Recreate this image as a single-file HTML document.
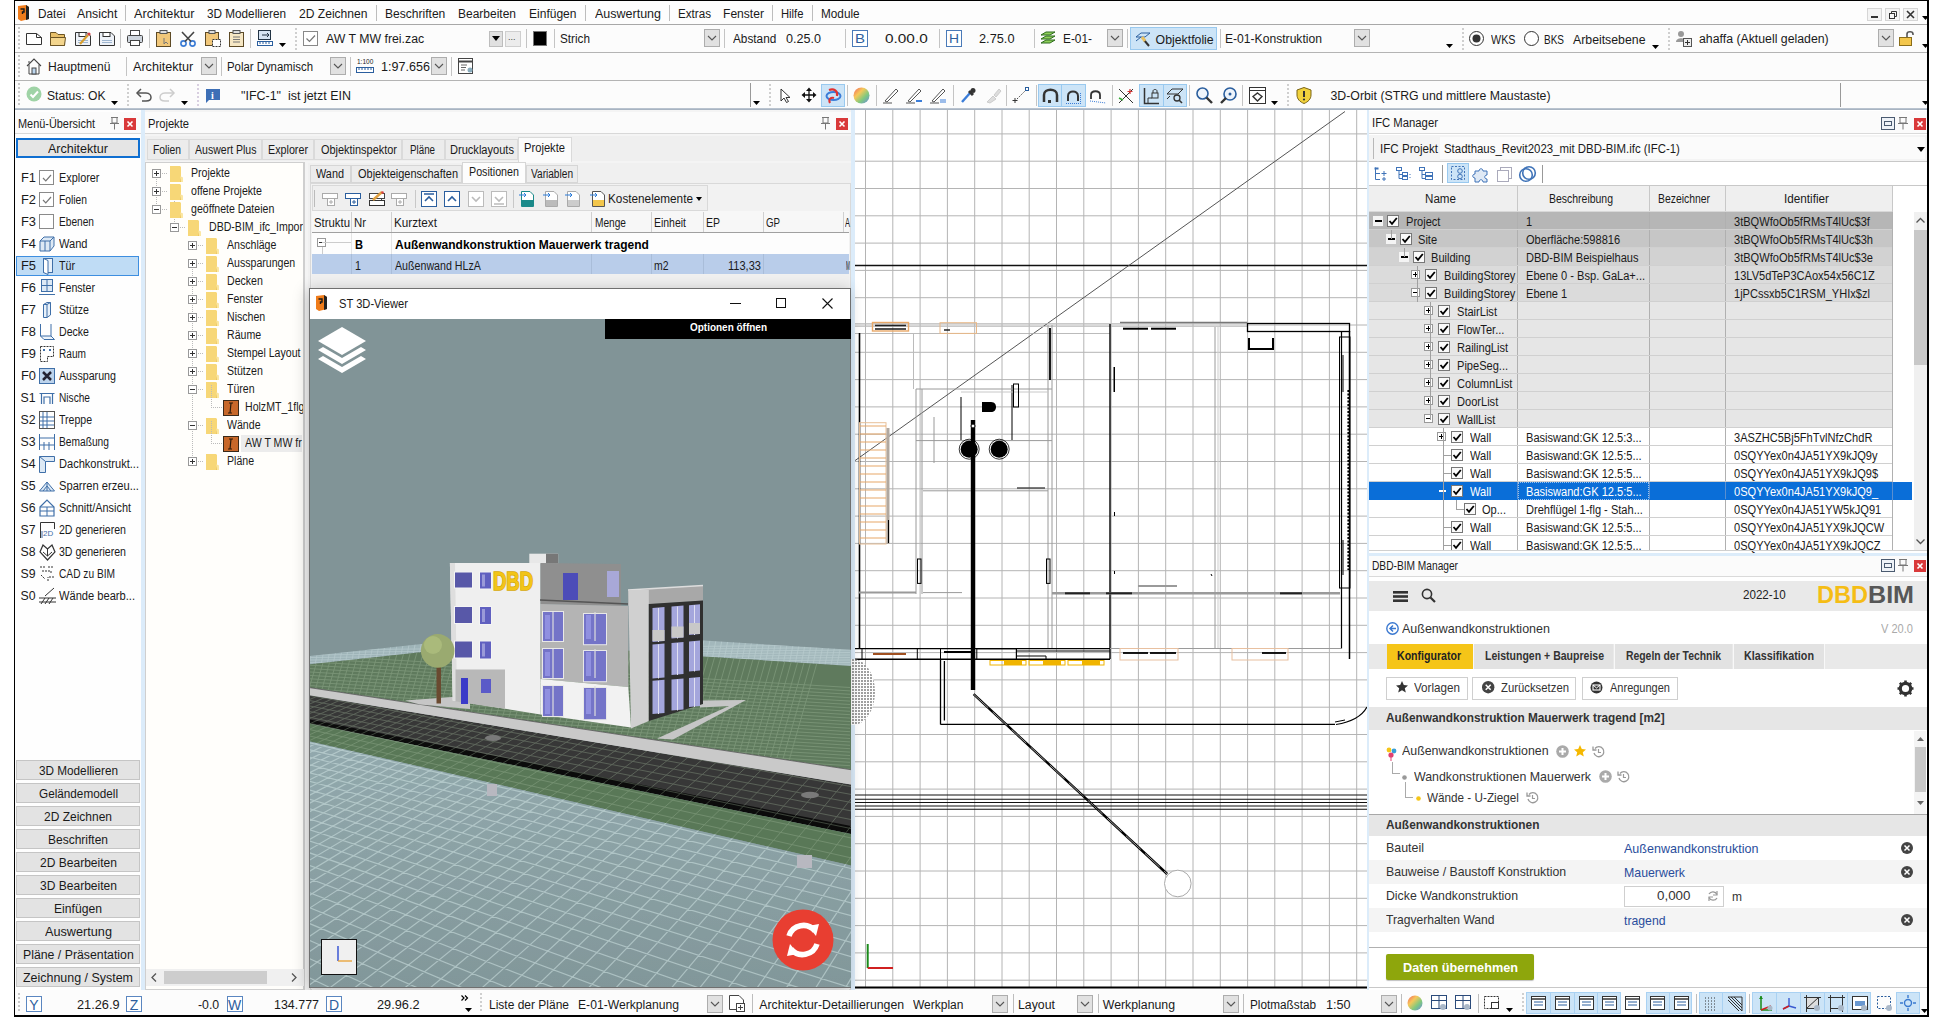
<!DOCTYPE html>
<html><head><meta charset="utf-8">
<style>
*{margin:0;padding:0;box-sizing:border-box}
html,body{width:1943px;height:1017px;overflow:hidden;background:#fff;font-family:"Liberation Sans",sans-serif;font-size:12px;color:#111}
.a{position:absolute}
.t{position:absolute;white-space:pre;line-height:1}
svg{position:absolute;overflow:visible}
</style></head><body>
<div class="a" style="left:14px;top:0px;width:1915px;height:1017px;background:#fcfcfc;"></div>
<div class="a" style="left:14px;top:0px;width:1915px;height:1px;background:#000;"></div>
<div class="a" style="left:14px;top:0px;width:1px;height:1017px;background:#000;"></div>
<div class="a" style="left:1927px;top:0px;width:2px;height:1017px;background:#000;"></div>
<div class="a" style="left:14px;top:1015px;width:1915px;height:2px;background:#000;"></div>
<div class="a" style="left:15px;top:1px;width:1912px;height:23px;background:#fdfdfd;"></div>
<div class="a" style="left:15px;top:24px;width:1912px;height:1px;background:#a8a8a8;"></div>
<svg style="left:18px;top:5px;" width="12" height="16" viewBox="0 0 12 16"><path d="M0 1 L8 0 L11 2 V14 L3 16 L0 14Z" fill="#f07c1a"/><path d="M8 0 L11 2 V14 L8 15Z" fill="#222"/><path d="M2.5 4 H6 V7 H4.5 V9" stroke="#1a1a1a" stroke-width="1.4" fill="none"/></svg>
<div class="t" style="left:37.5px;top:7.6px;font-size:12.3px;color:#1a1a1a;transform:scaleX(0.958);transform-origin:0 0;">Datei</div>
<div class="t" style="left:77.0px;top:7.6px;font-size:12.3px;color:#1a1a1a;">Ansicht</div>
<div class="t" style="left:134.3px;top:7.6px;font-size:12.3px;color:#1a1a1a;transform:scaleX(1.029);transform-origin:0 0;">Architektur</div>
<div class="t" style="left:207.0px;top:7.6px;font-size:12.3px;color:#1a1a1a;transform:scaleX(0.955);transform-origin:0 0;">3D Modellieren</div>
<div class="t" style="left:299.0px;top:7.6px;font-size:12.3px;color:#1a1a1a;transform:scaleX(0.982);transform-origin:0 0;">2D Zeichnen</div>
<div class="t" style="left:384.7px;top:7.6px;font-size:12.3px;color:#1a1a1a;transform:scaleX(0.980);transform-origin:0 0;">Beschriften</div>
<div class="t" style="left:458.0px;top:7.6px;font-size:12.3px;color:#1a1a1a;transform:scaleX(0.975);transform-origin:0 0;">Bearbeiten</div>
<div class="t" style="left:529.0px;top:7.6px;font-size:12.3px;color:#1a1a1a;transform:scaleX(0.978);transform-origin:0 0;">Einfügen</div>
<div class="t" style="left:594.5px;top:7.6px;font-size:12.3px;color:#1a1a1a;transform:scaleX(1.016);transform-origin:0 0;">Auswertung</div>
<div class="t" style="left:678.0px;top:7.6px;font-size:12.3px;color:#1a1a1a;transform:scaleX(0.947);transform-origin:0 0;">Extras</div>
<div class="t" style="left:723.0px;top:7.6px;font-size:12.3px;color:#1a1a1a;transform:scaleX(0.983);transform-origin:0 0;">Fenster</div>
<div class="t" style="left:781.0px;top:7.6px;font-size:12.3px;color:#1a1a1a;transform:scaleX(0.914);transform-origin:0 0;">Hilfe</div>
<div class="t" style="left:821.0px;top:7.6px;font-size:12.3px;color:#1a1a1a;transform:scaleX(0.957);transform-origin:0 0;">Module</div>
<div class="a" style="left:125px;top:5px;width:1px;height:16px;background:#bdbdbd;"></div>
<div class="a" style="left:376px;top:5px;width:1px;height:16px;background:#bdbdbd;"></div>
<div class="a" style="left:585px;top:5px;width:1px;height:16px;background:#bdbdbd;"></div>
<div class="a" style="left:669px;top:5px;width:1px;height:16px;background:#bdbdbd;"></div>
<div class="a" style="left:772px;top:5px;width:1px;height:16px;background:#bdbdbd;"></div>
<div class="a" style="left:812px;top:5px;width:1px;height:16px;background:#bdbdbd;"></div>
<div class="a" style="left:1867px;top:8px;width:15px;height:13px;background:#f4f4f4;border:1px solid #d6d6d6;"></div>
<div class="a" style="left:1885px;top:8px;width:15px;height:13px;background:#f4f4f4;border:1px solid #d6d6d6;"></div>
<div class="a" style="left:1903px;top:8px;width:15px;height:13px;background:#f4f4f4;border:1px solid #d6d6d6;"></div>
<div class="a" style="left:1871px;top:16px;width:7px;height:2px;background:#333;"></div>
<svg style="left:1888px;top:10px;" width="10" height="10" viewBox="0 0 10 10"><rect x="1.5" y="3.5" width="5" height="5" fill="none" stroke="#333"/><path d="M3.5 3.5V1.5H8.5V6.5H6.5" fill="none" stroke="#333"/></svg>
<svg style="left:1906px;top:10px;" width="9" height="9" viewBox="0 0 9 9"><path d="M1 1L8 8M8 1L1 8" stroke="#333" stroke-width="1.6"/></svg>
<svg style="left:1922px;top:16px;" width="7" height="4" viewBox="0 0 7 4"><path d="M0 0 L7 0 L3.5 4Z" fill="#000"/></svg>
<div class="a" style="left:15px;top:52px;width:1912px;height:1px;background:#b4b4b4;"></div>
<div class="a" style="left:15px;top:80px;width:1912px;height:1px;background:#b4b4b4;"></div>
<div class="a" style="left:15px;top:108px;width:1912px;height:1px;background:#b9c3cf;"></div>
<div class="a" style="left:15px;top:109px;width:1912px;height:1px;background:#a8b4c2;"></div>
<div class="a" style="left:18px;top:27px;width:2px;height:23px;background:repeating-linear-gradient(to bottom,#c8c8c8 0 2px,transparent 2px 4px)"></div>
<div class="a" style="left:18px;top:55px;width:2px;height:23px;background:repeating-linear-gradient(to bottom,#c8c8c8 0 2px,transparent 2px 4px)"></div>
<div class="a" style="left:18px;top:83px;width:2px;height:23px;background:repeating-linear-gradient(to bottom,#c8c8c8 0 2px,transparent 2px 4px)"></div>
<svg style="left:26px;top:31px;" width="16" height="16" viewBox="0 0 16 16"><path d="M0.5 2.5 H10.5 L15.5 6.5 V13.5 H0.5Z" fill="#fff" stroke="#333"/><path d="M10.5 2.5 V6.5 H15.5" fill="none" stroke="#333"/></svg>
<svg style="left:50px;top:31px;" width="16" height="16" viewBox="0 0 16 16"><path d="M0.5 1.5 H6 L8 3.5 H14.5 V14.5 H0.5Z" fill="#e8c06a" stroke="#6b5424"/><path d="M0.5 6.5 H15.5 L14.5 14.5 H0.5Z" fill="#f3d58d" stroke="#6b5424"/></svg>
<svg style="left:75px;top:31px;" width="16" height="16" viewBox="0 0 16 16"><path d="M0.5 1.5 H12 L15.5 5 V14.5 H0.5Z" fill="#eef2f8" stroke="#333"/><rect x="4" y="1.5" width="7" height="4" fill="#fff" stroke="#333"/><path d="M3 9.5H13M3 11.5H13" stroke="#9fb6d0"/><path d="M5 13 L13 4" stroke="#d9a030" stroke-width="2.2"/><circle cx="14" cy="3" r="1.6" fill="#d94040"/></svg>
<svg style="left:99px;top:31px;" width="16" height="16" viewBox="0 0 16 16"><path d="M0.5 1.5 H12 L15.5 5 V14.5 H0.5Z" fill="#eef2f8" stroke="#333"/><rect x="4" y="1.5" width="7" height="4" fill="#fff" stroke="#333"/><path d="M3 9.5H13M3 11.5H13" stroke="#9fb6d0"/></svg>
<div class="a" style="left:120px;top:29px;width:1px;height:19px;background:#c4c4c4;"></div>
<svg style="left:127px;top:30px;" width="16" height="16" viewBox="0 0 16 16"><rect x="3.5" y="0.5" width="9" height="5" fill="#fff" stroke="#444"/><rect x="0.5" y="5.5" width="15" height="7" rx="1" fill="#cfd6de" stroke="#444"/><rect x="3.5" y="10.5" width="9" height="5" fill="#fff" stroke="#444"/></svg>
<div class="a" style="left:149px;top:29px;width:1px;height:19px;background:#c4c4c4;"></div>
<svg style="left:156px;top:30px;" width="15" height="17" viewBox="0 0 15 17"><rect x="0.5" y="2.5" width="14" height="14" fill="#f1c77a" stroke="#5d4a26"/><rect x="4" y="0.5" width="7" height="3" fill="#ddd" stroke="#555"/><path d="M8 8 L8 14 L10 12 L12 14" stroke="#777" fill="none"/></svg>
<svg style="left:180px;top:31px;" width="16" height="16" viewBox="0 0 16 16"><circle cx="3.5" cy="12.5" r="2.6" fill="none" stroke="#3a7bd5" stroke-width="1.6"/><circle cx="12.5" cy="12.5" r="2.6" fill="none" stroke="#3a7bd5" stroke-width="1.6"/><path d="M5 10.5 L14 1M11 10.5 L2 1" stroke="#444" stroke-width="1.6"/></svg>
<svg style="left:205px;top:30px;" width="16" height="17" viewBox="0 0 16 17"><rect x="0.5" y="2.5" width="13" height="13" fill="#f1c77a" stroke="#5d4a26"/><rect x="4" y="0.5" width="6" height="3" fill="#ddd" stroke="#555"/><rect x="7.5" y="9.5" width="8" height="7" fill="#fff" stroke="#333" stroke-dasharray="2 1"/></svg>
<svg style="left:229px;top:30px;" width="15" height="17" viewBox="0 0 15 17"><rect x="0.5" y="2.5" width="14" height="14" fill="#f6e7c4" stroke="#5d4a26"/><rect x="4" y="0.5" width="7" height="3" fill="#ddd" stroke="#555"/><path d="M4 7H11M4 9.5H11M4 12H11" stroke="#777"/></svg>
<div class="a" style="left:250px;top:29px;width:1px;height:19px;background:#c4c4c4;"></div>
<svg style="left:257px;top:30px;" width="16" height="17" viewBox="0 0 16 17"><rect x="1.5" y="0.5" width="12" height="9" fill="#d5e3f3" stroke="#234" /><path d="M5 5H12M10 3L12 5L10 7" stroke="#234" fill="none"/><rect x="0.5" y="11.5" width="15" height="4" fill="#fff" stroke="#2a5e9e"/><path d="M3 12V14M6 12V14M9 12V14M12 12V14" stroke="#2a5e9e"/></svg>
<svg style="left:279px;top:43px;" width="7" height="4" viewBox="0 0 7 4"><path d="M0 0 L7 0 L3.5 4Z" fill="#000"/></svg>
<div class="a" style="left:295px;top:28px;width:2px;height:22px;background:repeating-linear-gradient(to bottom,#cfcfcf 0 2px,transparent 2px 4px)"></div>
<div class="a" style="left:303px;top:31px;width:15px;height:15px;background:#fff;border:1px solid #888;"></div>
<svg style="left:305px;top:34px;" width="11" height="9" viewBox="0 0 11 9"><path d="M1.5 4.5L4.5 7.5L10 1.5" stroke="#777" stroke-width="1.2" fill="none"/></svg>
<div class="t" style="left:326.0px;top:32.6px;font-size:12.3px;color:#1a1a1a;">AW T MW frei.zac</div>
<div class="a" style="left:489px;top:31px;width:14px;height:16px;background:#e0e0e0;border:1px solid #bdbdbd;"></div>
<svg style="left:492px;top:36px;" width="8" height="5" viewBox="0 0 8 5"><path d="M0 0H8L4 5Z" fill="#000"/></svg>
<div class="a" style="left:505px;top:31px;width:16px;height:16px;background:#ececec;border:1px solid #cfcfcf;"></div>
<div class="t" style="left:508.0px;top:33.4px;font-size:9px;color:#444;">...</div>
<div class="a" style="left:526px;top:29px;width:1px;height:19px;background:#c4c4c4;"></div>
<div class="a" style="left:533px;top:31px;width:14px;height:15px;background:#000;border:1px solid #777;"></div>
<div class="a" style="left:554px;top:29px;width:1px;height:19px;background:#c4c4c4;"></div>
<div class="t" style="left:560.0px;top:32.6px;font-size:12.3px;color:#1a1a1a;transform:scaleX(0.954);transform-origin:0 0;">Strich</div>
<div class="a" style="left:704px;top:29px;width:16px;height:18px;background:#e1e1e1;border:1px solid #adadad;"></div>
<svg style="left:704px;top:29px;" width="16" height="18" viewBox="0 0 16 18"><path d="M4.0 7.0 L8.0 11.0 L12.0 7.0" stroke="#555" stroke-width="1.1" fill="none"/></svg>
<div class="a" style="left:724px;top:29px;width:1px;height:19px;background:#c4c4c4;"></div>
<div class="t" style="left:732.7px;top:32.6px;font-size:12.3px;color:#1a1a1a;transform:scaleX(0.959);transform-origin:0 0;">Abstand</div>
<div class="t" style="left:786.0px;top:32.6px;font-size:12.3px;color:#1a1a1a;transform:scaleX(1.023);transform-origin:0 0;">0.25.0</div>
<div class="a" style="left:845px;top:29px;width:1px;height:19px;background:#c4c4c4;"></div>
<div class="a" style="left:852px;top:30px;width:16px;height:17px;background:#fff;border:1px solid #4a7ab8;"></div>
<div class="t" style="left:855.0px;top:32.0px;font-size:13px;color:#2f5f9e;transform:scaleX(1.153);transform-origin:0 0;">B</div>
<div class="t" style="left:885.0px;top:32.6px;font-size:12.3px;color:#1a1a1a;transform:scaleX(1.249);transform-origin:0 0;">0.00.0</div>
<div class="a" style="left:939px;top:29px;width:1px;height:19px;background:#c4c4c4;"></div>
<div class="a" style="left:946px;top:30px;width:16px;height:17px;background:#fff;border:1px solid #4a7ab8;"></div>
<div class="t" style="left:949.0px;top:32.0px;font-size:13px;color:#2f5f9e;transform:scaleX(1.065);transform-origin:0 0;">H</div>
<div class="t" style="left:979.0px;top:32.6px;font-size:12.3px;color:#1a1a1a;transform:scaleX(1.038);transform-origin:0 0;">2.75.0</div>
<div class="a" style="left:1034px;top:29px;width:1px;height:19px;background:#c4c4c4;"></div>
<svg style="left:1040px;top:31px;" width="16" height="15" viewBox="0 0 16 15"><path d="M1 4L6 1H15L10 4Z" fill="#8fcf5a" stroke="#2d6b1e"/><path d="M1 8L6 5H15L10 8Z" fill="#8fcf5a" stroke="#2d6b1e"/><path d="M1 12L6 9H15L10 12Z" fill="#8fcf5a" stroke="#2d6b1e"/></svg>
<div class="t" style="left:1063.0px;top:32.6px;font-size:12.3px;color:#1a1a1a;transform:scaleX(0.964);transform-origin:0 0;">E-01-</div>
<div class="a" style="left:1107px;top:29px;width:16px;height:18px;background:#e1e1e1;border:1px solid #adadad;"></div>
<svg style="left:1107px;top:29px;" width="16" height="18" viewBox="0 0 16 18"><path d="M4.0 7.0 L8.0 11.0 L12.0 7.0" stroke="#555" stroke-width="1.1" fill="none"/></svg>
<div class="a" style="left:1127px;top:29px;width:1px;height:19px;background:#c4c4c4;"></div>
<div class="a" style="left:1130px;top:27px;width:87px;height:23px;background:#cce4f7;border:1px solid #99c9ef;"></div>
<svg style="left:1135px;top:31px;" width="16" height="16" viewBox="0 0 16 16"><path d="M1 6L6 2H15L10 6Z" fill="none" stroke="#2a5e9e"/><path d="M1 10L6 6" stroke="#2a5e9e"/><path d="M9 9L14 15" stroke="#333" stroke-width="2"/><path d="M7 6L10 10" stroke="#e8c060" stroke-width="3"/></svg>
<div class="t" style="left:1155.6px;top:33.6px;font-size:12.3px;color:#1a1a1a;">Objektfolie</div>
<div class="a" style="left:1220px;top:29px;width:1px;height:19px;background:#c4c4c4;"></div>
<div class="t" style="left:1225.0px;top:32.6px;font-size:12.3px;color:#1a1a1a;transform:scaleX(0.985);transform-origin:0 0;">E-01-Konstruktion</div>
<div class="a" style="left:1354px;top:29px;width:16px;height:18px;background:#e1e1e1;border:1px solid #adadad;"></div>
<svg style="left:1354px;top:29px;" width="16" height="18" viewBox="0 0 16 18"><path d="M4.0 7.0 L8.0 11.0 L12.0 7.0" stroke="#555" stroke-width="1.1" fill="none"/></svg>
<svg style="left:1446px;top:44px;" width="7" height="4" viewBox="0 0 7 4"><path d="M0 0 L7 0 L3.5 4Z" fill="#000"/></svg>
<div class="a" style="left:1462px;top:28px;width:2px;height:22px;background:repeating-linear-gradient(to bottom,#cfcfcf 0 2px,transparent 2px 4px)"></div>
<svg style="left:1469px;top:31px;" width="16" height="16" viewBox="0 0 16 16"><circle cx="7.5" cy="7.5" r="7" fill="#fff" stroke="#333"/><circle cx="7.5" cy="7.5" r="4" fill="#333"/></svg>
<div class="t" style="left:1490.5px;top:33.6px;font-size:12.3px;color:#1a1a1a;transform:scaleX(0.874);transform-origin:0 0;">WKS</div>
<svg style="left:1524px;top:31px;" width="15" height="15" viewBox="0 0 15 15"><circle cx="7.5" cy="7.5" r="7" fill="#fff" stroke="#333"/></svg>
<div class="t" style="left:1544.0px;top:33.6px;font-size:12.3px;color:#1a1a1a;transform:scaleX(0.813);transform-origin:0 0;">BKS</div>
<div class="t" style="left:1573.0px;top:33.6px;font-size:12.3px;color:#1a1a1a;">Arbeitsebene</div>
<svg style="left:1652px;top:45px;" width="7" height="4" viewBox="0 0 7 4"><path d="M0 0 L7 0 L3.5 4Z" fill="#000"/></svg>
<div class="a" style="left:1668px;top:28px;width:2px;height:22px;background:repeating-linear-gradient(to bottom,#cfcfcf 0 2px,transparent 2px 4px)"></div>
<svg style="left:1676px;top:30px;" width="16" height="17" viewBox="0 0 16 17"><circle cx="5" cy="4" r="3" fill="#999"/><path d="M0 12C0 7 10 7 10 12" fill="#999"/><rect x="7.5" y="8.5" width="8" height="8" fill="#eee" stroke="#555"/><path d="M11.5 10V15M9 12.5H14" stroke="#333"/></svg>
<div class="t" style="left:1699.0px;top:32.6px;font-size:12.3px;color:#1a1a1a;">ahaffa (Aktuell geladen)</div>
<div class="a" style="left:1878px;top:29px;width:16px;height:18px;background:#e1e1e1;border:1px solid #adadad;"></div>
<svg style="left:1878px;top:29px;" width="16" height="18" viewBox="0 0 16 18"><path d="M4.0 7.0 L8.0 11.0 L12.0 7.0" stroke="#555" stroke-width="1.1" fill="none"/></svg>
<svg style="left:1899px;top:30px;" width="18" height="17" viewBox="0 0 18 17"><path d="M8 7V4C8 1 14 1 14 4V5" stroke="#555" stroke-width="1.6" fill="none"/><rect x="0.5" y="7.5" width="12" height="8" fill="#f3c64b" stroke="#8a6d1a"/></svg>
<svg style="left:1922px;top:44px;" width="7" height="4" viewBox="0 0 7 4"><path d="M0 0 L7 0 L3.5 4Z" fill="#000"/></svg>
<svg style="left:26px;top:58px;" width="16" height="17" viewBox="0 0 16 17"><path d="M1 8L8 1L15 8" stroke="#444" fill="none" stroke-width="1.1"/><path d="M3 6.5V16H13V6.5" stroke="#444" fill="none"/><rect x="6" y="10" width="4" height="6" fill="#bcd6ee" stroke="#444"/><path d="M3 3V5" stroke="#444"/></svg>
<div class="t" style="left:48.4px;top:60.6px;font-size:12.3px;color:#1a1a1a;transform:scaleX(0.984);transform-origin:0 0;">Hauptmenü</div>
<div class="a" style="left:126px;top:57px;width:1px;height:19px;background:#c4c4c4;"></div>
<div class="t" style="left:132.5px;top:60.6px;font-size:12.3px;color:#1a1a1a;transform:scaleX(1.026);transform-origin:0 0;">Architektur</div>
<div class="a" style="left:201px;top:57px;width:16px;height:18px;background:#e1e1e1;border:1px solid #adadad;"></div>
<svg style="left:201px;top:57px;" width="16" height="18" viewBox="0 0 16 18"><path d="M4.0 7.0 L8.0 11.0 L12.0 7.0" stroke="#555" stroke-width="1.1" fill="none"/></svg>
<div class="a" style="left:221px;top:57px;width:1px;height:19px;background:#c4c4c4;"></div>
<div class="t" style="left:227.0px;top:60.6px;font-size:12.3px;color:#1a1a1a;transform:scaleX(0.925);transform-origin:0 0;">Polar Dynamisch</div>
<div class="a" style="left:330px;top:57px;width:16px;height:18px;background:#e1e1e1;border:1px solid #adadad;"></div>
<svg style="left:330px;top:57px;" width="16" height="18" viewBox="0 0 16 18"><path d="M4.0 7.0 L8.0 11.0 L12.0 7.0" stroke="#555" stroke-width="1.1" fill="none"/></svg>
<div class="a" style="left:350px;top:57px;width:1px;height:19px;background:#c4c4c4;"></div>
<svg style="left:356px;top:58px;" width="19" height="16" viewBox="0 0 19 16"><text x="1" y="6" font-size="6.5" font-family="Liberation Sans" fill="#222">1:100</text><rect x="0.5" y="9.5" width="17" height="5" fill="#fff" stroke="#2a5e9e"/><path d="M3 10V12M6 10V12M9 10V12M12 10V12M15 10V12" stroke="#2a5e9e"/></svg>
<div class="t" style="left:381.0px;top:60.6px;font-size:12.3px;color:#1a1a1a;transform:scaleX(1.023);transform-origin:0 0;">1:97.656</div>
<div class="a" style="left:431px;top:57px;width:16px;height:18px;background:#e1e1e1;border:1px solid #adadad;"></div>
<svg style="left:431px;top:57px;" width="16" height="18" viewBox="0 0 16 18"><path d="M4.0 7.0 L8.0 11.0 L12.0 7.0" stroke="#555" stroke-width="1.1" fill="none"/></svg>
<div class="a" style="left:451px;top:57px;width:1px;height:19px;background:#c4c4c4;"></div>
<svg style="left:458px;top:58px;" width="17" height="17" viewBox="0 0 17 17"><rect x="0.5" y="0.5" width="14" height="15" fill="#fff" stroke="#444"/><path d="M0.5 3.5H14.5" stroke="#444" stroke-width="2"/><path d="M3 7H9M3 9.5H8M3 12H7" stroke="#666"/><circle cx="12" cy="12" r="2.5" fill="#8ab"/></svg>
<svg style="left:26px;top:86px;" width="17" height="17" viewBox="0 0 17 17"><circle cx="8" cy="8" r="7.5" fill="#9fd3a6"/><path d="M4.5 8.5L7 11L12 5.5" stroke="#fff" stroke-width="2" fill="none"/></svg>
<div class="t" style="left:46.7px;top:89.6px;font-size:12.3px;color:#1a1a1a;transform:scaleX(0.985);transform-origin:0 0;">Status: OK</div>
<svg style="left:111px;top:101px;" width="7" height="4" viewBox="0 0 7 4"><path d="M0 0 L7 0 L3.5 4Z" fill="#000"/></svg>
<div class="a" style="left:127px;top:84px;width:2px;height:23px;background:repeating-linear-gradient(to bottom,#cfcfcf 0 2px,transparent 2px 4px)"></div>
<svg style="left:136px;top:88px;" width="16" height="14" viewBox="0 0 16 14"><path d="M5 1L1 5L5 9" stroke="#555" stroke-width="1.5" fill="none"/><path d="M1 5H10C14 5 15 8 15 9.5C15 11 14 13 10 13H6" stroke="#555" stroke-width="1.5" fill="none"/></svg>
<svg style="left:159px;top:88px;" width="16" height="14" viewBox="0 0 16 14"><path d="M11 1L15 5L11 9" stroke="#ccc" stroke-width="1.5" fill="none"/><path d="M15 5H6C2 5 1 8 1 9.5C1 11 2 13 6 13H10" stroke="#ccc" stroke-width="1.5" fill="none"/></svg>
<svg style="left:181px;top:101px;" width="7" height="4" viewBox="0 0 7 4"><path d="M0 0 L7 0 L3.5 4Z" fill="#000"/></svg>
<div class="a" style="left:197px;top:84px;width:2px;height:23px;background:repeating-linear-gradient(to bottom,#d8cfe0 0 2px,transparent 2px 4px)"></div>
<svg style="left:206px;top:88px;" width="15" height="16" viewBox="0 0 15 16"><path d="M0 1H14V12H3L0 15Z" fill="#3d6fb6"/><text x="5" y="10.5" font-size="10" font-family="Liberation Serif" font-weight="bold" fill="#fff">i</text></svg>
<div class="t" style="left:241.0px;top:89.6px;font-size:12.3px;color:#1a1a1a;transform:scaleX(1.014);transform-origin:0 0;">"IFC-1"  ist jetzt EIN</div>
<div class="a" style="left:750px;top:83px;width:1px;height:24px;background:#999;"></div>
<svg style="left:753px;top:101px;" width="7" height="4" viewBox="0 0 7 4"><path d="M0 0 L7 0 L3.5 4Z" fill="#000"/></svg>
<div class="a" style="left:769px;top:84px;width:2px;height:23px;background:repeating-linear-gradient(to bottom,#cfcfcf 0 2px,transparent 2px 4px)"></div>
<svg style="left:780px;top:88px;" width="11" height="15" viewBox="0 0 11 15"><path d="M1 1V13L4 10L6.5 14.5L8.5 13.5L6 9.5H10Z" fill="#fff" stroke="#333"/></svg>
<svg style="left:801px;top:87px;" width="16" height="16" viewBox="0 0 16 16"><path d="M8 0.5L11 4H5Z M8 15.5L11 12H5Z M0.5 8L4 5V11Z M15.5 8L12 5V11Z" fill="#111"/><path d="M8 3V13M3 8H13" stroke="#111" stroke-width="1.3"/></svg>
<div class="a" style="left:821px;top:84px;width:24px;height:23px;background:#cce4f7;border:1px solid #99c9ef;"></div>
<svg style="left:825px;top:87px;" width="17" height="17" viewBox="0 0 17 17"><ellipse cx="8.5" cy="9" rx="7" ry="4" fill="none" stroke="#3b7dd8" stroke-width="2"/><path d="M4 3C9 1 13 4 12 9" stroke="#e03030" stroke-width="2.2" fill="none"/><path d="M5 16C3 12 6 10 9 11" stroke="#e03030" stroke-width="2" fill="none"/></svg>
<div class="a" style="left:847px;top:85px;width:1px;height:21px;background:#c4c4c4;"></div>
<svg style="left:853px;top:87px;" width="17" height="17" viewBox="0 0 17 17"><defs><linearGradient id="cw" x1="0" y1="0" x2="1" y2="1"><stop offset="0" stop-color="#f1615d"/><stop offset=".35" stop-color="#f6c85a"/><stop offset=".65" stop-color="#7fc97f"/><stop offset="1" stop-color="#6a8ae0"/></linearGradient></defs><circle cx="8.5" cy="8.5" r="8" fill="url(#cw)"/></svg>
<div class="a" style="left:876px;top:85px;width:1px;height:21px;background:#c4c4c4;"></div>
<svg style="left:883px;top:87px;" width="17" height="17" viewBox="0 0 17 17"><path d="M2 14L13 2L15 4L4 15Z" fill="#fff" stroke="#555"/><path d="M0 16H9" stroke="#555"/></svg>
<svg style="left:906px;top:87px;" width="17" height="17" viewBox="0 0 17 17"><path d="M2 14L13 2L15 4L4 15Z" fill="#fff" stroke="#555"/><path d="M0 16H9" stroke="#555"/><path d="M10 14H16" stroke="#3b7dd8" stroke-width="2"/></svg>
<svg style="left:930px;top:87px;" width="17" height="17" viewBox="0 0 17 17"><path d="M2 14L13 2L15 4L4 15Z" fill="#fff" stroke="#555"/><path d="M0 16H9" stroke="#555"/><path d="M10 13H16M10 15H16" stroke="#3b7dd8" stroke-width="1"/></svg>
<div class="a" style="left:953px;top:85px;width:1px;height:21px;background:#c4c4c4;"></div>
<svg style="left:960px;top:87px;" width="16" height="17" viewBox="0 0 16 17"><path d="M2 15L10 6" stroke="#3b7dd8" stroke-width="2.4"/><path d="M9 4L13 8" stroke="#333" stroke-width="3"/><circle cx="13" cy="3.5" r="2.5" fill="#333"/></svg>
<svg style="left:986px;top:88px;" width="15" height="15" viewBox="0 0 15 15"><path d="M1 14L7 8L10 11L4 15Z M8 7L13 1L15 3L10 9Z" fill="#ddd" stroke="#ccc"/></svg>
<div class="a" style="left:1006px;top:85px;width:1px;height:21px;background:#c4c4c4;"></div>
<svg style="left:1012px;top:87px;" width="18" height="17" viewBox="0 0 18 17"><path d="M3 14L13 4" stroke="#333" stroke-dasharray="1.5 1.5"/><rect x="13.5" y="0.5" width="3" height="3" fill="#fff" stroke="#2a5e9e"/><path d="M3 11V16M0.5 13.5H5.5" stroke="#333"/></svg>
<div class="a" style="left:1036px;top:85px;width:1px;height:21px;background:#c4c4c4;"></div>
<div class="a" style="left:1038px;top:84px;width:48px;height:23px;background:#cce4f7;border:1px solid #99c9ef;"></div>
<div class="a" style="left:1061px;top:85px;width:1px;height:21px;background:#99c9ef;"></div>
<svg style="left:1042px;top:87px;" width="17" height="17" viewBox="0 0 17 17"><path d="M2 15V8C2 1 15 1 15 8V15" stroke="#333" stroke-width="2.5" fill="none"/><rect x="6" y="13" width="3" height="3" fill="#333"/></svg>
<svg style="left:1065px;top:88px;" width="17" height="16" viewBox="0 0 17 16"><path d="M3 13V8C3 2 13 2 13 8V13" stroke="#333" stroke-width="2" fill="none"/><path d="M1 15.5H16M15.5 5V15" stroke="#3b7dd8" stroke-dasharray="1 1"/></svg>
<svg style="left:1089px;top:88px;" width="18" height="16" viewBox="0 0 18 16"><path d="M2 11V7C2 2 11 2 11 7V11" stroke="#333" stroke-width="1.8" fill="none"/><path d="M1 13L17 15" stroke="#3b7dd8" stroke-dasharray="1 1"/></svg>
<div class="a" style="left:1112px;top:85px;width:1px;height:21px;background:#c4c4c4;"></div>
<svg style="left:1118px;top:88px;" width="17" height="16" viewBox="0 0 17 16"><path d="M1 1L15 15M15 1L1 15" stroke="#333"/><path d="M12 1V6M9.5 3.5H14.5" stroke="#d03030" stroke-width="1.2"/><path d="M1 10L5 12" stroke="#3a3" stroke-width="1.4"/></svg>
<div class="a" style="left:1139px;top:84px;width:48px;height:23px;background:#cce4f7;border:1px solid #99c9ef;"></div>
<div class="a" style="left:1163px;top:85px;width:1px;height:21px;background:#99c9ef;"></div>
<svg style="left:1143px;top:87px;" width="17" height="18" viewBox="0 0 17 18"><path d="M1.5 1V16.5H16" stroke="#333" stroke-width="1.5" fill="none"/><path d="M5 16V11H9" stroke="#333" fill="none"/><rect x="9" y="6" width="6" height="5" fill="none" stroke="#333"/><path d="M10 6V4C10 2 14 2 14 4V6" stroke="#333" fill="none"/></svg>
<svg style="left:1166px;top:88px;" width="18" height="16" viewBox="0 0 18 16"><path d="M1 6L6 1H17L12 6Z" fill="none" stroke="#333"/><path d="M1 11L4 8" stroke="#333"/><circle cx="11" cy="10" r="3" fill="none" stroke="#333" stroke-width="1.3"/><path d="M13 12L16 15" stroke="#333" stroke-width="1.6"/></svg>
<div class="a" style="left:1189px;top:85px;width:1px;height:21px;background:#c4c4c4;"></div>
<svg style="left:1196px;top:87px;" width="17" height="17" viewBox="0 0 17 17"><circle cx="6.5" cy="6.5" r="5.5" fill="#eef4fb" stroke="#2a5e9e" stroke-width="1.6"/><path d="M10.5 10.5L16 16" stroke="#333" stroke-width="2.4"/></svg>
<svg style="left:1220px;top:87px;" width="17" height="17" viewBox="0 0 17 17"><circle cx="10" cy="7" r="6" fill="#eef4fb" stroke="#2a5e9e" stroke-width="1.6"/><circle cx="10" cy="7" r="1.5" fill="#2a5e9e"/><path d="M6 11L1 16" stroke="#333" stroke-width="2.4"/></svg>
<div class="a" style="left:1242px;top:85px;width:1px;height:21px;background:#c4c4c4;"></div>
<svg style="left:1249px;top:87px;" width="17" height="17" viewBox="0 0 17 17"><rect x="0.5" y="0.5" width="16" height="16" fill="#fff" stroke="#333"/><path d="M0.5 3.5H16.5" stroke="#333"/><path d="M8.5 6L13 9.5L8.5 14L4 9.5Z" fill="none" stroke="#333" stroke-width="1.4"/></svg>
<svg style="left:1271px;top:101px;" width="7" height="4" viewBox="0 0 7 4"><path d="M0 0 L7 0 L3.5 4Z" fill="#000"/></svg>
<div class="a" style="left:1287px;top:84px;width:2px;height:23px;background:repeating-linear-gradient(to bottom,#cfcfcf 0 2px,transparent 2px 4px)"></div>
<svg style="left:1296px;top:87px;" width="16" height="17" viewBox="0 0 16 17"><path d="M8 0.5L15 3V8C15 12 12 15 8 16.5C4 15 1 12 1 8V3Z" fill="#f1d23c" stroke="#7a6414"/><path d="M8 4V10" stroke="#333" stroke-width="2"/><circle cx="8" cy="12.5" r="1.1" fill="#333"/></svg>
<div class="t" style="left:1330.5px;top:89.6px;font-size:12.3px;color:#1a1a1a;">3D-Orbit (STRG und mittlere Maustaste)</div>
<div class="a" style="left:1840px;top:83px;width:1px;height:24px;background:#999;"></div>
<svg style="left:1922px;top:101px;" width="7" height="4" viewBox="0 0 7 4"><path d="M0 0 L7 0 L3.5 4Z" fill="#000"/></svg>
<div class="a" style="left:15px;top:110px;width:126px;height:880px;background:#fefefe;"></div>
<div class="a" style="left:15px;top:112px;width:126px;height:21px;background:#fbfbfb;"></div>
<div class="a" style="left:15px;top:133px;width:126px;height:1px;background:#d8d8d8;"></div>
<div class="t" style="left:18.0px;top:117.8px;font-size:12px;color:#1a1a1a;transform:scaleX(0.909);transform-origin:0 0;">Menü-Übersicht</div>
<svg style="left:109px;top:117px;" width="11" height="13" viewBox="0 0 11 13"><path d="M2 0.5H9M3 0.5V6H8V0.5M1 6.5H10M5.5 6.5V12.5" stroke="#777" fill="none"/></svg>
<div class="a" style="left:124px;top:118px;width:12px;height:12px;background:#d9393a;"></div>
<svg style="left:126px;top:120px;" width="8" height="8" viewBox="0 0 8 8"><path d="M1.5 1.5L6.5 6.5M6.5 1.5L1.5 6.5" stroke="#fff" stroke-width="1.6"/></svg>
<div class="a" style="left:16px;top:138px;width:124px;height:20px;background:#e5e5e5;border:2px solid #0f6fd1;"></div>
<div class="t" style="left:48.0px;top:142.6px;font-size:12.3px;color:#1a1a1a;transform:scaleX(1.021);transform-origin:0 0;">Architektur</div>
<div class="t" style="left:20.5px;top:171.6px;font-size:12.3px;color:#1a1a1a;transform:scaleX(1.045);transform-origin:0 0;">F1</div>
<div class="a" style="left:39px;top:170px;width:15px;height:15px;background:#fff;border:1px solid #8a8a8a;"></div>
<svg style="left:42px;top:174px;" width="10" height="8" viewBox="0 0 10 8"><path d="M1 4L3.8 6.8L9 1" stroke="#777" stroke-width="1.2" fill="none"/></svg>
<div class="t" style="left:58.5px;top:171.6px;font-size:12.3px;color:#1a1a1a;transform:scaleX(0.884);transform-origin:0 0;">Explorer</div>
<div class="t" style="left:20.5px;top:193.6px;font-size:12.3px;color:#1a1a1a;transform:scaleX(1.045);transform-origin:0 0;">F2</div>
<div class="a" style="left:39px;top:192px;width:15px;height:15px;background:#fff;border:1px solid #8a8a8a;"></div>
<svg style="left:42px;top:196px;" width="10" height="8" viewBox="0 0 10 8"><path d="M1 4L3.8 6.8L9 1" stroke="#777" stroke-width="1.2" fill="none"/></svg>
<div class="t" style="left:58.5px;top:193.6px;font-size:12.3px;color:#1a1a1a;transform:scaleX(0.836);transform-origin:0 0;">Folien</div>
<div class="t" style="left:20.5px;top:215.6px;font-size:12.3px;color:#1a1a1a;transform:scaleX(1.045);transform-origin:0 0;">F3</div>
<div class="a" style="left:39px;top:214px;width:15px;height:15px;background:#fff;border:1px solid #8a8a8a;"></div>
<div class="t" style="left:58.5px;top:215.6px;font-size:12.3px;color:#1a1a1a;transform:scaleX(0.825);transform-origin:0 0;">Ebenen</div>
<div class="t" style="left:20.5px;top:237.6px;font-size:12.3px;color:#1a1a1a;transform:scaleX(1.045);transform-origin:0 0;">F4</div>
<svg style="left:39px;top:236px;" width="16" height="16" viewBox="0 0 16 16"><path d="M1 5L5 1H15V10L11 15H1Z" fill="#dde9f5" stroke="#3f6fa8"/><path d="M1 5H11V15M11 5L15 1M6 5V15" stroke="#3f6fa8" fill="none"/></svg>
<div class="t" style="left:58.5px;top:237.6px;font-size:12.3px;color:#1a1a1a;transform:scaleX(0.900);transform-origin:0 0;">Wand</div>
<div class="a" style="left:16px;top:256px;width:123px;height:20px;background:#bfdcf5;border:1px solid #3d8ee0;"></div>
<div class="t" style="left:20.5px;top:259.6px;font-size:12.3px;color:#1a1a1a;transform:scaleX(1.045);transform-origin:0 0;">F5</div>
<svg style="left:39px;top:257px;" width="16" height="18" viewBox="0 0 16 18"><rect x="4.5" y="1.5" width="9" height="14" fill="#e8f1fa" stroke="#3f6fa8"/><path d="M4.5 1.5L9 3.5V17.5L4.5 15.5Z" fill="#fff" stroke="#3f6fa8"/></svg>
<div class="t" style="left:58.5px;top:259.6px;font-size:12.3px;color:#1a1a1a;transform:scaleX(0.867);transform-origin:0 0;">Tür</div>
<div class="t" style="left:20.5px;top:281.6px;font-size:12.3px;color:#1a1a1a;transform:scaleX(1.045);transform-origin:0 0;">F6</div>
<svg style="left:39px;top:279px;" width="16" height="18" viewBox="0 0 16 18"><rect x="2.5" y="0.5" width="11" height="12" fill="#dde9f5" stroke="#3f6fa8"/><path d="M8 0.5V12.5M2.5 6.5H13.5M0 15.5H16" stroke="#3f6fa8"/></svg>
<div class="t" style="left:58.5px;top:281.6px;font-size:12.3px;color:#1a1a1a;transform:scaleX(0.863);transform-origin:0 0;">Fenster</div>
<div class="t" style="left:20.5px;top:303.6px;font-size:12.3px;color:#1a1a1a;transform:scaleX(1.045);transform-origin:0 0;">F7</div>
<svg style="left:39px;top:301px;" width="16" height="18" viewBox="0 0 16 18"><path d="M4.5 3.5L8 1.5H11.5V14L8 16.5H4.5Z" fill="#e8f1fa" stroke="#3f6fa8"/><path d="M4.5 3.5H8V16.5M8 3.5L11.5 1.5" stroke="#3f6fa8" fill="none"/></svg>
<div class="t" style="left:58.5px;top:303.6px;font-size:12.3px;color:#1a1a1a;transform:scaleX(0.860);transform-origin:0 0;">Stütze</div>
<div class="t" style="left:20.5px;top:325.6px;font-size:12.3px;color:#1a1a1a;transform:scaleX(1.045);transform-origin:0 0;">F8</div>
<svg style="left:39px;top:323px;" width="16" height="18" viewBox="0 0 16 18"><path d="M1.5 1V13L5 16.5H15.5L12 13H1.5M12 13V1" stroke="#3f6fa8" fill="#eef4fa"/></svg>
<div class="t" style="left:58.5px;top:325.6px;font-size:12.3px;color:#1a1a1a;transform:scaleX(0.860);transform-origin:0 0;">Decke</div>
<div class="t" style="left:20.5px;top:347.6px;font-size:12.3px;color:#1a1a1a;transform:scaleX(1.045);transform-origin:0 0;">F9</div>
<svg style="left:39px;top:345px;" width="16" height="18" viewBox="0 0 16 18"><path d="M1.5 1.5H14.5V11.5H8.5V16.5H1.5Z" fill="#fff" stroke="#333" stroke-dasharray="2 1"/><rect x="4" y="4" width="2" height="2" fill="#3f6fa8"/><rect x="10" y="4" width="2" height="2" fill="#3f6fa8"/></svg>
<div class="t" style="left:58.5px;top:347.6px;font-size:12.3px;color:#1a1a1a;transform:scaleX(0.823);transform-origin:0 0;">Raum</div>
<div class="t" style="left:20.5px;top:369.6px;font-size:12.3px;color:#1a1a1a;transform:scaleX(1.045);transform-origin:0 0;">F0</div>
<svg style="left:39px;top:368px;" width="16" height="16" viewBox="0 0 16 16"><rect x="0.5" y="0.5" width="15" height="15" fill="#bcd3ec" stroke="#3f6fa8"/><path d="M4 4L12 12M12 4L4 12" stroke="#223" stroke-width="2.5"/></svg>
<div class="t" style="left:58.5px;top:369.6px;font-size:12.3px;color:#1a1a1a;transform:scaleX(0.868);transform-origin:0 0;">Aussparung</div>
<div class="t" style="left:20.5px;top:391.6px;font-size:12.3px;color:#1a1a1a;">S1</div>
<svg style="left:39px;top:390px;" width="16" height="16" viewBox="0 0 16 16"><path d="M0.5 3.5H15.5M2.5 3.5V14M13.5 3.5V14M5 14V7H11V14" stroke="#3f6fa8" fill="none" stroke-width="1.2"/></svg>
<div class="t" style="left:58.5px;top:391.6px;font-size:12.3px;color:#1a1a1a;transform:scaleX(0.825);transform-origin:0 0;">Nische</div>
<div class="t" style="left:20.5px;top:413.6px;font-size:12.3px;color:#1a1a1a;">S2</div>
<svg style="left:39px;top:411px;" width="16" height="18" viewBox="0 0 16 18"><rect x="0.5" y="0.5" width="15" height="17" fill="#fff" stroke="#555"/><path d="M4 1V17M8 1V17M0.5 6H15M0.5 10H15M0.5 14H15" stroke="#3f6fa8"/></svg>
<div class="t" style="left:58.5px;top:413.6px;font-size:12.3px;color:#1a1a1a;transform:scaleX(0.857);transform-origin:0 0;">Treppe</div>
<div class="t" style="left:20.5px;top:435.6px;font-size:12.3px;color:#1a1a1a;">S3</div>
<svg style="left:39px;top:433px;" width="16" height="18" viewBox="0 0 16 18"><path d="M0.5 1V17M15.5 1V17M0.5 5H15.5M0.5 12H15.5M5 9V17M10 9V17" stroke="#3f6fa8" fill="none"/></svg>
<div class="t" style="left:58.5px;top:435.6px;font-size:12.3px;color:#1a1a1a;transform:scaleX(0.831);transform-origin:0 0;">Bemaßung</div>
<div class="t" style="left:20.5px;top:457.6px;font-size:12.3px;color:#1a1a1a;">S4</div>
<svg style="left:39px;top:455px;" width="16" height="18" viewBox="0 0 16 18"><path d="M0.5 1.5H15.5V6.5H6.5V17.5H0.5Z" fill="#dde9f5" stroke="#3f6fa8"/><path d="M0.5 1.5L6.5 6.5" stroke="#3f6fa8"/></svg>
<div class="t" style="left:58.5px;top:457.6px;font-size:12.3px;color:#1a1a1a;transform:scaleX(0.900);transform-origin:0 0;">Dachkonstrukt...</div>
<div class="t" style="left:20.5px;top:479.6px;font-size:12.3px;color:#1a1a1a;">S5</div>
<svg style="left:39px;top:479px;" width="16" height="14" viewBox="0 0 16 14"><path d="M0.5 12L8 3L15.5 12Z" fill="#dde9f5" stroke="#3f6fa8"/><path d="M8 3V12M4 12L8 7L12 12" stroke="#3f6fa8" fill="none"/></svg>
<div class="t" style="left:58.5px;top:479.6px;font-size:12.3px;color:#1a1a1a;transform:scaleX(0.907);transform-origin:0 0;">Sparren erzeu...</div>
<div class="t" style="left:20.5px;top:501.6px;font-size:12.3px;color:#1a1a1a;">S6</div>
<svg style="left:39px;top:499px;" width="16" height="18" viewBox="0 0 16 18"><path d="M1 8L8 1L15 8V17H1Z" fill="none" stroke="#3f6fa8" stroke-width="1.2"/><path d="M1 8H15M1 12H15M8 8V17" stroke="#3f6fa8"/></svg>
<div class="t" style="left:58.5px;top:501.6px;font-size:12.3px;color:#1a1a1a;transform:scaleX(0.885);transform-origin:0 0;">Schnitt/Ansicht</div>
<div class="t" style="left:20.5px;top:523.6px;font-size:12.3px;color:#1a1a1a;">S7</div>
<svg style="left:39px;top:521px;" width="17" height="18" viewBox="0 0 17 18"><path d="M1.5 17V1.5H15.5V8" stroke="#333" fill="none"/><text x="4" y="15" font-size="8" font-family="Liberation Sans" fill="#3f6fa8">2D</text><path d="M3 17V10" stroke="#3f6fa8"/></svg>
<div class="t" style="left:58.5px;top:523.6px;font-size:12.3px;color:#1a1a1a;transform:scaleX(0.859);transform-origin:0 0;">2D generieren</div>
<div class="t" style="left:20.5px;top:545.6px;font-size:12.3px;color:#1a1a1a;">S8</div>
<svg style="left:39px;top:543px;" width="17" height="18" viewBox="0 0 17 18"><path d="M8.5 17L1 9L4 2L8.5 6L13 2L16 9Z" fill="#fff" stroke="#333" stroke-width="1.2"/><path d="M4 9L8.5 13L13 9M8.5 6V13" stroke="#333" fill="none"/></svg>
<div class="t" style="left:58.5px;top:545.6px;font-size:12.3px;color:#1a1a1a;transform:scaleX(0.859);transform-origin:0 0;">3D generieren</div>
<div class="t" style="left:20.5px;top:567.6px;font-size:12.3px;color:#1a1a1a;">S9</div>
<svg style="left:39px;top:565px;" width="17" height="18" viewBox="0 0 17 18"><path d="M1 2H7M9 2H15M3 6H12V9M2 10L6 14M10 12H15M9 16V12" stroke="#333" stroke-dasharray="2 1" fill="none"/></svg>
<div class="t" style="left:58.5px;top:567.6px;font-size:12.3px;color:#1a1a1a;transform:scaleX(0.828);transform-origin:0 0;">CAD zu BIM</div>
<div class="t" style="left:20.5px;top:589.6px;font-size:12.3px;color:#1a1a1a;">S0</div>
<svg style="left:39px;top:587px;" width="17" height="18" viewBox="0 0 17 18"><path d="M0 11H17M0 15H17M2 17L6 11M6 17L10 11M10 17L14 11" stroke="#333" fill="none"/><path d="M6 9L15 1" stroke="#333"/></svg>
<div class="t" style="left:58.5px;top:589.6px;font-size:12.3px;color:#1a1a1a;transform:scaleX(0.904);transform-origin:0 0;">Wände bearb...</div>
<div class="a" style="left:16px;top:760px;width:124px;height:20px;background:#e3e3e3;border:1px solid #c5c5c5;"></div>
<div class="t" style="left:38.5px;top:764.6px;font-size:12.3px;color:#1a1a1a;transform:scaleX(0.955);transform-origin:0 0;">3D Modellieren</div>
<div class="a" style="left:16px;top:783px;width:124px;height:20px;background:#e3e3e3;border:1px solid #c5c5c5;"></div>
<div class="t" style="left:38.5px;top:787.6px;font-size:12.3px;color:#1a1a1a;transform:scaleX(0.955);transform-origin:0 0;">Geländemodell</div>
<div class="a" style="left:16px;top:806px;width:124px;height:20px;background:#e3e3e3;border:1px solid #c5c5c5;"></div>
<div class="t" style="left:44.0px;top:810.6px;font-size:12.3px;color:#1a1a1a;transform:scaleX(0.975);transform-origin:0 0;">2D Zeichnen</div>
<div class="a" style="left:16px;top:829px;width:124px;height:20px;background:#e3e3e3;border:1px solid #c5c5c5;"></div>
<div class="t" style="left:48.0px;top:833.6px;font-size:12.3px;color:#1a1a1a;transform:scaleX(0.975);transform-origin:0 0;">Beschriften</div>
<div class="a" style="left:16px;top:852px;width:124px;height:20px;background:#e3e3e3;border:1px solid #c5c5c5;"></div>
<div class="t" style="left:39.5px;top:856.6px;font-size:12.3px;color:#1a1a1a;transform:scaleX(0.979);transform-origin:0 0;">2D Bearbeiten</div>
<div class="a" style="left:16px;top:875px;width:124px;height:20px;background:#e3e3e3;border:1px solid #c5c5c5;"></div>
<div class="t" style="left:39.5px;top:879.6px;font-size:12.3px;color:#1a1a1a;transform:scaleX(0.979);transform-origin:0 0;">3D Bearbeiten</div>
<div class="a" style="left:16px;top:898px;width:124px;height:20px;background:#e3e3e3;border:1px solid #c5c5c5;"></div>
<div class="t" style="left:54.0px;top:902.6px;font-size:12.3px;color:#1a1a1a;transform:scaleX(0.988);transform-origin:0 0;">Einfügen</div>
<div class="a" style="left:16px;top:921px;width:124px;height:20px;background:#e3e3e3;border:1px solid #c5c5c5;"></div>
<div class="t" style="left:44.5px;top:925.6px;font-size:12.3px;color:#1a1a1a;transform:scaleX(1.031);transform-origin:0 0;">Auswertung</div>
<div class="a" style="left:16px;top:944px;width:124px;height:20px;background:#e3e3e3;border:1px solid #c5c5c5;"></div>
<div class="t" style="left:23.0px;top:948.6px;font-size:12.3px;color:#1a1a1a;">Pläne / Präsentation</div>
<div class="a" style="left:16px;top:967px;width:124px;height:20px;background:#e3e3e3;border:1px solid #c5c5c5;"></div>
<div class="t" style="left:23.0px;top:971.6px;font-size:12.3px;color:#1a1a1a;transform:scaleX(1.012);transform-origin:0 0;">Zeichnung / System</div>
<div class="a" style="left:141px;top:110px;width:4px;height:880px;background:#dcecfa;"></div>
<div class="a" style="left:145px;top:110px;width:706px;height:880px;background:#f4f4f4;"></div>
<div class="a" style="left:145px;top:112px;width:706px;height:21px;background:#fbfbfb;"></div>
<div class="a" style="left:145px;top:133px;width:706px;height:1px;background:#d8d8d8;"></div>
<div class="t" style="left:148.3px;top:117.6px;font-size:12.3px;color:#1a1a1a;transform:scaleX(0.909);transform-origin:0 0;">Projekte</div>
<svg style="left:820px;top:117px;" width="11" height="13" viewBox="0 0 11 13"><path d="M2 0.5H9M3 0.5V6H8V0.5M1 6.5H10M5.5 6.5V12.5" stroke="#777" fill="none"/></svg>
<div class="a" style="left:836px;top:118px;width:12px;height:12px;background:#d9393a;"></div>
<svg style="left:838px;top:120px;" width="8" height="8" viewBox="0 0 8 8"><path d="M1.5 1.5L6.5 6.5M6.5 1.5L1.5 6.5" stroke="#fff" stroke-width="1.6"/></svg>
<div class="a" style="left:145px;top:136px;width:706px;height:25px;background:#efefef;"></div>
<div class="a" style="left:147px;top:139px;width:41.5px;height:21px;background:#ececec;border:1px solid #dadada;"></div>
<div class="t" style="left:153.3px;top:143.6px;font-size:12.3px;color:#1a1a1a;transform:scaleX(0.836);transform-origin:0 0;">Folien</div>
<div class="a" style="left:188.5px;top:139px;width:73.80000000000001px;height:21px;background:#ececec;border:1px solid #dadada;"></div>
<div class="t" style="left:194.7px;top:143.6px;font-size:12.3px;color:#1a1a1a;transform:scaleX(0.857);transform-origin:0 0;">Auswert Plus</div>
<div class="a" style="left:262.3px;top:139px;width:51.89999999999998px;height:21px;background:#ececec;border:1px solid #dadada;"></div>
<div class="t" style="left:268.4px;top:143.6px;font-size:12.3px;color:#1a1a1a;transform:scaleX(0.873);transform-origin:0 0;">Explorer</div>
<div class="a" style="left:314.2px;top:139px;width:88.0px;height:21px;background:#ececec;border:1px solid #dadada;"></div>
<div class="t" style="left:320.7px;top:143.6px;font-size:12.3px;color:#1a1a1a;transform:scaleX(0.889);transform-origin:0 0;">Objektinspektor</div>
<div class="a" style="left:402.2px;top:139px;width:42.60000000000002px;height:21px;background:#ececec;border:1px solid #dadada;"></div>
<div class="t" style="left:410.0px;top:143.6px;font-size:12.3px;color:#1a1a1a;transform:scaleX(0.795);transform-origin:0 0;">Pläne</div>
<div class="a" style="left:444.8px;top:139px;width:73.19999999999999px;height:21px;background:#ececec;border:1px solid #dadada;"></div>
<div class="t" style="left:450.4px;top:143.6px;font-size:12.3px;color:#1a1a1a;transform:scaleX(0.900);transform-origin:0 0;">Drucklayouts</div>
<div class="a" style="left:518px;top:137px;width:54px;height:25px;background:#fbfbfb;border:1px solid #dadada;"></div>
<div class="a" style="left:519px;top:160px;width:52px;height:3px;background:#fbfbfb;"></div>
<div class="t" style="left:524.2px;top:141.6px;font-size:12.3px;color:#1a1a1a;transform:scaleX(0.909);transform-origin:0 0;">Projekte</div>
<div class="a" style="left:145px;top:162px;width:160px;height:828px;background:#fffefb;border:1px solid #cfcfcf;"></div>
<div class="a" style="left:156px;top:177px;width:1px;height:31px;background:repeating-linear-gradient(to bottom,#bbb 0 1px,transparent 1px 2px)"></div>
<div class="a" style="left:192px;top:261px;width:1px;height:199px;background:repeating-linear-gradient(to bottom,#bbb 0 1px,transparent 1px 2px)"></div>
<div class="a" style="left:174px;top:197px;width:1px;height:29px;background:repeating-linear-gradient(to bottom,#bbb 0 1px,transparent 1px 2px)"></div>
<div class="a" style="left:152px;top:169px;width:9px;height:9px;background:#fff;border:1px solid #999;"></div>
<div class="a" style="left:154px;top:173px;width:5px;height:1px;background:#333;"></div>
<div class="a" style="left:156px;top:171px;width:1px;height:5px;background:#333;"></div>
<div class="a" style="left:162px;top:173px;width:6px;height:1px;background:repeating-linear-gradient(to right,#bbb 0 1px,transparent 1px 2px)"></div>
<svg style="left:170px;top:166.2px;" width="13" height="16" viewBox="0 0 13 16"><path d="M0 0H10L11 1V16H0Z" fill="#f7d777"/><path d="M10 0V10L13 12V16H10Z" fill="#ecc55a"/><path d="M10 10L13 12V16H11Z" fill="#fbe7a3"/></svg>
<div class="t" style="left:190.5px;top:167.3px;font-size:12.3px;color:#1a1a1a;transform:scaleX(0.860);transform-origin:0 0;">Projekte</div>
<div class="a" style="left:152px;top:187px;width:9px;height:9px;background:#fff;border:1px solid #999;"></div>
<div class="a" style="left:154px;top:191px;width:5px;height:1px;background:#333;"></div>
<div class="a" style="left:156px;top:189px;width:1px;height:5px;background:#333;"></div>
<div class="a" style="left:162px;top:191px;width:6px;height:1px;background:repeating-linear-gradient(to right,#bbb 0 1px,transparent 1px 2px)"></div>
<svg style="left:170px;top:184.2px;" width="13" height="16" viewBox="0 0 13 16"><path d="M0 0H10L11 1V16H0Z" fill="#f7d777"/><path d="M10 0V10L13 12V16H10Z" fill="#ecc55a"/><path d="M10 10L13 12V16H11Z" fill="#fbe7a3"/></svg>
<div class="t" style="left:190.5px;top:185.3px;font-size:12.3px;color:#1a1a1a;transform:scaleX(0.860);transform-origin:0 0;">offene Projekte</div>
<div class="a" style="left:152px;top:205px;width:9px;height:9px;background:#fff;border:1px solid #999;"></div>
<div class="a" style="left:154px;top:209px;width:5px;height:1px;background:#333;"></div>
<div class="a" style="left:162px;top:209px;width:6px;height:1px;background:repeating-linear-gradient(to right,#bbb 0 1px,transparent 1px 2px)"></div>
<svg style="left:170px;top:202.2px;" width="13" height="16" viewBox="0 0 13 16"><path d="M0 0H10L11 1V16H0Z" fill="#f7d777"/><path d="M10 0V10L13 12V16H10Z" fill="#ecc55a"/><path d="M10 10L13 12V16H11Z" fill="#fbe7a3"/></svg>
<div class="t" style="left:190.5px;top:203.3px;font-size:12.3px;color:#1a1a1a;transform:scaleX(0.860);transform-origin:0 0;">geöffnete Dateien</div>
<div class="a" style="left:170px;top:223px;width:9px;height:9px;background:#fff;border:1px solid #999;"></div>
<div class="a" style="left:172px;top:227px;width:5px;height:1px;background:#333;"></div>
<div class="a" style="left:180px;top:227px;width:6px;height:1px;background:repeating-linear-gradient(to right,#bbb 0 1px,transparent 1px 2px)"></div>
<svg style="left:188px;top:220.2px;" width="13" height="16" viewBox="0 0 13 16"><path d="M0 0H10L11 1V16H0Z" fill="#f7d777"/><path d="M10 0V10L13 12V16H10Z" fill="#ecc55a"/><path d="M10 10L13 12V16H11Z" fill="#fbe7a3"/></svg>
<div class="t" style="left:208.5px;top:221.3px;font-size:12.3px;color:#1a1a1a;transform:scaleX(0.860);transform-origin:0 0;">DBD-BIM_ifc_Impor</div>
<div class="a" style="left:188px;top:241px;width:9px;height:9px;background:#fff;border:1px solid #999;"></div>
<div class="a" style="left:190px;top:245px;width:5px;height:1px;background:#333;"></div>
<div class="a" style="left:192px;top:243px;width:1px;height:5px;background:#333;"></div>
<div class="a" style="left:198px;top:245px;width:6px;height:1px;background:repeating-linear-gradient(to right,#bbb 0 1px,transparent 1px 2px)"></div>
<svg style="left:206px;top:238.2px;" width="13" height="16" viewBox="0 0 13 16"><path d="M0 0H10L11 1V16H0Z" fill="#f7d777"/><path d="M10 0V10L13 12V16H10Z" fill="#ecc55a"/><path d="M10 10L13 12V16H11Z" fill="#fbe7a3"/></svg>
<div class="t" style="left:226.5px;top:239.3px;font-size:12.3px;color:#1a1a1a;transform:scaleX(0.860);transform-origin:0 0;">Anschläge</div>
<div class="a" style="left:188px;top:259px;width:9px;height:9px;background:#fff;border:1px solid #999;"></div>
<div class="a" style="left:190px;top:263px;width:5px;height:1px;background:#333;"></div>
<div class="a" style="left:192px;top:261px;width:1px;height:5px;background:#333;"></div>
<div class="a" style="left:198px;top:263px;width:6px;height:1px;background:repeating-linear-gradient(to right,#bbb 0 1px,transparent 1px 2px)"></div>
<svg style="left:206px;top:256.2px;" width="13" height="16" viewBox="0 0 13 16"><path d="M0 0H10L11 1V16H0Z" fill="#f7d777"/><path d="M10 0V10L13 12V16H10Z" fill="#ecc55a"/><path d="M10 10L13 12V16H11Z" fill="#fbe7a3"/></svg>
<div class="t" style="left:226.5px;top:257.3px;font-size:12.3px;color:#1a1a1a;transform:scaleX(0.860);transform-origin:0 0;">Aussparungen</div>
<div class="a" style="left:188px;top:277px;width:9px;height:9px;background:#fff;border:1px solid #999;"></div>
<div class="a" style="left:190px;top:281px;width:5px;height:1px;background:#333;"></div>
<div class="a" style="left:192px;top:279px;width:1px;height:5px;background:#333;"></div>
<div class="a" style="left:198px;top:281px;width:6px;height:1px;background:repeating-linear-gradient(to right,#bbb 0 1px,transparent 1px 2px)"></div>
<svg style="left:206px;top:274.2px;" width="13" height="16" viewBox="0 0 13 16"><path d="M0 0H10L11 1V16H0Z" fill="#f7d777"/><path d="M10 0V10L13 12V16H10Z" fill="#ecc55a"/><path d="M10 10L13 12V16H11Z" fill="#fbe7a3"/></svg>
<div class="t" style="left:226.5px;top:275.3px;font-size:12.3px;color:#1a1a1a;transform:scaleX(0.860);transform-origin:0 0;">Decken</div>
<div class="a" style="left:188px;top:295px;width:9px;height:9px;background:#fff;border:1px solid #999;"></div>
<div class="a" style="left:190px;top:299px;width:5px;height:1px;background:#333;"></div>
<div class="a" style="left:192px;top:297px;width:1px;height:5px;background:#333;"></div>
<div class="a" style="left:198px;top:299px;width:6px;height:1px;background:repeating-linear-gradient(to right,#bbb 0 1px,transparent 1px 2px)"></div>
<svg style="left:206px;top:292.2px;" width="13" height="16" viewBox="0 0 13 16"><path d="M0 0H10L11 1V16H0Z" fill="#f7d777"/><path d="M10 0V10L13 12V16H10Z" fill="#ecc55a"/><path d="M10 10L13 12V16H11Z" fill="#fbe7a3"/></svg>
<div class="t" style="left:226.5px;top:293.3px;font-size:12.3px;color:#1a1a1a;transform:scaleX(0.860);transform-origin:0 0;">Fenster</div>
<div class="a" style="left:188px;top:313px;width:9px;height:9px;background:#fff;border:1px solid #999;"></div>
<div class="a" style="left:190px;top:317px;width:5px;height:1px;background:#333;"></div>
<div class="a" style="left:192px;top:315px;width:1px;height:5px;background:#333;"></div>
<div class="a" style="left:198px;top:317px;width:6px;height:1px;background:repeating-linear-gradient(to right,#bbb 0 1px,transparent 1px 2px)"></div>
<svg style="left:206px;top:310.2px;" width="13" height="16" viewBox="0 0 13 16"><path d="M0 0H10L11 1V16H0Z" fill="#f7d777"/><path d="M10 0V10L13 12V16H10Z" fill="#ecc55a"/><path d="M10 10L13 12V16H11Z" fill="#fbe7a3"/></svg>
<div class="t" style="left:226.5px;top:311.3px;font-size:12.3px;color:#1a1a1a;transform:scaleX(0.860);transform-origin:0 0;">Nischen</div>
<div class="a" style="left:188px;top:331px;width:9px;height:9px;background:#fff;border:1px solid #999;"></div>
<div class="a" style="left:190px;top:335px;width:5px;height:1px;background:#333;"></div>
<div class="a" style="left:192px;top:333px;width:1px;height:5px;background:#333;"></div>
<div class="a" style="left:198px;top:335px;width:6px;height:1px;background:repeating-linear-gradient(to right,#bbb 0 1px,transparent 1px 2px)"></div>
<svg style="left:206px;top:328.2px;" width="13" height="16" viewBox="0 0 13 16"><path d="M0 0H10L11 1V16H0Z" fill="#f7d777"/><path d="M10 0V10L13 12V16H10Z" fill="#ecc55a"/><path d="M10 10L13 12V16H11Z" fill="#fbe7a3"/></svg>
<div class="t" style="left:226.5px;top:329.3px;font-size:12.3px;color:#1a1a1a;transform:scaleX(0.860);transform-origin:0 0;">Räume</div>
<div class="a" style="left:188px;top:349px;width:9px;height:9px;background:#fff;border:1px solid #999;"></div>
<div class="a" style="left:190px;top:353px;width:5px;height:1px;background:#333;"></div>
<div class="a" style="left:192px;top:351px;width:1px;height:5px;background:#333;"></div>
<div class="a" style="left:198px;top:353px;width:6px;height:1px;background:repeating-linear-gradient(to right,#bbb 0 1px,transparent 1px 2px)"></div>
<svg style="left:206px;top:346.2px;" width="13" height="16" viewBox="0 0 13 16"><path d="M0 0H10L11 1V16H0Z" fill="#f7d777"/><path d="M10 0V10L13 12V16H10Z" fill="#ecc55a"/><path d="M10 10L13 12V16H11Z" fill="#fbe7a3"/></svg>
<div class="t" style="left:226.5px;top:347.3px;font-size:12.3px;color:#1a1a1a;transform:scaleX(0.860);transform-origin:0 0;">Stempel Layout</div>
<div class="a" style="left:188px;top:367px;width:9px;height:9px;background:#fff;border:1px solid #999;"></div>
<div class="a" style="left:190px;top:371px;width:5px;height:1px;background:#333;"></div>
<div class="a" style="left:192px;top:369px;width:1px;height:5px;background:#333;"></div>
<div class="a" style="left:198px;top:371px;width:6px;height:1px;background:repeating-linear-gradient(to right,#bbb 0 1px,transparent 1px 2px)"></div>
<svg style="left:206px;top:364.2px;" width="13" height="16" viewBox="0 0 13 16"><path d="M0 0H10L11 1V16H0Z" fill="#f7d777"/><path d="M10 0V10L13 12V16H10Z" fill="#ecc55a"/><path d="M10 10L13 12V16H11Z" fill="#fbe7a3"/></svg>
<div class="t" style="left:226.5px;top:365.3px;font-size:12.3px;color:#1a1a1a;transform:scaleX(0.860);transform-origin:0 0;">Stützen</div>
<div class="a" style="left:188px;top:385px;width:9px;height:9px;background:#fff;border:1px solid #999;"></div>
<div class="a" style="left:190px;top:389px;width:5px;height:1px;background:#333;"></div>
<div class="a" style="left:198px;top:389px;width:6px;height:1px;background:repeating-linear-gradient(to right,#bbb 0 1px,transparent 1px 2px)"></div>
<svg style="left:206px;top:382.2px;" width="13" height="16" viewBox="0 0 13 16"><path d="M0 0H10L11 1V16H0Z" fill="#f7d777"/><path d="M10 0V10L13 12V16H10Z" fill="#ecc55a"/><path d="M10 10L13 12V16H11Z" fill="#fbe7a3"/></svg>
<div class="t" style="left:226.5px;top:383.3px;font-size:12.3px;color:#1a1a1a;transform:scaleX(0.860);transform-origin:0 0;">Türen</div>
<div class="a" style="left:211px;top:384.7px;width:1px;height:23.0px;background:repeating-linear-gradient(to bottom,#bbb 0 1px,transparent 1px 2px)"></div>
<div class="a" style="left:211px;top:407px;width:11px;height:1px;background:repeating-linear-gradient(to right,#bbb 0 1px,transparent 1px 2px)"></div>
<svg style="left:222.5px;top:399.7px;" width="16" height="16" viewBox="0 0 16 16"><rect x="0.5" y="0.5" width="15" height="15" fill="#c8682a" stroke="#3a2a1a"/><path d="M6 3H10M8 3L7 13M5 13H9" stroke="#2a1a0a" stroke-width="1.2" fill="none"/></svg>
<div class="t" style="left:244.6px;top:401.3px;font-size:12.3px;color:#1a1a1a;transform:scaleX(0.860);transform-origin:0 0;">HolzMT_1flg</div>
<div class="a" style="left:188px;top:421px;width:9px;height:9px;background:#fff;border:1px solid #999;"></div>
<div class="a" style="left:190px;top:425px;width:5px;height:1px;background:#333;"></div>
<div class="a" style="left:198px;top:425px;width:6px;height:1px;background:repeating-linear-gradient(to right,#bbb 0 1px,transparent 1px 2px)"></div>
<svg style="left:206px;top:418.2px;" width="13" height="16" viewBox="0 0 13 16"><path d="M0 0H10L11 1V16H0Z" fill="#f7d777"/><path d="M10 0V10L13 12V16H10Z" fill="#ecc55a"/><path d="M10 10L13 12V16H11Z" fill="#fbe7a3"/></svg>
<div class="t" style="left:226.5px;top:419.3px;font-size:12.3px;color:#1a1a1a;transform:scaleX(0.860);transform-origin:0 0;">Wände</div>
<div class="a" style="left:211px;top:420.7px;width:1px;height:23.0px;background:repeating-linear-gradient(to bottom,#bbb 0 1px,transparent 1px 2px)"></div>
<div class="a" style="left:211px;top:443px;width:11px;height:1px;background:repeating-linear-gradient(to right,#bbb 0 1px,transparent 1px 2px)"></div>
<div class="a" style="left:241px;top:434.7px;width:61px;height:17px;background:#ececec;"></div>
<svg style="left:222.5px;top:435.7px;" width="16" height="16" viewBox="0 0 16 16"><rect x="0.5" y="0.5" width="15" height="15" fill="#c8682a" stroke="#3a2a1a"/><path d="M6 3H10M8 3L7 13M5 13H9" stroke="#2a1a0a" stroke-width="1.2" fill="none"/></svg>
<div class="t" style="left:244.6px;top:437.3px;font-size:12.3px;color:#1a1a1a;transform:scaleX(0.860);transform-origin:0 0;">AW T MW fr</div>
<div class="a" style="left:188px;top:457px;width:9px;height:9px;background:#fff;border:1px solid #999;"></div>
<div class="a" style="left:190px;top:461px;width:5px;height:1px;background:#333;"></div>
<div class="a" style="left:192px;top:459px;width:1px;height:5px;background:#333;"></div>
<div class="a" style="left:198px;top:461px;width:6px;height:1px;background:repeating-linear-gradient(to right,#bbb 0 1px,transparent 1px 2px)"></div>
<svg style="left:206px;top:454.2px;" width="13" height="16" viewBox="0 0 13 16"><path d="M0 0H10L11 1V16H0Z" fill="#f7d777"/><path d="M10 0V10L13 12V16H10Z" fill="#ecc55a"/><path d="M10 10L13 12V16H11Z" fill="#fbe7a3"/></svg>
<div class="t" style="left:226.5px;top:455.3px;font-size:12.3px;color:#1a1a1a;transform:scaleX(0.860);transform-origin:0 0;">Pläne</div>
<div class="a" style="left:303px;top:163px;width:2px;height:826px;background:#cfcfcf;"></div>
<div class="a" style="left:305px;top:163px;width:3px;height:826px;background:#f4f4f4;"></div>
<div class="a" style="left:146px;top:969px;width:158px;height:17px;background:#f0f0f0;"></div>
<div class="a" style="left:164px;top:971px;width:103px;height:13px;background:#cdcdcd;"></div>
<svg style="left:151px;top:973px;" width="6" height="9" viewBox="0 0 6 9"><path d="M5 0.5L1 4.5L5 8.5" stroke="#555" stroke-width="1.3" fill="none"/></svg>
<svg style="left:291px;top:973px;" width="6" height="9" viewBox="0 0 6 9"><path d="M1 0.5L5 4.5L1 8.5" stroke="#555" stroke-width="1.3" fill="none"/></svg>
<div class="a" style="left:308px;top:163px;width:543px;height:827px;background:#f0f0f0;"></div>
<div class="a" style="left:310px;top:165px;width:41px;height:18px;background:#ececec;border:1px solid #d6d6d6;"></div>
<div class="t" style="left:315.6px;top:167.6px;font-size:12.3px;color:#1a1a1a;transform:scaleX(0.884);transform-origin:0 0;">Wand</div>
<div class="a" style="left:351px;top:165px;width:111px;height:18px;background:#ececec;border:1px solid #d6d6d6;"></div>
<div class="t" style="left:357.7px;top:167.6px;font-size:12.3px;color:#1a1a1a;transform:scaleX(0.892);transform-origin:0 0;">Objekteigenschaften</div>
<div class="a" style="left:526px;top:165px;width:52px;height:18px;background:#ececec;border:1px solid #d6d6d6;"></div>
<div class="t" style="left:530.7px;top:167.6px;font-size:12.3px;color:#1a1a1a;transform:scaleX(0.823);transform-origin:0 0;">Variablen</div>
<div class="a" style="left:462px;top:162px;width:64px;height:22px;background:#fdfdfd;border:1px solid #d6d6d6;"></div>
<div class="a" style="left:463px;top:181px;width:62px;height:4px;background:#fdfdfd;"></div>
<div class="t" style="left:469.4px;top:166.1px;font-size:12.3px;color:#1a1a1a;transform:scaleX(0.870);transform-origin:0 0;">Positionen</div>
<div class="a" style="left:310px;top:183px;width:541px;height:807px;background:#f2f2f2;border:1px solid #d9d9d9;"></div>
<div class="a" style="left:312px;top:185px;width:396px;height:26px;background:#efefef;border:1px solid #d9d9d9;"></div>
<div class="a" style="left:314px;top:190px;width:1px;height:17px;background:#bbb;"></div>
<svg style="left:322px;top:191px;" width="17" height="16" viewBox="0 0 17 16"><rect x="0.5" y="2.5" width="15" height="5" fill="#fff" stroke="#aaa"/><rect x="5.5" y="7.5" width="7" height="7" fill="#fff" stroke="#aaa"/><path d="M9 9V13M7 11H11" stroke="#aaa"/></svg>
<svg style="left:345px;top:191px;" width="17" height="16" viewBox="0 0 17 16"><rect x="0.5" y="2.5" width="15" height="5" fill="#fff" stroke="#2a5e9e"/><rect x="5.5" y="7.5" width="7" height="7" fill="#fff" stroke="#2a5e9e"/><path d="M9 9V13M7 11H11" stroke="#2a5e9e"/></svg>
<svg style="left:369px;top:191px;" width="17" height="16" viewBox="0 0 17 16"><rect x="0.5" y="2.5" width="15" height="5" fill="#fff" stroke="#444"/><rect x="5.5" y="7.5" width="7" height="7" fill="#fff" stroke="#444"/><path d="M9 9V13M7 11H11" stroke="#444"/></svg>
<svg style="left:391px;top:191px;" width="17" height="16" viewBox="0 0 17 16"><rect x="0.5" y="2.5" width="15" height="5" fill="#fff" stroke="#aaa"/><rect x="5.5" y="7.5" width="7" height="7" fill="#fff" stroke="#aaa"/><path d="M9 9V13M7 11H11" stroke="#aaa"/></svg>
<svg style="left:369px;top:191px;" width="17" height="16" viewBox="0 0 17 16"><rect x="0.5" y="9.5" width="15" height="5" fill="#fff" stroke="#333"/><path d="M4 9L13 1" stroke="#e0a040" stroke-width="2.4"/><circle cx="13.5" cy="1.5" r="1.3" fill="#d44"/></svg>
<div class="a" style="left:415px;top:190px;width:1px;height:18px;background:#c8c8c8;"></div>
<svg style="left:421px;top:191px;" width="16" height="16" viewBox="0 0 16 16"><rect x="0.5" y="0.5" width="15" height="15" fill="#fff" stroke="#2a5e9e"/><path d="M3 3H13M4 10L8 6L12 10" stroke="#2a5e9e" stroke-width="1.6" fill="none"/></svg>
<svg style="left:444px;top:191px;" width="16" height="16" viewBox="0 0 16 16"><rect x="0.5" y="0.5" width="15" height="15" fill="#fff" stroke="#2a5e9e"/><path d="M4 10L8 6L12 10" stroke="#2a5e9e" stroke-width="1.6" fill="none"/></svg>
<svg style="left:468px;top:191px;" width="16" height="16" viewBox="0 0 16 16"><rect x="0.5" y="0.5" width="15" height="15" fill="#fff" stroke="#bbb"/><path d="M4 6L8 10L12 6" stroke="#bbb" stroke-width="1.6" fill="none"/></svg>
<svg style="left:491px;top:191px;" width="16" height="16" viewBox="0 0 16 16"><rect x="0.5" y="0.5" width="15" height="15" fill="#fff" stroke="#bbb"/><path d="M4 6L8 10L12 6M3 13H13" stroke="#bbb" stroke-width="1.6" fill="none"/></svg>
<div class="a" style="left:513px;top:190px;width:1px;height:18px;background:#c8c8c8;"></div>
<svg style="left:519px;top:191px;" width="16" height="16" viewBox="0 0 16 16"><path d="M2.5 0.5H11L14.5 4V15.5H2.5Z" fill="#fff" stroke="#1b8a8a"/><rect x="3" y="9" width="11" height="6" fill="#1b8a8a"/><path d="M0 4H7M5 2L7 4L5 6" stroke="#2a7bd8" fill="none"/></svg>
<svg style="left:543px;top:191px;" width="16" height="16" viewBox="0 0 16 16"><path d="M2.5 0.5H11L14.5 4V15.5H2.5Z" fill="#fff" stroke="#aaa"/><rect x="3" y="9" width="11" height="6" fill="#bbb"/><path d="M0 4H7M5 2L7 4L5 6" stroke="#2a7bd8" fill="none"/></svg>
<svg style="left:565px;top:191px;" width="16" height="16" viewBox="0 0 16 16"><path d="M2.5 0.5H11L14.5 4V15.5H2.5Z" fill="#fff" stroke="#aaa"/><rect x="3" y="9" width="11" height="6" fill="#ccc"/><path d="M0 4H7M5 2L7 4L5 6" stroke="#2a7bd8" fill="none"/></svg>
<svg style="left:590px;top:191px;" width="16" height="16" viewBox="0 0 16 16"><path d="M2.5 0.5H11L14.5 4V15.5H2.5Z" fill="#fff" stroke="#555"/><rect x="3" y="9" width="11" height="6" fill="#f3c64b"/><path d="M0 4H7M5 2L7 4L5 6" stroke="#2a7bd8" fill="none"/></svg>
<div class="t" style="left:608.3px;top:192.6px;font-size:12.3px;color:#1a1a1a;transform:scaleX(0.956);transform-origin:0 0;">Kostenelemente</div>
<svg style="left:696px;top:197px;" width="6" height="4" viewBox="0 0 6 4"><path d="M0 0H6L3 4Z" fill="#000"/></svg>
<div class="a" style="left:312px;top:211px;width:537px;height:779px;background:#f0f0f0;"></div>
<div class="a" style="left:312px;top:211px;width:537px;height:22px;background:#f7f7f7;"></div>
<div class="a" style="left:312px;top:232px;width:537px;height:1px;background:#a0a0a0;"></div>
<div class="a" style="left:351px;top:212px;width:1px;height:20px;background:#d0d0d0;"></div>
<div class="a" style="left:391px;top:212px;width:1px;height:20px;background:#d0d0d0;"></div>
<div class="a" style="left:591px;top:212px;width:1px;height:20px;background:#d0d0d0;"></div>
<div class="a" style="left:651px;top:212px;width:1px;height:20px;background:#d0d0d0;"></div>
<div class="a" style="left:703px;top:212px;width:1px;height:20px;background:#d0d0d0;"></div>
<div class="a" style="left:763px;top:212px;width:1px;height:20px;background:#d0d0d0;"></div>
<div class="a" style="left:843px;top:212px;width:1px;height:20px;background:#d0d0d0;"></div>
<div class="t" style="left:314.2px;top:216.6px;font-size:12.3px;color:#1a1a1a;transform:scaleX(0.924);transform-origin:0 0;">Struktu</div>
<div class="t" style="left:354.4px;top:216.6px;font-size:12.3px;color:#1a1a1a;transform:scaleX(0.925);transform-origin:0 0;">Nr</div>
<div class="t" style="left:394.2px;top:216.6px;font-size:12.3px;color:#1a1a1a;transform:scaleX(0.953);transform-origin:0 0;">Kurztext</div>
<div class="t" style="left:594.6px;top:216.6px;font-size:12.3px;color:#1a1a1a;transform:scaleX(0.824);transform-origin:0 0;">Menge</div>
<div class="t" style="left:654.3px;top:216.6px;font-size:12.3px;color:#1a1a1a;transform:scaleX(0.851);transform-origin:0 0;">Einheit</div>
<div class="t" style="left:706.1px;top:216.6px;font-size:12.3px;color:#1a1a1a;transform:scaleX(0.853);transform-origin:0 0;">EP</div>
<div class="t" style="left:766.2px;top:216.6px;font-size:12.3px;color:#1a1a1a;transform:scaleX(0.788);transform-origin:0 0;">GP</div>
<div class="t" style="left:845.0px;top:216.6px;font-size:12.3px;color:#1a1a1a;transform:scaleX(0.609);transform-origin:0 0;">A</div>
<div class="a" style="left:312px;top:233px;width:537px;height:21px;background:#fdfdfd;"></div>
<div class="a" style="left:351px;top:233px;width:1px;height:21px;background:#e4e4e4;"></div>
<div class="a" style="left:391px;top:233px;width:1px;height:21px;background:#e4e4e4;"></div>
<div class="a" style="left:317px;top:238px;width:9px;height:9px;background:#fff;border:1px solid #999;"></div>
<div class="a" style="left:319px;top:242px;width:5px;height:1px;background:#333;"></div>
<div class="a" style="left:322px;top:247px;width:1px;height:23px;background:#ccc;"></div>
<div class="a" style="left:322px;top:242px;width:29px;height:1px;background:#ccc;"></div>
<div class="t" style="left:355.0px;top:238.6px;font-size:12.3px;color:#000;font-weight:bold;transform:scaleX(0.901);transform-origin:0 0;">B</div>
<div class="t" style="left:394.8px;top:238.6px;font-size:12.3px;color:#000;font-weight:bold;transform:scaleX(0.975);transform-origin:0 0;">Außenwandkonstruktion Mauerwerk tragend</div>
<div class="a" style="left:312px;top:254px;width:537px;height:20px;background:#b9cdea;"></div>
<div class="a" style="left:351px;top:254px;width:1px;height:20px;background:#a9bdd9;"></div>
<div class="a" style="left:391px;top:254px;width:1px;height:20px;background:#a9bdd9;"></div>
<div class="a" style="left:591px;top:254px;width:1px;height:20px;background:#a9bdd9;"></div>
<div class="a" style="left:651px;top:254px;width:1px;height:20px;background:#a9bdd9;"></div>
<div class="a" style="left:703px;top:254px;width:1px;height:20px;background:#a9bdd9;"></div>
<div class="a" style="left:763px;top:254px;width:1px;height:20px;background:#a9bdd9;"></div>
<div class="t" style="left:355.0px;top:259.6px;font-size:12.3px;color:#1a1a1a;transform:scaleX(0.877);transform-origin:0 0;">1</div>
<div class="t" style="left:394.8px;top:259.6px;font-size:12.3px;color:#1a1a1a;transform:scaleX(0.867);transform-origin:0 0;">Außenwand HLzA</div>
<div class="t" style="left:654.3px;top:259.6px;font-size:12.3px;color:#1a1a1a;transform:scaleX(0.849);transform-origin:0 0;">m2</div>
<div class="t" style="left:728.0px;top:259.6px;font-size:12.3px;color:#1a1a1a;transform:scaleX(0.899);transform-origin:0 0;">113,33</div>
<div class="t" style="left:846.0px;top:259.6px;font-size:12.3px;color:#1a1a1a;transform:scaleX(0.390);transform-origin:0 0;">M</div>
<div class="a" style="left:312px;top:274px;width:537px;height:14px;background:#f0f0f0;"></div>
<div class="a" style="left:851px;top:110px;width:4px;height:880px;background:#dcecfa;"></div>
<div class="a" style="left:855px;top:110px;width:512px;height:878px;background:#fff;"></div>
<svg style="left:855px;top:110px;" width="512" height="878" viewBox="0 0 512 878"><path d="M10.5 0V878M37.8 0V878M65.1 0V878M92.4 0V878M119.7 0V878M147.0 0V878M174.2 0V878M201.5 0V878M228.8 0V878M256.1 0V878M283.4 0V878M310.7 0V878M338.0 0V878M365.3 0V878M392.6 0V878M419.8 0V878M447.1 0V878M474.4 0V878M501.7 0V878M0 23.9H512M0 51.2H512M0 78.5H512M0 105.8H512M0 133.1H512M0 160.4H512M0 187.7H512M0 215.0H512M0 242.3H512M0 269.6H512M0 296.9H512M0 324.2H512M0 351.5H512M0 378.8H512M0 406.1H512M0 433.4H512M0 460.7H512M0 488.0H512M0 515.3H512M0 542.6H512M0 569.9H512M0 597.2H512M0 624.5H512M0 651.8H512M0 679.1H512M0 706.4H512M0 733.7H512M0 761.0H512M0 788.3H512M0 815.6H512M0 842.9H512M0 870.2H512" stroke="#b4b4b4" stroke-width="1" fill="none"/><path d="M0.0 155.5L512.0 155.5" stroke="#111" stroke-width="1.6" fill="none" /><path d="M0.0 350.6L490.0 1.5" stroke="#555" stroke-width="1" fill="none" /><path d="M0.0 213.5L392.0 213.5" stroke="#bbb" stroke-width="0.8" fill="none" /><path d="M0.0 216.5L392.0 216.5" stroke="#bbb" stroke-width="0.8" fill="none" /><path d="M0.0 223.5L255.0 223.5" stroke="#aaa" stroke-width="0.8" fill="none" /><rect x="17.5" y="212.5" width="36.0" height="8.5" stroke="#e8a868" stroke-width="1.4" fill="none"/><path d="M20.0 215.5L51.0 215.5" stroke="#222" stroke-width="1.6" fill="none" /><path d="M20.0 219.0L51.0 219.0" stroke="#222" stroke-width="1.6" fill="none" /><rect x="85.0" y="212.7" width="36.5" height="10.7" stroke="#e8b888" stroke-width="1" fill="none"/><path d="M89.0 220.0L95.0 220.0" stroke="#111" stroke-width="1.4" fill="none" /><rect x="392.5" y="213.5" width="102.0" height="8.0" stroke="#000" stroke-width="1.3" fill="none"/><path d="M268.0 218.7L293.0 218.7" stroke="#000" stroke-width="2" fill="none" /><path d="M296.0 218.7L321.0 218.7" stroke="#000" stroke-width="2" fill="none" /><path d="M265.0 212.5L392.0 212.5" stroke="#777" stroke-width="1.5" fill="none" /><path d="M394.0 228.0V239.0H418.0V228.0" stroke="#000" stroke-width="2" fill="none"/><path d="M4.5 223.0L4.5 539.0" stroke="#000" stroke-width="1.6" fill="none" /><path d="M486.5 221.0L486.5 538.5" stroke="#000" stroke-width="1.2" fill="none" /><path d="M494.5 221.0L494.5 549.0" stroke="#000" stroke-width="1.5" fill="none" /><rect x="484.5" y="227.0" width="10.5" height="251.0" stroke="#000" stroke-width="1" fill="none"/><path d="M488.0 245.0L488.0 282.0" stroke="#000" stroke-width="1" fill="none" /><path d="M488.0 430.0L488.0 465.0" stroke="#000" stroke-width="1" fill="none" /><path d="M493.5 280V460" stroke="#000" stroke-width="2.2" stroke-dasharray="2 1.5" fill="none"/><path d="M255.0 214.0L255.0 549.0" stroke="#000" stroke-width="1.4" fill="none" /><path d="M259.0 257.0L259.0 282.0" stroke="#000" stroke-width="1" fill="none" /><path d="M360.0 217.0L360.0 539.0" stroke="#9a9a9a" stroke-width="1" fill="none" /><path d="M363.0 217.0L363.0 539.0" stroke="#ccc" stroke-width="1" fill="none" /><path d="M61.0 279.0L61.0 484.0" stroke="#9a9a9a" stroke-width="1" fill="none" /><path d="M67.0 279.0L67.0 484.0" stroke="#9a9a9a" stroke-width="1" fill="none" /><path d="M193.0 215.0L193.0 539.0" stroke="#9a9a9a" stroke-width="1" fill="none" /><path d="M197.0 215.0L197.0 539.0" stroke="#9a9a9a" stroke-width="1" fill="none" /><path d="M157.0 275.0L157.0 330.0" stroke="#000" stroke-width="1" fill="none" /><path d="M61.0 279.0L197.0 279.0" stroke="#9a9a9a" stroke-width="1" fill="none" /><path d="M106.0 282.0L193.0 282.0" stroke="#c8c8c8" stroke-width="1" fill="none" /><path d="M61.0 330.6L197.0 330.6" stroke="#9a9a9a" stroke-width="1" fill="none" /><path d="M195.0 218.0L195.0 270.0" stroke="#000" stroke-width="1.8" fill="none" /><path d="M259.5 257.0L259.5 282.0" stroke="#000" stroke-width="1" fill="none" /><path d="M259.5 402.0L259.5 406.0" stroke="#000" stroke-width="1" fill="none" /><path d="M259.5 461.0L259.5 464.0" stroke="#000" stroke-width="1" fill="none" /><rect x="62.5" y="449.0" width="3.5" height="24.4" stroke="#000" stroke-width="1" fill="none"/><rect x="191.5" y="449.0" width="3.5" height="24.4" stroke="#000" stroke-width="1" fill="none"/><path d="M58.5 223.0L58.5 279.0" stroke="#bbb" stroke-width="1" fill="none" /><path d="M68.0 380.8L193.0 380.8" stroke="#9a9a9a" stroke-width="1" fill="none" /><path d="M162.0 378.0L190.0 378.0" stroke="#333" stroke-width="1.3" fill="none" /><path d="M4.0 482.6L61.0 482.6" stroke="#9a9a9a" stroke-width="2" fill="none" /><path d="M68.0 482.6L107.0 482.6" stroke="#9a9a9a" stroke-width="1" fill="none" /><path d="M197.0 483.3L485.0 483.3" stroke="#9a9a9a" stroke-width="2.5" fill="none" /><path d="M210.0 483.3L235.0 483.3" stroke="#222" stroke-width="2" fill="none" /><path d="M251.0 483.3L277.0 483.3" stroke="#222" stroke-width="2" fill="none" /><path d="M425.0 483.3L447.0 483.3" stroke="#222" stroke-width="2" fill="none" /><path d="M283.0 476.0L322.0 476.0" stroke="#9a9a9a" stroke-width="2" fill="none" /><path d="M356.0 464.0L357.0 466.0" stroke="#000" stroke-width="1" fill="none" /><rect x="4.5" y="312.7" width="26.5" height="121.3" stroke="#e8c098" stroke-width="1" fill="none"/><path d="M5.0 316.0H31.0M5.0 324.0H31.0M5.0 332.0H31.0M5.0 340.0H31.0M5.0 348.0H31.0M5.0 356.0H31.0M5.0 364.0H31.0M5.0 372.0H31.0M5.0 380.0H31.0M5.0 388.0H31.0M5.0 396.0H31.0M5.0 404.0H31.0M5.0 412.0H31.0M5.0 420.0H31.0M5.0 428.0H31.0" stroke="#e8a868" stroke-width="1.2"/><path d="M33.0 318.0L33.0 434.0" stroke="#b0a8a0" stroke-width="3" fill="none" /><path d="M33.5 410.0L33.5 433.0" stroke="#000" stroke-width="1" fill="none" /><circle cx="114.2" cy="339.2" r="8.5" fill="#000"/><circle cx="144.2" cy="339.2" r="8.5" fill="#000"/><circle cx="114.2" cy="339.2" r="10" fill="none" stroke="#000" stroke-width="0.8"/><circle cx="144.2" cy="339.2" r="10" fill="none" stroke="#000" stroke-width="0.8"/><path d="M127.0 292.0h9c4 0 5 3 5 5c0 3-2 5-5 5h-9z" fill="#000"/><path d="M106.0 287.0L106.0 330.0" stroke="#000" stroke-width="1" fill="none" /><path d="M118.0 310.0L118.0 580.0" stroke="#000" stroke-width="4.4" fill="none" /><circle cx="118.0" cy="316.0" r="2" fill="#fff" stroke="#000"/><path d="M79.0 307.0L79.0 353.0" stroke="#9a9a9a" stroke-width="1" fill="none" /><rect x="158.5" y="274.0" width="5.0" height="23.0" stroke="#000" stroke-width="1" fill="none"/><path d="M0.0 538.7L255.0 538.7" stroke="#000" stroke-width="1.2" fill="none" /><path d="M0.0 549.3L255.0 549.3" stroke="#000" stroke-width="1.5" fill="none" /><path d="M7.0 538.7L7.0 549.3" stroke="#000" stroke-width="1" fill="none" /><path d="M62.3 538.7L62.3 549.3" stroke="#000" stroke-width="1" fill="none" /><path d="M85.5 538.7L85.5 549.3" stroke="#000" stroke-width="1" fill="none" /><path d="M121.8 538.7L121.8 549.3" stroke="#000" stroke-width="1" fill="none" /><path d="M121.8 538.7L161.4 538.7" stroke="#000" stroke-width="1.2" fill="none" /><path d="M161.4 538.7L161.4 549.3" stroke="#000" stroke-width="1.2" fill="none" /><path d="M161.4 541.0L255.0 541.0" stroke="#000" stroke-width="1" fill="none" /><path d="M161.4 546.0L191.0 546.0" stroke="#000" stroke-width="1" fill="none" /><path d="M191.0 546.0L191.0 549.3" stroke="#000" stroke-width="1" fill="none" /><path d="M89.0 542.0L118.0 542.0" stroke="#000" stroke-width="2" fill="none" /><path d="M18.0 544.0L51.0 544.0" stroke="#a05020" stroke-width="2" fill="none" /><path d="M255.0 538.5L486.5 538.5" stroke="#9a9a9a" stroke-width="1" fill="none" /><path d="M0.0M255 659H494" stroke="#333" stroke-width="1.5" stroke-dasharray="6 1"/><rect x="265.0" y="538.5" width="58.0" height="11.5" stroke="#e8c0a0" stroke-width="1" fill="none"/><path d="M268.0 543.0L293.0 543.0" stroke="#000" stroke-width="1.8" fill="none" /><path d="M295.0 543.0L321.0 543.0" stroke="#000" stroke-width="1.8" fill="none" /><rect x="377.0" y="538.5" width="56.0" height="11.5" stroke="#e8c0a0" stroke-width="1" fill="none"/><path d="M407.0 543.0L431.0 543.0" stroke="#000" stroke-width="1.8" fill="none" /><rect x="135.0" y="550.5" width="36.0" height="4.5" stroke="#f0b400" stroke-width="1" fill="none"/><rect x="149.0" y="550.5" width="18" height="4.5" fill="#f0b400"/><rect x="174.0" y="550.5" width="36.0" height="4.5" stroke="#f0b400" stroke-width="1" fill="none"/><rect x="188.0" y="550.5" width="18" height="4.5" fill="#f0b400"/><rect x="213.0" y="550.5" width="36.0" height="4.5" stroke="#f0b400" stroke-width="1" fill="none"/><rect x="227.0" y="550.5" width="18" height="4.5" fill="#f0b400"/><path d="M85.5 549.3L85.5 614.5" stroke="#000" stroke-width="1.3" fill="none" /><path d="M89.4 551.0L89.4 610.5" stroke="#000" stroke-width="1.3" fill="none" /><path d="M85.5 614.3L480.0 614.3" stroke="#000" stroke-width="1.3" fill="none" /><path d="M481.0 614.5C497.0 612.0 507.0 606.0 512.0 597.0" stroke="#000" stroke-width="1.2" fill="none"/><path d="M480.0 612.0L490.0 610.0" stroke="#000" stroke-width="1" fill="none" /><defs><pattern id="hat" width="3" height="3" patternUnits="userSpaceOnUse"><rect width="3" height="3" fill="#fff"/><rect width="2" height="2" fill="#a0a0a0"/></pattern></defs><ellipse cx="-2.0" cy="582.0" rx="22" ry="33" fill="url(#hat)"/><path d="M118.6 584.2L312.2 764.0" stroke="#000" stroke-width="2.4" fill="none" /><path d="M118.6 584.2L312.2 764.0" stroke="#fff" stroke-width="0.6" fill="none" stroke-dasharray="20 6"/><circle cx="322.8" cy="773.5" r="13.3" fill="#fff" stroke="#aaa" stroke-width="1"/><path d="M0.0 685.0L512.0 685.0" stroke="#111" stroke-width="1.1" fill="none" /><path d="M0.0 689.2L512.0 689.2" stroke="#111" stroke-width="1.1" fill="none" /><path d="M0.0 692.5L512.0 692.5" stroke="#111" stroke-width="1.1" fill="none" /><path d="M0.0 696.0L512.0 696.0" stroke="#111" stroke-width="1.1" fill="none" /><path d="M0.0 699.3L512.0 699.3" stroke="#111" stroke-width="1.1" fill="none" /><path d="M12.7 834.0L12.7 858.0" stroke="#1a8a1a" stroke-width="2" fill="none" /><path d="M12.7 858.0L38.0 858.0" stroke="#d02020" stroke-width="2" fill="none" /><path d="M0.0 877.5L512.0 877.5" stroke="#000" stroke-width="2" fill="none" /></svg>
<div class="a" style="left:309px;top:288px;width:542px;height:700px;background:#fff;border:1px solid #6f6f6f;box-shadow:-2px 2px 14px rgba(0,0,0,0.22)"></div>
<svg style="left:316px;top:295px;" width="12" height="16" viewBox="0 0 12 16"><path d="M0 1 L8 0 L11 2 V14 L3 16 L0 14Z" fill="#f07c1a"/><path d="M8 0 L11 2 V14 L8 15Z" fill="#222"/><path d="M2.5 4 H6 V7 H4.5 V9" stroke="#1a1a1a" stroke-width="1.4" fill="none"/></svg>
<div class="t" style="left:339.0px;top:297.6px;font-size:12.3px;color:#1a1a1a;transform:scaleX(0.907);transform-origin:0 0;">ST 3D-Viewer</div>
<div class="a" style="left:730px;top:303px;width:11px;height:1px;background:#111;"></div>
<div class="a" style="left:776px;top:298px;width:10px;height:10px;border:1px solid #111;"></div>
<svg style="left:822px;top:298px;" width="11" height="11" viewBox="0 0 11 11"><path d="M0.5 0.5L10.5 10.5M10.5 0.5L0.5 10.5" stroke="#111" stroke-width="1.1"/></svg>
<svg style="left:310px;top:319px;" width="540" height="668" viewBox="0 0 540 668"><rect x="0.0" y="0.0" width="540.0" height="668.0" fill="#819497" /><polygon points="0.0,337.0 210.0,314.5 210.0,322.5 0.0,345.3" fill="#9fb4b8" /><polygon points="370.0,320.0 541.0,330.7 541.0,346.9 370.0,336.0" fill="#a4b8bc" /><polygon points="0.0,345.3 210.0,322.5 370.0,336.0 541.0,346.9 541.0,451.0 0.0,368.7" fill="#5f7b5e" /><polygon points="0.0,368.7 541.0,450.7 541.0,465.4 0.0,376.3" fill="#c9c9c9" /><polygon points="0.0,376.3 541.0,465.4 541.0,512.6 0.0,402.6" fill="#383838" /><polygon points="0.0,400.5 541.0,507.0 541.0,515.0 0.0,404.7" fill="#0c0c0c" /><polygon points="0.0,404.7 541.0,515.0 541.0,546.6 0.0,422.4" fill="#5a7858" /><defs><linearGradient id="pl" x1="0" y1="0" x2="0" y2="1"><stop offset="0" stop-color="#93aaae"/><stop offset="1" stop-color="#82979a"/></linearGradient></defs><polygon points="0.0,422.4 541.0,546.6 541.0,668.0 0.0,668.0" fill="url(#pl)" /><defs><clipPath id="gclip"><polygon points="0.0,422.4 541.0,546.6 541.0,668.0 0.0,668.0"/></clipPath><clipPath id="gclip2"><polygon points="0.0,376.3 541.0,465.4 541.0,546.6 0.0,422.4"/></clipPath></defs><path d="M53.4 281.2L-556.3 487.6M58.7 281.6L-552.7 490.1M64.1 282.0L-549.0 492.7M69.5 282.4L-545.3 495.4M75.0 282.9L-541.5 498.0M80.5 283.3L-537.7 500.8M86.1 283.8L-533.8 503.5M91.8 284.2L-529.8 506.4M97.5 284.7L-525.7 509.3M103.3 285.1L-521.6 512.2M109.1 285.6L-517.3 515.2M115.0 286.0L-513.0 518.3M121.0 286.5L-508.6 521.4M127.0 287.0L-504.2 524.6M133.1 287.5L-499.6 527.8M139.3 288.0L-494.9 531.1M145.5 288.5L-490.2 534.5M151.9 289.0L-485.3 537.9M158.2 289.5L-480.4 541.5M164.7 290.0L-475.3 545.0M171.2 290.5L-470.1 548.7M177.9 291.0L-464.9 552.5M184.6 291.6L-459.5 556.3M191.3 292.1L-454.0 560.2M198.2 292.6L-448.3 564.2M205.1 293.2L-442.6 568.3M212.1 293.7L-436.7 572.5M219.2 294.3L-430.6 576.8M226.4 294.9L-424.5 581.1M233.7 295.4L-418.1 585.6M241.1 296.0L-411.7 590.2M248.5 296.6L-405.0 594.9M256.1 297.2L-398.3 599.7M263.7 297.8L-391.3 604.7M271.5 298.4L-384.2 609.7M279.3 299.0L-376.9 614.9M287.3 299.7L-369.4 620.3M295.3 300.3L-361.7 625.7M303.5 301.0L-353.8 631.3M311.7 301.6L-345.7 637.1M320.1 302.3L-337.3 643.0M328.6 302.9L-328.8 649.1M337.1 303.6L-320.0 655.3M345.9 304.3L-310.9 661.7M354.7 305.0L-301.6 668.3M363.6 305.7L-292.1 675.1M372.7 306.4L-282.2 682.1M381.9 307.2L-272.1 689.3M391.2 307.9L-261.6 696.7M400.6 308.6L-250.8 704.4M410.2 309.4L-239.7 712.3M419.9 310.2L-228.2 720.4M429.8 311.0L-216.4 728.8M439.8 311.7L-204.2 737.5M449.9 312.5L-191.5 746.5M460.2 313.4L-178.4 755.8M470.7 314.2L-164.9 765.4M481.3 315.0L-150.9 775.3M492.0 315.9L-136.4 785.6M502.9 316.7L-121.4 796.3M514.0 317.6L-105.8 807.4M525.3 318.5L-89.6 818.9M536.7 319.4L-72.8 830.8M548.3 320.3L-55.3 843.2M560.1 321.3L-37.1 856.1M572.0 322.2L-18.2 869.5M584.2 323.2L1.5 883.5M596.6 324.1L22.1 898.1M609.1 325.1L43.5 913.3M621.9 326.1L65.9 929.2M634.8 327.2L89.4 945.9M648.0 328.2L113.9 963.3M661.4 329.3L139.6 981.5M675.0 330.4L166.6 1000.7M688.9 331.4L194.9 1020.8M703.0 332.6L224.7 1041.9M717.3 333.7L256.1 1064.2M731.9 334.9L289.1 1087.7M746.7 336.0L324.0 1112.5M761.8 337.2L361.0 1138.7M777.2 338.4L400.1 1166.4M792.8 339.7L441.6 1195.9M808.8 340.9L485.7 1227.2M825.0 342.2L532.7 1260.5M841.5 343.5L582.8 1296.1M858.4 344.9L636.4 1334.2M875.5 346.2L693.9 1375.0M893.0 347.6L755.7 1418.8M910.8 349.0L822.2 1466.1M929.0 350.4L894.2 1517.1M947.5 351.9L972.1 1572.5M966.4 353.4L1057.0 1632.7M985.6 354.9L1149.6 1698.5M1005.3 356.5L1251.2 1770.6M53.4 281.2L985.6 354.9M47.9 283.0L986.2 359.4M42.3 284.9L986.7 364.0M36.7 286.8L987.3 368.7M31.0 288.8L987.9 373.5M25.2 290.7L988.5 378.5M19.3 292.7L989.1 383.6M13.4 294.7L989.8 388.8M7.4 296.8L990.4 394.1M1.3 298.8L991.1 399.6M-4.9 300.9L991.8 405.2M-11.2 303.0L992.5 411.0M-17.5 305.2L993.2 416.9M-23.9 307.4L993.9 423.0M-30.5 309.6L994.7 429.3M-37.1 311.8L995.5 435.8M-43.8 314.1L996.3 442.4M-50.5 316.4L997.2 449.3M-57.4 318.7L998.0 456.3M-64.4 321.1L998.9 463.6M-71.5 323.5L999.8 471.1M-78.6 325.9L1000.8 478.8M-85.9 328.4L1001.7 486.8M-93.3 330.9L1002.7 495.1M-100.8 333.4L1003.8 503.6M-108.4 336.0L1004.9 512.4M-116.1 338.6L1006.0 521.5M-123.9 341.2L1007.1 530.9M-131.9 343.9L1008.3 540.7M-139.9 346.6L1009.5 550.8M-148.1 349.4L1010.8 561.3M-156.4 352.2L1012.1 572.1M-164.9 355.1L1013.5 583.4M-173.4 358.0L1015.0 595.1M-182.1 360.9L1016.4 607.3M-191.0 363.9L1018.0 620.0M-199.9 367.0L1019.6 633.2M-209.1 370.0L1021.3 647.0M-218.3 373.2L1023.0 661.4M-227.7 376.4L1024.9 676.4M-237.3 379.6L1026.8 692.0M-247.1 382.9L1028.8 708.4M-256.9 386.3L1030.9 725.6M-267.0 389.7L1033.1 743.6M-277.2 393.1L1035.4 762.5M-287.6 396.6L1037.8 782.3M-298.2 400.2L1040.3 803.2M-309.0 403.9L1043.0 825.2M-320.0 407.6L1045.9 848.4M-331.1 411.4L1048.9 873.0M-342.5 415.2L1052.0 898.9M-354.0 419.1L1055.4 926.4M-365.8 423.1L1059.0 955.6M-377.8 427.2L1062.7 986.7M-390.0 431.3L1066.8 1019.8M-402.4 435.5L1071.1 1055.2M-415.1 439.8L1075.7 1093.1M-428.0 444.2L1080.7 1133.7M-441.1 448.6L1086.0 1177.4M-454.5 453.2L1091.8 1224.6M-468.2 457.8L1098.0 1275.6M-482.2 462.5L1104.8 1331.0M-496.4 467.3L1112.1 1391.3M-510.9 472.2L1120.2 1457.4M-525.7 477.3L1129.0 1529.8M-540.8 482.4L1138.8 1609.8" stroke="#c8dcdc" stroke-width="1.2" opacity="0.6" clip-path="url(#gclip)"/><path d="M53.4 281.2L-556.3 487.6M58.7 281.6L-552.7 490.1M64.1 282.0L-549.0 492.7M69.5 282.4L-545.3 495.4M75.0 282.9L-541.5 498.0M80.5 283.3L-537.7 500.8M86.1 283.8L-533.8 503.5M91.8 284.2L-529.8 506.4M97.5 284.7L-525.7 509.3M103.3 285.1L-521.6 512.2M109.1 285.6L-517.3 515.2M115.0 286.0L-513.0 518.3M121.0 286.5L-508.6 521.4M127.0 287.0L-504.2 524.6M133.1 287.5L-499.6 527.8M139.3 288.0L-494.9 531.1M145.5 288.5L-490.2 534.5M151.9 289.0L-485.3 537.9M158.2 289.5L-480.4 541.5M164.7 290.0L-475.3 545.0M171.2 290.5L-470.1 548.7M177.9 291.0L-464.9 552.5M184.6 291.6L-459.5 556.3M191.3 292.1L-454.0 560.2M198.2 292.6L-448.3 564.2M205.1 293.2L-442.6 568.3M212.1 293.7L-436.7 572.5M219.2 294.3L-430.6 576.8M226.4 294.9L-424.5 581.1M233.7 295.4L-418.1 585.6M241.1 296.0L-411.7 590.2M248.5 296.6L-405.0 594.9M256.1 297.2L-398.3 599.7M263.7 297.8L-391.3 604.7M271.5 298.4L-384.2 609.7M279.3 299.0L-376.9 614.9M287.3 299.7L-369.4 620.3M295.3 300.3L-361.7 625.7M303.5 301.0L-353.8 631.3M311.7 301.6L-345.7 637.1M320.1 302.3L-337.3 643.0M328.6 302.9L-328.8 649.1M337.1 303.6L-320.0 655.3M345.9 304.3L-310.9 661.7M354.7 305.0L-301.6 668.3M363.6 305.7L-292.1 675.1M372.7 306.4L-282.2 682.1M381.9 307.2L-272.1 689.3M391.2 307.9L-261.6 696.7M400.6 308.6L-250.8 704.4M410.2 309.4L-239.7 712.3M419.9 310.2L-228.2 720.4M429.8 311.0L-216.4 728.8M439.8 311.7L-204.2 737.5M449.9 312.5L-191.5 746.5M460.2 313.4L-178.4 755.8M470.7 314.2L-164.9 765.4M481.3 315.0L-150.9 775.3M492.0 315.9L-136.4 785.6M502.9 316.7L-121.4 796.3M514.0 317.6L-105.8 807.4M525.3 318.5L-89.6 818.9M536.7 319.4L-72.8 830.8M548.3 320.3L-55.3 843.2M560.1 321.3L-37.1 856.1M572.0 322.2L-18.2 869.5M584.2 323.2L1.5 883.5M596.6 324.1L22.1 898.1M609.1 325.1L43.5 913.3M621.9 326.1L65.9 929.2M634.8 327.2L89.4 945.9M648.0 328.2L113.9 963.3M661.4 329.3L139.6 981.5M675.0 330.4L166.6 1000.7M688.9 331.4L194.9 1020.8M703.0 332.6L224.7 1041.9M717.3 333.7L256.1 1064.2M731.9 334.9L289.1 1087.7M746.7 336.0L324.0 1112.5M761.8 337.2L361.0 1138.7M777.2 338.4L400.1 1166.4M792.8 339.7L441.6 1195.9M808.8 340.9L485.7 1227.2M825.0 342.2L532.7 1260.5M841.5 343.5L582.8 1296.1M858.4 344.9L636.4 1334.2M875.5 346.2L693.9 1375.0M893.0 347.6L755.7 1418.8M910.8 349.0L822.2 1466.1M929.0 350.4L894.2 1517.1M947.5 351.9L972.1 1572.5M966.4 353.4L1057.0 1632.7M985.6 354.9L1149.6 1698.5M1005.3 356.5L1251.2 1770.6M53.4 281.2L985.6 354.9M47.9 283.0L986.2 359.4M42.3 284.9L986.7 364.0M36.7 286.8L987.3 368.7M31.0 288.8L987.9 373.5M25.2 290.7L988.5 378.5M19.3 292.7L989.1 383.6M13.4 294.7L989.8 388.8M7.4 296.8L990.4 394.1M1.3 298.8L991.1 399.6M-4.9 300.9L991.8 405.2M-11.2 303.0L992.5 411.0M-17.5 305.2L993.2 416.9M-23.9 307.4L993.9 423.0M-30.5 309.6L994.7 429.3M-37.1 311.8L995.5 435.8M-43.8 314.1L996.3 442.4M-50.5 316.4L997.2 449.3M-57.4 318.7L998.0 456.3M-64.4 321.1L998.9 463.6M-71.5 323.5L999.8 471.1M-78.6 325.9L1000.8 478.8M-85.9 328.4L1001.7 486.8M-93.3 330.9L1002.7 495.1M-100.8 333.4L1003.8 503.6M-108.4 336.0L1004.9 512.4M-116.1 338.6L1006.0 521.5M-123.9 341.2L1007.1 530.9M-131.9 343.9L1008.3 540.7M-139.9 346.6L1009.5 550.8M-148.1 349.4L1010.8 561.3M-156.4 352.2L1012.1 572.1M-164.9 355.1L1013.5 583.4M-173.4 358.0L1015.0 595.1M-182.1 360.9L1016.4 607.3M-191.0 363.9L1018.0 620.0M-199.9 367.0L1019.6 633.2M-209.1 370.0L1021.3 647.0M-218.3 373.2L1023.0 661.4M-227.7 376.4L1024.9 676.4M-237.3 379.6L1026.8 692.0M-247.1 382.9L1028.8 708.4M-256.9 386.3L1030.9 725.6M-267.0 389.7L1033.1 743.6M-277.2 393.1L1035.4 762.5M-287.6 396.6L1037.8 782.3M-298.2 400.2L1040.3 803.2M-309.0 403.9L1043.0 825.2M-320.0 407.6L1045.9 848.4M-331.1 411.4L1048.9 873.0M-342.5 415.2L1052.0 898.9M-354.0 419.1L1055.4 926.4M-365.8 423.1L1059.0 955.6M-377.8 427.2L1062.7 986.7M-390.0 431.3L1066.8 1019.8M-402.4 435.5L1071.1 1055.2M-415.1 439.8L1075.7 1093.1M-428.0 444.2L1080.7 1133.7M-441.1 448.6L1086.0 1177.4M-454.5 453.2L1091.8 1224.6M-468.2 457.8L1098.0 1275.6M-482.2 462.5L1104.8 1331.0M-496.4 467.3L1112.1 1391.3M-510.9 472.2L1120.2 1457.4M-525.7 477.3L1129.0 1529.8M-540.8 482.4L1138.8 1609.8" stroke="#a8c0a0" stroke-width="0.9" opacity="0.35" clip-path="url(#gclip2)"/><defs><clipPath id="lawnb"><polygon points="0.0,345.3 210.0,322.5 370.0,336.0 541.0,346.9 541.0,451.0 0.0,368.7"/></clipPath></defs><path d="M-260.0 321.0L-300.0 461.0M-253.5 321.0L-293.5 461.0M-247.0 321.0L-287.0 461.0M-240.5 321.0L-280.5 461.0M-234.0 321.0L-274.0 461.0M-227.5 321.0L-267.5 461.0M-221.0 321.0L-261.0 461.0M-214.5 321.0L-254.5 461.0M-208.0 321.0L-248.0 461.0M-201.5 321.0L-241.5 461.0M-195.0 321.0L-235.0 461.0M-188.5 321.0L-228.5 461.0M-182.0 321.0L-222.0 461.0M-175.5 321.0L-215.5 461.0M-169.0 321.0L-209.0 461.0M-162.5 321.0L-202.5 461.0M-156.0 321.0L-196.0 461.0M-149.5 321.0L-189.5 461.0M-143.0 321.0L-183.0 461.0M-136.5 321.0L-176.5 461.0M-130.0 321.0L-170.0 461.0M-123.5 321.0L-163.5 461.0M-117.0 321.0L-157.0 461.0M-110.5 321.0L-150.5 461.0M-104.0 321.0L-144.0 461.0M-97.5 321.0L-137.5 461.0M-91.0 321.0L-131.0 461.0M-84.5 321.0L-124.5 461.0M-78.0 321.0L-118.0 461.0M-71.5 321.0L-111.5 461.0M-65.0 321.0L-105.0 461.0M-58.5 321.0L-98.5 461.0M-52.0 321.0L-92.0 461.0M-45.5 321.0L-85.5 461.0M-39.0 321.0L-79.0 461.0M-32.5 321.0L-72.5 461.0M-26.0 321.0L-66.0 461.0M-19.5 321.0L-59.5 461.0M-13.0 321.0L-53.0 461.0M-6.5 321.0L-46.5 461.0M0.0 321.0L-40.0 461.0M6.5 321.0L-33.5 461.0M13.0 321.0L-27.0 461.0M19.5 321.0L-20.5 461.0M26.0 321.0L-14.0 461.0M32.5 321.0L-7.5 461.0M39.0 321.0L-1.0 461.0M45.5 321.0L5.5 461.0M52.0 321.0L12.0 461.0M58.5 321.0L18.5 461.0M65.0 321.0L25.0 461.0M71.5 321.0L31.5 461.0M78.0 321.0L38.0 461.0M84.5 321.0L44.5 461.0M91.0 321.0L51.0 461.0M97.5 321.0L57.5 461.0M104.0 321.0L64.0 461.0M110.5 321.0L70.5 461.0M117.0 321.0L77.0 461.0M123.5 321.0L83.5 461.0M130.0 321.0L90.0 461.0M136.5 321.0L96.5 461.0M143.0 321.0L103.0 461.0M149.5 321.0L109.5 461.0M156.0 321.0L116.0 461.0M162.5 321.0L122.5 461.0M169.0 321.0L129.0 461.0M175.5 321.0L135.5 461.0M182.0 321.0L142.0 461.0M188.5 321.0L148.5 461.0M195.0 321.0L155.0 461.0M201.5 321.0L161.5 461.0M208.0 321.0L168.0 461.0M214.5 321.0L174.5 461.0M221.0 321.0L181.0 461.0M227.5 321.0L187.5 461.0M234.0 321.0L194.0 461.0M240.5 321.0L200.5 461.0M247.0 321.0L207.0 461.0M253.5 321.0L213.5 461.0M260.0 321.0L220.0 461.0M266.5 321.0L226.5 461.0M273.0 321.0L233.0 461.0M279.5 321.0L239.5 461.0M286.0 321.0L246.0 461.0M292.5 321.0L252.5 461.0M299.0 321.0L259.0 461.0M305.5 321.0L265.5 461.0M312.0 321.0L272.0 461.0M318.5 321.0L278.5 461.0M325.0 321.0L285.0 461.0M331.5 321.0L291.5 461.0M338.0 321.0L298.0 461.0M344.5 321.0L304.5 461.0M351.0 321.0L311.0 461.0M357.5 321.0L317.5 461.0M364.0 321.0L324.0 461.0M370.5 321.0L330.5 461.0M377.0 321.0L337.0 461.0M383.5 321.0L343.5 461.0M390.0 321.0L350.0 461.0M396.5 321.0L356.5 461.0M403.0 321.0L363.0 461.0M409.5 321.0L369.5 461.0M416.0 321.0L376.0 461.0M422.5 321.0L382.5 461.0M429.0 321.0L389.0 461.0M435.5 321.0L395.5 461.0M442.0 321.0L402.0 461.0M448.5 321.0L408.5 461.0M455.0 321.0L415.0 461.0M461.5 321.0L421.5 461.0M468.0 321.0L428.0 461.0M474.5 321.0L434.5 461.0M481.0 321.0L441.0 461.0M487.5 321.0L447.5 461.0M494.0 321.0L454.0 461.0M500.5 321.0L460.5 461.0M507.0 321.0L467.0 461.0M513.5 321.0L473.5 461.0M0.0 336.0L540.0 368.5M0.0 339.4L540.0 371.9M0.0 342.8L540.0 375.3M0.0 346.2L540.0 378.7M0.0 349.6L540.0 382.1M0.0 353.0L540.0 385.5M0.0 356.4L540.0 388.9M0.0 359.8L540.0 392.3M0.0 363.2L540.0 395.7M0.0 366.6L540.0 399.1M0.0 370.0L540.0 402.5M0.0 373.4L540.0 405.9M0.0 376.8L540.0 409.3M0.0 380.2L540.0 412.7M0.0 383.6L540.0 416.1M0.0 387.0L540.0 419.5M0.0 390.4L540.0 422.9M0.0 393.8L540.0 426.3M0.0 397.2L540.0 429.7M0.0 400.6L540.0 433.1M0.0 404.0L540.0 436.5M0.0 407.4L540.0 439.9M0.0 410.8L540.0 443.3M0.0 414.2L540.0 446.7M0.0 417.6L540.0 450.1M0.0 421.0L540.0 453.5M0.0 424.4L540.0 456.9M0.0 427.8L540.0 460.3M0.0 431.2L540.0 463.7M0.0 434.6L540.0 467.1M0.0 438.0L540.0 470.5M0.0 441.4L540.0 473.9M0.0 444.8L540.0 477.3M0.0 448.2L540.0 480.7M0.0 451.6L540.0 484.1M0.0 455.0L540.0 487.5M0.0 458.4L540.0 490.9M0.0 461.8L540.0 494.3M0.0 465.2L540.0 497.7M0.0 468.6L540.0 501.1M0.0 472.0L540.0 504.5M0.0 475.4L540.0 507.9M0.0 478.8L540.0 511.3M0.0 482.2L540.0 514.7M0.0 485.6L540.0 518.1" stroke="#9cb496" stroke-width="0.9" opacity="0.45" clip-path="url(#lawnb)"/><defs><clipPath id="bandc"><polygon points="0.0,337.0 210.0,314.5 210.0,322.5 0.0,345.3"/><polygon points="370.0,320.0 541.0,330.7 541.0,346.9 370.0,336.0"/></clipPath></defs><path d="M0 331.0L540.0 326.0M0 333.5L540.0 328.5M0 336.0L540.0 331.0M0 338.5L540.0 333.5M0 341.0L540.0 336.0M0 343.5L540.0 338.5M0 346.0L540.0 341.0M0 348.5L540.0 343.5M0 351.0L540.0 346.0M0 353.5L540.0 348.5M0 356.0L540.0 351.0M0 358.5L540.0 353.5M0.0 311.0L-8.0 351.0M6.0 311.0L-2.0 351.0M12.0 311.0L4.0 351.0M18.0 311.0L10.0 351.0M24.0 311.0L16.0 351.0M30.0 311.0L22.0 351.0M36.0 311.0L28.0 351.0M42.0 311.0L34.0 351.0M48.0 311.0L40.0 351.0M54.0 311.0L46.0 351.0M60.0 311.0L52.0 351.0M66.0 311.0L58.0 351.0M72.0 311.0L64.0 351.0M78.0 311.0L70.0 351.0M84.0 311.0L76.0 351.0M90.0 311.0L82.0 351.0M96.0 311.0L88.0 351.0M102.0 311.0L94.0 351.0M108.0 311.0L100.0 351.0M114.0 311.0L106.0 351.0M120.0 311.0L112.0 351.0M126.0 311.0L118.0 351.0M132.0 311.0L124.0 351.0M138.0 311.0L130.0 351.0M144.0 311.0L136.0 351.0M150.0 311.0L142.0 351.0M156.0 311.0L148.0 351.0M162.0 311.0L154.0 351.0M168.0 311.0L160.0 351.0M174.0 311.0L166.0 351.0M180.0 311.0L172.0 351.0M186.0 311.0L178.0 351.0M192.0 311.0L184.0 351.0M198.0 311.0L190.0 351.0M204.0 311.0L196.0 351.0M210.0 311.0L202.0 351.0M216.0 311.0L208.0 351.0M222.0 311.0L214.0 351.0M228.0 311.0L220.0 351.0M234.0 311.0L226.0 351.0M240.0 311.0L232.0 351.0M246.0 311.0L238.0 351.0M252.0 311.0L244.0 351.0M258.0 311.0L250.0 351.0M264.0 311.0L256.0 351.0M270.0 311.0L262.0 351.0M276.0 311.0L268.0 351.0M282.0 311.0L274.0 351.0M288.0 311.0L280.0 351.0M294.0 311.0L286.0 351.0M300.0 311.0L292.0 351.0M306.0 311.0L298.0 351.0M312.0 311.0L304.0 351.0M318.0 311.0L310.0 351.0M324.0 311.0L316.0 351.0M330.0 311.0L322.0 351.0M336.0 311.0L328.0 351.0M342.0 311.0L334.0 351.0M348.0 311.0L340.0 351.0M354.0 311.0L346.0 351.0M360.0 311.0L352.0 351.0M366.0 311.0L358.0 351.0M372.0 311.0L364.0 351.0M378.0 311.0L370.0 351.0M384.0 311.0L376.0 351.0M390.0 311.0L382.0 351.0M396.0 311.0L388.0 351.0M402.0 311.0L394.0 351.0M408.0 311.0L400.0 351.0M414.0 311.0L406.0 351.0M420.0 311.0L412.0 351.0M426.0 311.0L418.0 351.0M432.0 311.0L424.0 351.0M438.0 311.0L430.0 351.0M444.0 311.0L436.0 351.0M450.0 311.0L442.0 351.0M456.0 311.0L448.0 351.0M462.0 311.0L454.0 351.0M468.0 311.0L460.0 351.0M474.0 311.0L466.0 351.0M480.0 311.0L472.0 351.0M486.0 311.0L478.0 351.0M492.0 311.0L484.0 351.0M498.0 311.0L490.0 351.0M504.0 311.0L496.0 351.0M510.0 311.0L502.0 351.0M516.0 311.0L508.0 351.0M522.0 311.0L514.0 351.0M528.0 311.0L520.0 351.0M534.0 311.0L526.0 351.0" stroke="#c4d6d8" stroke-width="0.8" opacity="0.6" clip-path="url(#bandc)"/><polygon points="0.0,368.7 541.0,450.7 541.0,465.4 0.0,376.3" fill="#c9c9c9" /><path d="M0.0 368.7L541.0 450.7" stroke="#555" stroke-width="0.8" /><polygon points="95.0,381.5 142.0,378.0 160.0,383.0 160.0,390.0 110.0,385.5" fill="#c6c6c6" /><polygon points="390.0,381.5 436.0,381.0 363.0,420.5 347.0,419.5 419.0,387.0 390.0,388.5" fill="#c6c6c6" /><rect x="219.3" y="234.7" width="28.9" height="9.8" fill="#e8e8e8" /><rect x="236.0" y="234.7" width="12.2" height="9.8" fill="#777" /><polygon points="139.9,244.1 230.5,244.1 230.5,395.4 142.7,381.4" fill="#efefef" /><polygon points="139.9,244.1 145.0,244.1 147.0,382.0 142.7,381.4" fill="#dedede" /><polygon points="145.5,350.6 195.0,350.6 195.0,389.8 145.5,382.5" fill="#b8b8b8" /><rect x="151.0" y="359.0" width="7.0" height="26.0" fill="#3a3ac8" /><rect x="171.0" y="360.0" width="10.0" height="14.0" fill="#5a5ac8" /><rect x="144.0" y="252.5" width="19.0" height="17.0" fill="#f4f4f4" /><rect x="145.0" y="253.5" width="17.0" height="15.0" fill="#5858a8" /><rect x="169.0" y="252.5" width="13.0" height="18.0" fill="#f4f4f4" /><rect x="170.0" y="253.5" width="11.0" height="16.0" fill="#6060c0" /><rect x="172.0" y="255.5" width="3.0" height="12.0" fill="#9a9ad8" /><rect x="144.0" y="287.0" width="19.0" height="18.0" fill="#f4f4f4" /><rect x="145.0" y="288.0" width="17.0" height="16.0" fill="#5858a8" /><rect x="169.0" y="287.0" width="13.0" height="19.0" fill="#f4f4f4" /><rect x="170.0" y="288.0" width="11.0" height="17.0" fill="#6060c0" /><rect x="172.0" y="290.0" width="3.0" height="13.0" fill="#9a9ad8" /><rect x="144.0" y="321.5" width="19.0" height="18.0" fill="#f4f4f4" /><rect x="145.0" y="322.5" width="17.0" height="16.0" fill="#5858a8" /><rect x="169.0" y="321.5" width="13.0" height="19.0" fill="#f4f4f4" /><rect x="170.0" y="322.5" width="11.0" height="17.0" fill="#6060c0" /><rect x="172.0" y="324.5" width="3.0" height="13.0" fill="#9a9ad8" /><text x="0.0" y="271.5" font-family="Liberation Sans" font-weight="bold" font-size="25" fill="#f2c418" stroke="#d8a800" stroke-width="1.6" paint-order="stroke" transform="translate(183.0 0) scale(0.74 1)">DBD</text><polygon points="230.5,244.0 311.0,245.0 311.0,287.0 230.5,285.0" fill="#8f8f8f" /><rect x="253.0" y="254.0" width="15.0" height="27.0" fill="#4c4cb8" /><rect x="297.0" y="252.0" width="12.0" height="26.0" fill="#a8a8d8" /><path d="M230.0 281.0L318.0 285.0" stroke="#555" stroke-width="1.5" /><polygon points="230.5,285.0 318.3,287.0 318.3,368.0 230.5,360.0" fill="#b4b4b4" /><polygon points="230.5,360.0 318.3,368.0 321.0,408.5 230.5,395.4" fill="#f2f2f2" /><rect x="232.0" y="292.0" width="22.0" height="31.0" fill="#e8e8e8" /><rect x="233.0" y="293.0" width="20.0" height="29.0" fill="#7474c8" /><rect x="235.0" y="296.0" width="5.0" height="24.0" fill="#9090e0" /><path d="M243.0 293.0L243.0 322.0" stroke="#ddd" stroke-width="1.2" /><rect x="232.0" y="329.0" width="22.0" height="31.0" fill="#e8e8e8" /><rect x="233.0" y="330.0" width="20.0" height="29.0" fill="#7474c8" /><rect x="235.0" y="333.0" width="5.0" height="24.0" fill="#9090e0" /><path d="M243.0 330.0L243.0 359.0" stroke="#ddd" stroke-width="1.2" /><rect x="232.0" y="366.0" width="22.0" height="32.0" fill="#e8e8e8" /><rect x="233.0" y="367.0" width="20.0" height="30.0" fill="#7474c8" /><rect x="235.0" y="370.0" width="5.0" height="25.0" fill="#9090e0" /><path d="M243.0 367.0L243.0 397.0" stroke="#ddd" stroke-width="1.2" /><rect x="273.0" y="294.0" width="24.0" height="32.2" fill="#e8e8e8" /><rect x="274.0" y="295.0" width="22.0" height="30.2" fill="#7474c8" /><rect x="276.0" y="296.0" width="5.0" height="24.0" fill="#9090e0" /><path d="M285.0 293.0L285.0 322.0" stroke="#ddd" stroke-width="1.2" /><rect x="273.0" y="331.0" width="24.0" height="32.2" fill="#e8e8e8" /><rect x="274.0" y="332.0" width="22.0" height="30.2" fill="#7474c8" /><rect x="276.0" y="333.0" width="5.0" height="24.0" fill="#9090e0" /><path d="M285.0 330.0L285.0 359.0" stroke="#ddd" stroke-width="1.2" /><rect x="273.0" y="368.0" width="24.0" height="33.2" fill="#e8e8e8" /><rect x="274.0" y="369.0" width="22.0" height="31.2" fill="#7474c8" /><rect x="276.0" y="370.0" width="5.0" height="25.0" fill="#9090e0" /><path d="M285.0 367.0L285.0 397.0" stroke="#ddd" stroke-width="1.2" /><polygon points="318.3,271.0 393.0,266.5 393.0,281.4 338.8,285.0 318.3,287.0" fill="#b0b0b0" /><polygon points="338.8,271.0 393.0,266.5 393.0,281.4 338.8,285.0" fill="#a8a8a8" /><path d="M318.0 271.0L393.0 266.5" stroke="#ddd" stroke-width="1.5" /><polygon points="318.3,271.0 338.8,271.0 338.8,402.0 321.0,409.4" fill="#d0d0d0" /><polygon points="338.8,285.0 393.0,281.4 393.0,385.0 338.8,402.0" fill="#303030" /><polygon points="342.5,289.0 354.5,288.0 354.5,322.0 342.5,323.0" fill="#a4a6dc" /><path d="M348.5 289.0L348.5 323.0" stroke="#e0e0f0" stroke-width="1" /><rect x="342.5" y="311.0" width="12.0" height="11.0" fill="#c8c8c8" /><polygon points="342.5,325.4 354.5,324.4 354.5,358.5 342.5,359.5" fill="#a4a6dc" /><path d="M348.5 325.4L348.5 359.5" stroke="#e0e0f0" stroke-width="1" /><polygon points="342.5,361.8 354.5,360.8 354.5,394.0 342.5,395.0" fill="#a4a6dc" /><path d="M348.5 361.8L348.5 395.0" stroke="#e0e0f0" stroke-width="1" /><polygon points="361.5,287.6 373.5,286.6 373.5,318.5 361.5,319.5" fill="#a4a6dc" /><path d="M367.5 287.6L367.5 319.5" stroke="#e0e0f0" stroke-width="1" /><rect x="361.5" y="307.5" width="12.0" height="11.0" fill="#c8c8c8" /><polygon points="361.5,324.0 373.5,323.0 373.5,355.0 361.5,356.0" fill="#a4a6dc" /><path d="M367.5 324.0L367.5 356.0" stroke="#e0e0f0" stroke-width="1" /><polygon points="361.5,360.4 373.5,359.4 373.5,390.5 361.5,391.5" fill="#a4a6dc" /><path d="M367.5 360.4L367.5 391.5" stroke="#e0e0f0" stroke-width="1" /><polygon points="379.0,286.2 390.0,285.2 390.0,315.0 379.0,316.0" fill="#a4a6dc" /><path d="M384.5 286.2L384.5 316.0" stroke="#e0e0f0" stroke-width="1" /><rect x="379.0" y="304.0" width="11.0" height="11.0" fill="#c8c8c8" /><polygon points="379.0,322.6 390.0,321.6 390.0,351.5 379.0,352.5" fill="#a4a6dc" /><path d="M384.5 322.6L384.5 352.5" stroke="#e0e0f0" stroke-width="1" /><polygon points="379.0,359.0 390.0,358.0 390.0,387.0 379.0,388.0" fill="#a4a6dc" /><path d="M384.5 359.0L384.5 388.0" stroke="#e0e0f0" stroke-width="1" /><rect x="126.5" y="347.0" width="4.5" height="37.5" fill="#6a4a30" /><circle cx="127.7" cy="331.9" r="16.8" fill="#9aaa70"/><circle cx="123.0" cy="326.0" r="9" fill="#b0c080" opacity="0.7"/><ellipse cx="183.0" cy="419.0" rx="8" ry="3" fill="#7a7a7a"/><ellipse cx="500.0" cy="476.0" rx="9" ry="3.3" fill="#7a7a7a"/><rect x="177.0" y="465.0" width="10.0" height="12.0" fill="#b8b8c0" /><rect x="487.0" y="536.0" width="15.0" height="13.0" fill="#b8b8c0" /></svg>
<div class="a" style="left:605px;top:319px;width:246px;height:20px;background:#000;"></div>
<div class="t" style="left:689.5px;top:322.3px;font-size:11.5px;color:#fff;font-weight:bold;transform:scaleX(0.867);transform-origin:0 0;">Optionen öffnen</div>
<svg style="left:318px;top:327px;" width="48" height="50" viewBox="0 0 48 50"><path d="M24 0L48 14L24 28L0 14Z" fill="#fff"/><path d="M5 20L24 31L43 20L48 23L24 37L0 23Z" fill="#fff"/><path d="M5 29L24 40L43 29L48 32L24 46L0 32Z" fill="#fff"/></svg>
<div class="a" style="left:321px;top:939px;width:36px;height:36px;background:#f0f0f0;border:1px solid #111;"></div>
<svg style="left:337px;top:946px;" width="18" height="20" viewBox="0 0 18 20"><path d="M1 0V15" stroke="#2040d0" stroke-width="1.3"/><path d="M1 15H15" stroke="#e8a030" stroke-width="1.3"/></svg>
<svg style="left:772px;top:909px;" width="62" height="62" viewBox="0 0 62 62"><circle cx="31" cy="31" r="30.5" fill="#e83e31"/><path d="M17 27A15 15 0 0 1 43 22" stroke="#fff" stroke-width="5.5" fill="none"/><path d="M36 17L47 15L44 27Z" fill="#fff"/><path d="M45 35A15 15 0 0 1 19 40" stroke="#fff" stroke-width="5.5" fill="none"/><path d="M26 45L15 47L18 35Z" fill="#fff"/></svg>
<div class="a" style="left:1367px;top:110px;width:2px;height:880px;background:#dcecfa;"></div>
<div class="a" style="left:1369px;top:110px;width:558px;height:443px;background:#fff;"></div>
<div class="a" style="left:1369px;top:111px;width:558px;height:22px;background:#fbfbfb;"></div>
<div class="a" style="left:1369px;top:133px;width:558px;height:1px;background:#dadada;"></div>
<div class="t" style="left:1372.3px;top:117.1px;font-size:12.3px;color:#1a1a1a;transform:scaleX(0.919);transform-origin:0 0;">IFC Manager</div>
<svg style="left:1881px;top:117px;" width="14" height="13" viewBox="0 0 14 13"><rect x="0.5" y="0.5" width="13" height="12" fill="#eef2f7" stroke="#4a5a70"/><rect x="3.5" y="4.5" width="7" height="4" fill="none" stroke="#4a5a70"/></svg>
<svg style="left:1897px;top:117px;" width="12" height="13" viewBox="0 0 12 13"><path d="M2 0.5H10M3 0.5V6H9V0.5M1 6.5H11M6 6.5V12.5" stroke="#777" fill="none"/></svg>
<div class="a" style="left:1914px;top:118px;width:12px;height:12px;background:#d9393a;"></div>
<svg style="left:1916px;top:120px;" width="8" height="8" viewBox="0 0 8 8"><path d="M1.5 1.5L6.5 6.5M6.5 1.5L1.5 6.5" stroke="#fff" stroke-width="1.6"/></svg>
<div class="a" style="left:1369px;top:135px;width:558px;height:26px;background:#f4f4f4;"></div>
<div class="a" style="left:1369px;top:161px;width:558px;height:1px;background:#c8c8c8;"></div>
<div class="a" style="left:1373px;top:138px;width:1px;height:21px;background:#b8b8b8;"></div>
<div class="t" style="left:1379.7px;top:143.0px;font-size:12.3px;color:#1a1a1a;transform:scaleX(0.943);transform-origin:0 0;">IFC Projekt</div>
<div class="a" style="left:1440px;top:137px;width:485px;height:22px;background:#fbfbfb;"></div>
<div class="t" style="left:1444.2px;top:142.6px;font-size:12.3px;color:#1a1a1a;transform:scaleX(0.928);transform-origin:0 0;">Stadthaus_Revit2023_mit DBD-BIM.ifc (IFC-1)</div>
<svg style="left:1917px;top:147px;" width="8" height="5" viewBox="0 0 8 5"><path d="M0 0H8L4 5Z" fill="#000"/></svg>
<div class="a" style="left:1369px;top:162px;width:558px;height:24px;background:#fff;"></div>
<div class="a" style="left:1369px;top:185px;width:558px;height:1px;background:#c8c8c8;"></div>
<svg style="left:1374px;top:167px;" width="14" height="14" viewBox="0 0 14 14"><path d="M1.5 0.5V12.5H6M1.5 6.5H6" stroke="#3f73b8" fill="none"/><rect x="0.5" y="0.5" width="4" height="2" fill="#3f73b8"/><path d="M10 4V9M7.5 6.5H12.5M10 10V14M8 12H12" stroke="#3f73b8"/></svg>
<svg style="left:1396px;top:167px;" width="16" height="14" viewBox="0 0 16 14"><rect x="0.5" y="0.5" width="5" height="3" fill="none" stroke="#3f73b8"/><path d="M3 3.5V11.5H6M3 7.5H6" stroke="#3f73b8" fill="none"/><rect x="6.5" y="5.5" width="5" height="3" fill="none" stroke="#3f73b8"/><rect x="6.5" y="9.5" width="5" height="3" fill="none" stroke="#3f73b8"/><path d="M14 7V8M14 10V11" stroke="#3f73b8"/></svg>
<svg style="left:1419px;top:167px;" width="14" height="14" viewBox="0 0 14 14"><rect x="0.5" y="0.5" width="5" height="3" fill="none" stroke="#3f73b8"/><path d="M3 3.5V11.5H6M3 7.5H6" stroke="#3f73b8" fill="none"/><rect x="6.5" y="5.5" width="7" height="3" fill="none" stroke="#3f73b8"/><rect x="6.5" y="9.5" width="7" height="3" fill="none" stroke="#3f73b8"/></svg>
<div class="a" style="left:1442px;top:165px;width:1px;height:18px;background:#999;"></div>
<div class="a" style="left:1447px;top:163px;width:22px;height:20px;background:#cce4f7;border:1px solid #99c9ef;"></div>
<svg style="left:1451px;top:166px;" width="15" height="15" viewBox="0 0 15 15"><rect x="0.5" y="0.5" width="13" height="13" fill="none" stroke="#3f73b8" stroke-dasharray="2 1.5"/><circle cx="9" cy="5" r="2.3" fill="none" stroke="#3f73b8"/><circle cx="9" cy="10.5" r="2.3" fill="none" stroke="#3f73b8"/></svg>
<svg style="left:1472px;top:166px;" width="18" height="16" viewBox="0 0 18 16"><path d="M3 5H7C7 2 11 2 11 5H15V9C12 9 12 13 15 13V16H11C11 13 7 13 7 16H3V12C0 12 0 8 3 8Z" fill="#dfe9f5" stroke="#3f73b8"/></svg>
<svg style="left:1497px;top:167px;" width="15" height="15" viewBox="0 0 15 15"><rect x="3.5" y="0.5" width="11" height="11" fill="none" stroke="#aab"/><rect x="0.5" y="3.5" width="11" height="11" fill="#fff" stroke="#aab"/></svg>
<svg style="left:1519px;top:166px;" width="17" height="17" viewBox="0 0 17 17"><circle cx="7" cy="9" r="6.3" fill="none" stroke="#3f73b8" stroke-width="1.6"/><circle cx="10" cy="7" r="6.3" fill="none" stroke="#3f73b8" stroke-width="1.6"/></svg>
<div class="a" style="left:1542px;top:165px;width:1px;height:18px;background:#999;"></div>
<div class="a" style="left:1369px;top:186px;width:523px;height:26px;background:#efefef;"></div>
<div class="a" style="left:1892px;top:186px;width:35px;height:26px;background:#fff;"></div>
<div class="a" style="left:1517px;top:186px;width:1px;height:26px;background:#c8c8c8;"></div>
<div class="a" style="left:1649px;top:186px;width:1px;height:26px;background:#c8c8c8;"></div>
<div class="a" style="left:1725px;top:186px;width:1px;height:26px;background:#c8c8c8;"></div>
<div class="a" style="left:1892px;top:186px;width:1px;height:26px;background:#c8c8c8;"></div>
<div class="a" style="left:1369px;top:211px;width:523px;height:1px;background:#d8d8d8;"></div>
<div class="t" style="left:1425.2px;top:193.1px;font-size:12.3px;color:#1a1a1a;transform:scaleX(0.945);transform-origin:0 0;">Name</div>
<div class="t" style="left:1548.6px;top:193.1px;font-size:12.3px;color:#1a1a1a;transform:scaleX(0.851);transform-origin:0 0;">Beschreibung</div>
<div class="t" style="left:1658.0px;top:193.1px;font-size:12.3px;color:#1a1a1a;transform:scaleX(0.845);transform-origin:0 0;">Bezeichner</div>
<div class="t" style="left:1784.0px;top:193.1px;font-size:12.3px;color:#1a1a1a;transform:scaleX(0.954);transform-origin:0 0;">Identifier</div>
<div class="a" style="left:1369px;top:212px;width:545px;height:338px;background:#fff;"></div>
<div class="a" style="left:1369px;top:212px;width:523px;height:18px;background:#b6b6b6;"></div>
<div class="a" style="left:1517px;top:212px;width:1px;height:18px;background:#b0b0b0;"></div>
<div class="a" style="left:1649px;top:212px;width:1px;height:18px;background:#b0b0b0;"></div>
<div class="a" style="left:1725px;top:212px;width:1px;height:18px;background:#b0b0b0;"></div>
<div class="a" style="left:1892px;top:212px;width:1px;height:18px;background:#b0b0b0;"></div>
<div class="a" style="left:1369px;top:229px;width:523px;height:1px;background:#d0d0d0;"></div>
<div class="a" style="left:1373.0px;top:216px;width:10px;height:10px;background:#f4f4f4;"></div>
<div class="a" style="left:1375.0px;top:220px;width:7px;height:2px;background:#000;"></div>
<div class="a" style="left:1387.0px;top:215px;width:12px;height:12px;background:#fafafa;border:1px solid #777;"></div>
<svg style="left:1388.0px;top:216px;" width="10" height="10" viewBox="0 0 10 10"><path d="M1.5 5L4 7.8L8.8 2" stroke="#000" stroke-width="1.8" fill="none"/></svg>
<div class="t" style="left:1405.5px;top:215.9px;font-size:12.3px;color:#1a1a1a;transform:scaleX(0.900);transform-origin:0 0;">Project</div>
<div class="t" style="left:1525.7px;top:215.9px;font-size:12.3px;color:#1a1a1a;transform:scaleX(0.900);transform-origin:0 0;">1</div>
<div class="t" style="left:1734.0px;top:215.9px;font-size:12.3px;color:#1a1a1a;transform:scaleX(0.900);transform-origin:0 0;">3tBQWfoOb5fRMsT4lUc$3f</div>
<div class="a" style="left:1369px;top:230px;width:523px;height:18px;background:#c6c6c6;"></div>
<div class="a" style="left:1517px;top:230px;width:1px;height:18px;background:#b0b0b0;"></div>
<div class="a" style="left:1649px;top:230px;width:1px;height:18px;background:#b0b0b0;"></div>
<div class="a" style="left:1725px;top:230px;width:1px;height:18px;background:#b0b0b0;"></div>
<div class="a" style="left:1892px;top:230px;width:1px;height:18px;background:#b0b0b0;"></div>
<div class="a" style="left:1369px;top:247px;width:523px;height:1px;background:#d0d0d0;"></div>
<div class="a" style="left:1385.8px;top:234px;width:10px;height:10px;background:#f4f4f4;"></div>
<div class="a" style="left:1387.8px;top:238px;width:7px;height:2px;background:#000;"></div>
<div class="a" style="left:1399.8px;top:233px;width:12px;height:12px;background:#fafafa;border:1px solid #777;"></div>
<svg style="left:1400.8px;top:234px;" width="10" height="10" viewBox="0 0 10 10"><path d="M1.5 5L4 7.8L8.8 2" stroke="#000" stroke-width="1.8" fill="none"/></svg>
<div class="t" style="left:1418.3px;top:233.9px;font-size:12.3px;color:#1a1a1a;transform:scaleX(0.900);transform-origin:0 0;">Site</div>
<div class="t" style="left:1525.7px;top:233.9px;font-size:12.3px;color:#1a1a1a;transform:scaleX(0.900);transform-origin:0 0;">Oberfläche:598816</div>
<div class="t" style="left:1734.0px;top:233.9px;font-size:12.3px;color:#1a1a1a;transform:scaleX(0.900);transform-origin:0 0;">3tBQWfoOb5fRMsT4lUc$3h</div>
<div class="a" style="left:1369px;top:248px;width:523px;height:18px;background:#d2d2d2;"></div>
<div class="a" style="left:1517px;top:248px;width:1px;height:18px;background:#b0b0b0;"></div>
<div class="a" style="left:1649px;top:248px;width:1px;height:18px;background:#b0b0b0;"></div>
<div class="a" style="left:1725px;top:248px;width:1px;height:18px;background:#b0b0b0;"></div>
<div class="a" style="left:1892px;top:248px;width:1px;height:18px;background:#b0b0b0;"></div>
<div class="a" style="left:1369px;top:265px;width:523px;height:1px;background:#d0d0d0;"></div>
<div class="a" style="left:1398.6px;top:252px;width:10px;height:10px;background:#f4f4f4;"></div>
<div class="a" style="left:1400.6px;top:256px;width:7px;height:2px;background:#000;"></div>
<div class="a" style="left:1412.6px;top:251px;width:12px;height:12px;background:#fafafa;border:1px solid #777;"></div>
<svg style="left:1413.6px;top:252px;" width="10" height="10" viewBox="0 0 10 10"><path d="M1.5 5L4 7.8L8.8 2" stroke="#000" stroke-width="1.8" fill="none"/></svg>
<div class="t" style="left:1431.1px;top:251.9px;font-size:12.3px;color:#1a1a1a;transform:scaleX(0.900);transform-origin:0 0;">Building</div>
<div class="t" style="left:1525.7px;top:251.9px;font-size:12.3px;color:#1a1a1a;transform:scaleX(0.900);transform-origin:0 0;">DBD-BIM Beispielhaus</div>
<div class="t" style="left:1734.0px;top:251.9px;font-size:12.3px;color:#1a1a1a;transform:scaleX(0.900);transform-origin:0 0;">3tBQWfoOb5fRMsT4lUc$3e</div>
<div class="a" style="left:1369px;top:266px;width:523px;height:18px;background:#dbdbdb;"></div>
<div class="a" style="left:1517px;top:266px;width:1px;height:18px;background:#b0b0b0;"></div>
<div class="a" style="left:1649px;top:266px;width:1px;height:18px;background:#b0b0b0;"></div>
<div class="a" style="left:1725px;top:266px;width:1px;height:18px;background:#b0b0b0;"></div>
<div class="a" style="left:1892px;top:266px;width:1px;height:18px;background:#b0b0b0;"></div>
<div class="a" style="left:1369px;top:283px;width:523px;height:1px;background:#d0d0d0;"></div>
<div class="a" style="left:1411.4px;top:270px;width:9px;height:9px;background:#fff;border:1px solid #999;"></div>
<div class="a" style="left:1413.4px;top:274px;width:5px;height:1px;background:#000;"></div>
<div class="a" style="left:1415.4px;top:272px;width:1px;height:5px;background:#000;"></div>
<div class="a" style="left:1425.4px;top:269px;width:12px;height:12px;background:#fafafa;border:1px solid #777;"></div>
<svg style="left:1426.4px;top:270px;" width="10" height="10" viewBox="0 0 10 10"><path d="M1.5 5L4 7.8L8.8 2" stroke="#000" stroke-width="1.8" fill="none"/></svg>
<div class="t" style="left:1443.9px;top:269.9px;font-size:12.3px;color:#1a1a1a;transform:scaleX(0.900);transform-origin:0 0;">BuildingStorey</div>
<div class="t" style="left:1525.7px;top:269.9px;font-size:12.3px;color:#1a1a1a;transform:scaleX(0.900);transform-origin:0 0;">Ebene 0 - Bsp. GaLa+...</div>
<div class="t" style="left:1734.0px;top:269.9px;font-size:12.3px;color:#1a1a1a;transform:scaleX(0.900);transform-origin:0 0;">13LV5dTeP3CAox54x56C1Z</div>
<div class="a" style="left:1369px;top:284px;width:523px;height:18px;background:#dbdbdb;"></div>
<div class="a" style="left:1517px;top:284px;width:1px;height:18px;background:#b0b0b0;"></div>
<div class="a" style="left:1649px;top:284px;width:1px;height:18px;background:#b0b0b0;"></div>
<div class="a" style="left:1725px;top:284px;width:1px;height:18px;background:#b0b0b0;"></div>
<div class="a" style="left:1892px;top:284px;width:1px;height:18px;background:#b0b0b0;"></div>
<div class="a" style="left:1369px;top:301px;width:523px;height:1px;background:#d0d0d0;"></div>
<div class="a" style="left:1411.4px;top:288px;width:9px;height:9px;background:#fff;border:1px solid #999;"></div>
<div class="a" style="left:1413.4px;top:292px;width:5px;height:1px;background:#000;"></div>
<div class="a" style="left:1425.4px;top:287px;width:12px;height:12px;background:#fafafa;border:1px solid #777;"></div>
<svg style="left:1426.4px;top:288px;" width="10" height="10" viewBox="0 0 10 10"><path d="M1.5 5L4 7.8L8.8 2" stroke="#000" stroke-width="1.8" fill="none"/></svg>
<div class="t" style="left:1443.9px;top:287.9px;font-size:12.3px;color:#1a1a1a;transform:scaleX(0.900);transform-origin:0 0;">BuildingStorey</div>
<div class="t" style="left:1525.7px;top:287.9px;font-size:12.3px;color:#1a1a1a;transform:scaleX(0.900);transform-origin:0 0;">Ebene 1</div>
<div class="t" style="left:1734.0px;top:287.9px;font-size:12.3px;color:#1a1a1a;transform:scaleX(0.900);transform-origin:0 0;">1jPCssxb5C1RSM_YHIx$zl</div>
<div class="a" style="left:1369px;top:302px;width:523px;height:18px;background:#e6e6e6;"></div>
<div class="a" style="left:1517px;top:302px;width:1px;height:18px;background:#b0b0b0;"></div>
<div class="a" style="left:1649px;top:302px;width:1px;height:18px;background:#b0b0b0;"></div>
<div class="a" style="left:1725px;top:302px;width:1px;height:18px;background:#b0b0b0;"></div>
<div class="a" style="left:1892px;top:302px;width:1px;height:18px;background:#b0b0b0;"></div>
<div class="a" style="left:1369px;top:319px;width:523px;height:1px;background:#d0d0d0;"></div>
<div class="a" style="left:1424.2px;top:306px;width:9px;height:9px;background:#fff;border:1px solid #999;"></div>
<div class="a" style="left:1426.2px;top:310px;width:5px;height:1px;background:#000;"></div>
<div class="a" style="left:1428.2px;top:308px;width:1px;height:5px;background:#000;"></div>
<div class="a" style="left:1438.2px;top:305px;width:12px;height:12px;background:#fafafa;border:1px solid #777;"></div>
<svg style="left:1439.2px;top:306px;" width="10" height="10" viewBox="0 0 10 10"><path d="M1.5 5L4 7.8L8.8 2" stroke="#000" stroke-width="1.8" fill="none"/></svg>
<div class="t" style="left:1456.7px;top:305.9px;font-size:12.3px;color:#1a1a1a;transform:scaleX(0.900);transform-origin:0 0;">StairList</div>
<div class="a" style="left:1369px;top:320px;width:523px;height:18px;background:#e6e6e6;"></div>
<div class="a" style="left:1517px;top:320px;width:1px;height:18px;background:#b0b0b0;"></div>
<div class="a" style="left:1649px;top:320px;width:1px;height:18px;background:#b0b0b0;"></div>
<div class="a" style="left:1725px;top:320px;width:1px;height:18px;background:#b0b0b0;"></div>
<div class="a" style="left:1892px;top:320px;width:1px;height:18px;background:#b0b0b0;"></div>
<div class="a" style="left:1369px;top:337px;width:523px;height:1px;background:#d0d0d0;"></div>
<div class="a" style="left:1424.2px;top:324px;width:9px;height:9px;background:#fff;border:1px solid #999;"></div>
<div class="a" style="left:1426.2px;top:328px;width:5px;height:1px;background:#000;"></div>
<div class="a" style="left:1428.2px;top:326px;width:1px;height:5px;background:#000;"></div>
<div class="a" style="left:1438.2px;top:323px;width:12px;height:12px;background:#fafafa;border:1px solid #777;"></div>
<svg style="left:1439.2px;top:324px;" width="10" height="10" viewBox="0 0 10 10"><path d="M1.5 5L4 7.8L8.8 2" stroke="#000" stroke-width="1.8" fill="none"/></svg>
<div class="t" style="left:1456.7px;top:323.9px;font-size:12.3px;color:#1a1a1a;transform:scaleX(0.900);transform-origin:0 0;">FlowTer...</div>
<div class="a" style="left:1369px;top:338px;width:523px;height:18px;background:#e6e6e6;"></div>
<div class="a" style="left:1517px;top:338px;width:1px;height:18px;background:#b0b0b0;"></div>
<div class="a" style="left:1649px;top:338px;width:1px;height:18px;background:#b0b0b0;"></div>
<div class="a" style="left:1725px;top:338px;width:1px;height:18px;background:#b0b0b0;"></div>
<div class="a" style="left:1892px;top:338px;width:1px;height:18px;background:#b0b0b0;"></div>
<div class="a" style="left:1369px;top:355px;width:523px;height:1px;background:#d0d0d0;"></div>
<div class="a" style="left:1424.2px;top:342px;width:9px;height:9px;background:#fff;border:1px solid #999;"></div>
<div class="a" style="left:1426.2px;top:346px;width:5px;height:1px;background:#000;"></div>
<div class="a" style="left:1428.2px;top:344px;width:1px;height:5px;background:#000;"></div>
<div class="a" style="left:1438.2px;top:341px;width:12px;height:12px;background:#fafafa;border:1px solid #777;"></div>
<svg style="left:1439.2px;top:342px;" width="10" height="10" viewBox="0 0 10 10"><path d="M1.5 5L4 7.8L8.8 2" stroke="#000" stroke-width="1.8" fill="none"/></svg>
<div class="t" style="left:1456.7px;top:341.9px;font-size:12.3px;color:#1a1a1a;transform:scaleX(0.900);transform-origin:0 0;">RailingList</div>
<div class="a" style="left:1369px;top:356px;width:523px;height:18px;background:#e6e6e6;"></div>
<div class="a" style="left:1517px;top:356px;width:1px;height:18px;background:#b0b0b0;"></div>
<div class="a" style="left:1649px;top:356px;width:1px;height:18px;background:#b0b0b0;"></div>
<div class="a" style="left:1725px;top:356px;width:1px;height:18px;background:#b0b0b0;"></div>
<div class="a" style="left:1892px;top:356px;width:1px;height:18px;background:#b0b0b0;"></div>
<div class="a" style="left:1369px;top:373px;width:523px;height:1px;background:#d0d0d0;"></div>
<div class="a" style="left:1424.2px;top:360px;width:9px;height:9px;background:#fff;border:1px solid #999;"></div>
<div class="a" style="left:1426.2px;top:364px;width:5px;height:1px;background:#000;"></div>
<div class="a" style="left:1428.2px;top:362px;width:1px;height:5px;background:#000;"></div>
<div class="a" style="left:1438.2px;top:359px;width:12px;height:12px;background:#fafafa;border:1px solid #777;"></div>
<svg style="left:1439.2px;top:360px;" width="10" height="10" viewBox="0 0 10 10"><path d="M1.5 5L4 7.8L8.8 2" stroke="#000" stroke-width="1.8" fill="none"/></svg>
<div class="t" style="left:1456.7px;top:359.9px;font-size:12.3px;color:#1a1a1a;transform:scaleX(0.900);transform-origin:0 0;">PipeSeg...</div>
<div class="a" style="left:1369px;top:374px;width:523px;height:18px;background:#e6e6e6;"></div>
<div class="a" style="left:1517px;top:374px;width:1px;height:18px;background:#b0b0b0;"></div>
<div class="a" style="left:1649px;top:374px;width:1px;height:18px;background:#b0b0b0;"></div>
<div class="a" style="left:1725px;top:374px;width:1px;height:18px;background:#b0b0b0;"></div>
<div class="a" style="left:1892px;top:374px;width:1px;height:18px;background:#b0b0b0;"></div>
<div class="a" style="left:1369px;top:391px;width:523px;height:1px;background:#d0d0d0;"></div>
<div class="a" style="left:1424.2px;top:378px;width:9px;height:9px;background:#fff;border:1px solid #999;"></div>
<div class="a" style="left:1426.2px;top:382px;width:5px;height:1px;background:#000;"></div>
<div class="a" style="left:1428.2px;top:380px;width:1px;height:5px;background:#000;"></div>
<div class="a" style="left:1438.2px;top:377px;width:12px;height:12px;background:#fafafa;border:1px solid #777;"></div>
<svg style="left:1439.2px;top:378px;" width="10" height="10" viewBox="0 0 10 10"><path d="M1.5 5L4 7.8L8.8 2" stroke="#000" stroke-width="1.8" fill="none"/></svg>
<div class="t" style="left:1456.7px;top:377.9px;font-size:12.3px;color:#1a1a1a;transform:scaleX(0.900);transform-origin:0 0;">ColumnList</div>
<div class="a" style="left:1369px;top:392px;width:523px;height:18px;background:#e6e6e6;"></div>
<div class="a" style="left:1517px;top:392px;width:1px;height:18px;background:#b0b0b0;"></div>
<div class="a" style="left:1649px;top:392px;width:1px;height:18px;background:#b0b0b0;"></div>
<div class="a" style="left:1725px;top:392px;width:1px;height:18px;background:#b0b0b0;"></div>
<div class="a" style="left:1892px;top:392px;width:1px;height:18px;background:#b0b0b0;"></div>
<div class="a" style="left:1369px;top:409px;width:523px;height:1px;background:#d0d0d0;"></div>
<div class="a" style="left:1424.2px;top:396px;width:9px;height:9px;background:#fff;border:1px solid #999;"></div>
<div class="a" style="left:1426.2px;top:400px;width:5px;height:1px;background:#000;"></div>
<div class="a" style="left:1428.2px;top:398px;width:1px;height:5px;background:#000;"></div>
<div class="a" style="left:1438.2px;top:395px;width:12px;height:12px;background:#fafafa;border:1px solid #777;"></div>
<svg style="left:1439.2px;top:396px;" width="10" height="10" viewBox="0 0 10 10"><path d="M1.5 5L4 7.8L8.8 2" stroke="#000" stroke-width="1.8" fill="none"/></svg>
<div class="t" style="left:1456.7px;top:395.9px;font-size:12.3px;color:#1a1a1a;transform:scaleX(0.900);transform-origin:0 0;">DoorList</div>
<div class="a" style="left:1369px;top:410px;width:523px;height:18px;background:#e6e6e6;"></div>
<div class="a" style="left:1517px;top:410px;width:1px;height:18px;background:#b0b0b0;"></div>
<div class="a" style="left:1649px;top:410px;width:1px;height:18px;background:#b0b0b0;"></div>
<div class="a" style="left:1725px;top:410px;width:1px;height:18px;background:#b0b0b0;"></div>
<div class="a" style="left:1892px;top:410px;width:1px;height:18px;background:#b0b0b0;"></div>
<div class="a" style="left:1369px;top:427px;width:523px;height:1px;background:#d0d0d0;"></div>
<div class="a" style="left:1424.2px;top:414px;width:9px;height:9px;background:#fff;border:1px solid #999;"></div>
<div class="a" style="left:1426.2px;top:418px;width:5px;height:1px;background:#000;"></div>
<div class="a" style="left:1438.2px;top:413px;width:12px;height:12px;background:#fafafa;border:1px solid #777;"></div>
<svg style="left:1439.2px;top:414px;" width="10" height="10" viewBox="0 0 10 10"><path d="M1.5 5L4 7.8L8.8 2" stroke="#000" stroke-width="1.8" fill="none"/></svg>
<div class="t" style="left:1456.7px;top:413.9px;font-size:12.3px;color:#1a1a1a;transform:scaleX(0.900);transform-origin:0 0;">WallList</div>
<div class="a" style="left:1369px;top:428px;width:523px;height:18px;background:#fff;"></div>
<div class="a" style="left:1517px;top:428px;width:1px;height:18px;background:#b0b0b0;"></div>
<div class="a" style="left:1649px;top:428px;width:1px;height:18px;background:#b0b0b0;"></div>
<div class="a" style="left:1725px;top:428px;width:1px;height:18px;background:#b0b0b0;"></div>
<div class="a" style="left:1892px;top:428px;width:1px;height:18px;background:#b0b0b0;"></div>
<div class="a" style="left:1369px;top:445px;width:523px;height:1px;background:#d0d0d0;"></div>
<div class="a" style="left:1437.0px;top:432px;width:9px;height:9px;background:#fff;border:1px solid #999;"></div>
<div class="a" style="left:1439.0px;top:436px;width:5px;height:1px;background:#000;"></div>
<div class="a" style="left:1441.0px;top:434px;width:1px;height:5px;background:#000;"></div>
<div class="a" style="left:1451.0px;top:431px;width:12px;height:12px;background:#fafafa;border:1px solid #777;"></div>
<svg style="left:1452.0px;top:432px;" width="10" height="10" viewBox="0 0 10 10"><path d="M1.5 5L4 7.8L8.8 2" stroke="#000" stroke-width="1.8" fill="none"/></svg>
<div class="t" style="left:1469.5px;top:431.9px;font-size:12.3px;color:#1a1a1a;transform:scaleX(0.900);transform-origin:0 0;">Wall</div>
<div class="t" style="left:1525.7px;top:431.9px;font-size:12.3px;color:#1a1a1a;transform:scaleX(0.900);transform-origin:0 0;">Basiswand:GK 12.5:3...</div>
<div class="t" style="left:1734.0px;top:431.9px;font-size:12.3px;color:#1a1a1a;transform:scaleX(0.900);transform-origin:0 0;">3ASZHC5Bj5FhTvlNfzChdR</div>
<div class="a" style="left:1369px;top:446px;width:523px;height:18px;background:#fff;"></div>
<div class="a" style="left:1517px;top:446px;width:1px;height:18px;background:#b0b0b0;"></div>
<div class="a" style="left:1649px;top:446px;width:1px;height:18px;background:#b0b0b0;"></div>
<div class="a" style="left:1725px;top:446px;width:1px;height:18px;background:#b0b0b0;"></div>
<div class="a" style="left:1892px;top:446px;width:1px;height:18px;background:#b0b0b0;"></div>
<div class="a" style="left:1369px;top:463px;width:523px;height:1px;background:#d0d0d0;"></div>
<div class="a" style="left:1451.0px;top:449px;width:12px;height:12px;background:#fafafa;border:1px solid #777;"></div>
<svg style="left:1452.0px;top:450px;" width="10" height="10" viewBox="0 0 10 10"><path d="M1.5 5L4 7.8L8.8 2" stroke="#000" stroke-width="1.8" fill="none"/></svg>
<div class="t" style="left:1469.5px;top:449.9px;font-size:12.3px;color:#1a1a1a;transform:scaleX(0.900);transform-origin:0 0;">Wall</div>
<div class="t" style="left:1525.7px;top:449.9px;font-size:12.3px;color:#1a1a1a;transform:scaleX(0.900);transform-origin:0 0;">Basiswand:GK 12.5:5...</div>
<div class="t" style="left:1734.0px;top:449.9px;font-size:12.3px;color:#1a1a1a;transform:scaleX(0.900);transform-origin:0 0;">0SQYYex0n4JA51YX9kJQ9y</div>
<div class="a" style="left:1369px;top:464px;width:523px;height:18px;background:#fff;"></div>
<div class="a" style="left:1517px;top:464px;width:1px;height:18px;background:#b0b0b0;"></div>
<div class="a" style="left:1649px;top:464px;width:1px;height:18px;background:#b0b0b0;"></div>
<div class="a" style="left:1725px;top:464px;width:1px;height:18px;background:#b0b0b0;"></div>
<div class="a" style="left:1892px;top:464px;width:1px;height:18px;background:#b0b0b0;"></div>
<div class="a" style="left:1369px;top:481px;width:523px;height:1px;background:#d0d0d0;"></div>
<div class="a" style="left:1451.0px;top:467px;width:12px;height:12px;background:#fafafa;border:1px solid #777;"></div>
<svg style="left:1452.0px;top:468px;" width="10" height="10" viewBox="0 0 10 10"><path d="M1.5 5L4 7.8L8.8 2" stroke="#000" stroke-width="1.8" fill="none"/></svg>
<div class="t" style="left:1469.5px;top:467.9px;font-size:12.3px;color:#1a1a1a;transform:scaleX(0.900);transform-origin:0 0;">Wall</div>
<div class="t" style="left:1525.7px;top:467.9px;font-size:12.3px;color:#1a1a1a;transform:scaleX(0.900);transform-origin:0 0;">Basiswand:GK 12.5:5...</div>
<div class="t" style="left:1734.0px;top:467.9px;font-size:12.3px;color:#1a1a1a;transform:scaleX(0.900);transform-origin:0 0;">0SQYYex0n4JA51YX9kJQ9$</div>
<div class="a" style="left:1369px;top:482px;width:543px;height:18px;background:#0a6ed8;"></div>
<div class="a" style="left:1517px;top:482px;width:1px;height:18px;background:#5a8fd0;"></div>
<div class="a" style="left:1649px;top:482px;width:1px;height:18px;background:#5a8fd0;"></div>
<div class="a" style="left:1725px;top:482px;width:1px;height:18px;background:#5a8fd0;"></div>
<div class="a" style="left:1892px;top:482px;width:1px;height:18px;background:#5a8fd0;"></div>
<div class="a" style="left:1369px;top:499px;width:523px;height:1px;background:#0a6ed8;"></div>
<div class="a" style="left:1518px;top:482px;width:131px;height:18px;border:1px dotted #9cc4ef;"></div>
<div class="a" style="left:1437.0px;top:486px;width:10px;height:10px;background:#0a6ed8;"></div>
<div class="a" style="left:1439.0px;top:490px;width:7px;height:2px;background:#fff;"></div>
<div class="a" style="left:1451.0px;top:485px;width:12px;height:12px;background:#fafafa;border:1px solid #777;"></div>
<svg style="left:1452.0px;top:486px;" width="10" height="10" viewBox="0 0 10 10"><path d="M1.5 5L4 7.8L8.8 2" stroke="#000" stroke-width="1.8" fill="none"/></svg>
<div class="t" style="left:1469.5px;top:485.9px;font-size:12.3px;color:#fff;transform:scaleX(0.900);transform-origin:0 0;">Wall</div>
<div class="t" style="left:1525.7px;top:485.9px;font-size:12.3px;color:#fff;transform:scaleX(0.900);transform-origin:0 0;">Basiswand:GK 12.5:5...</div>
<div class="t" style="left:1734.0px;top:485.9px;font-size:12.3px;color:#fff;transform:scaleX(0.900);transform-origin:0 0;">0SQYYex0n4JA51YX9kJQ9_</div>
<div class="a" style="left:1369px;top:500px;width:523px;height:18px;background:#fff;"></div>
<div class="a" style="left:1517px;top:500px;width:1px;height:18px;background:#b0b0b0;"></div>
<div class="a" style="left:1649px;top:500px;width:1px;height:18px;background:#b0b0b0;"></div>
<div class="a" style="left:1725px;top:500px;width:1px;height:18px;background:#b0b0b0;"></div>
<div class="a" style="left:1892px;top:500px;width:1px;height:18px;background:#b0b0b0;"></div>
<div class="a" style="left:1369px;top:517px;width:523px;height:1px;background:#d0d0d0;"></div>
<div class="a" style="left:1463.8px;top:503px;width:12px;height:12px;background:#fafafa;border:1px solid #777;"></div>
<svg style="left:1464.8px;top:504px;" width="10" height="10" viewBox="0 0 10 10"><path d="M1.5 5L4 7.8L8.8 2" stroke="#000" stroke-width="1.8" fill="none"/></svg>
<div class="t" style="left:1482.3px;top:503.9px;font-size:12.3px;color:#1a1a1a;transform:scaleX(0.900);transform-origin:0 0;">Op...</div>
<div class="t" style="left:1525.7px;top:503.9px;font-size:12.3px;color:#1a1a1a;transform:scaleX(0.900);transform-origin:0 0;">Drehflügel 1-flg - Stah...</div>
<div class="t" style="left:1734.0px;top:503.9px;font-size:12.3px;color:#1a1a1a;transform:scaleX(0.900);transform-origin:0 0;">0SQYYex0n4JA51YW5kJQ91</div>
<div class="a" style="left:1369px;top:518px;width:523px;height:18px;background:#fff;"></div>
<div class="a" style="left:1517px;top:518px;width:1px;height:18px;background:#b0b0b0;"></div>
<div class="a" style="left:1649px;top:518px;width:1px;height:18px;background:#b0b0b0;"></div>
<div class="a" style="left:1725px;top:518px;width:1px;height:18px;background:#b0b0b0;"></div>
<div class="a" style="left:1892px;top:518px;width:1px;height:18px;background:#b0b0b0;"></div>
<div class="a" style="left:1369px;top:535px;width:523px;height:1px;background:#d0d0d0;"></div>
<div class="a" style="left:1451.0px;top:521px;width:12px;height:12px;background:#fafafa;border:1px solid #777;"></div>
<svg style="left:1452.0px;top:522px;" width="10" height="10" viewBox="0 0 10 10"><path d="M1.5 5L4 7.8L8.8 2" stroke="#000" stroke-width="1.8" fill="none"/></svg>
<div class="t" style="left:1469.5px;top:521.9px;font-size:12.3px;color:#1a1a1a;transform:scaleX(0.900);transform-origin:0 0;">Wall</div>
<div class="t" style="left:1525.7px;top:521.9px;font-size:12.3px;color:#1a1a1a;transform:scaleX(0.900);transform-origin:0 0;">Basiswand:GK 12.5:5...</div>
<div class="t" style="left:1734.0px;top:521.9px;font-size:12.3px;color:#1a1a1a;transform:scaleX(0.900);transform-origin:0 0;">0SQYYex0n4JA51YX9kJQCW</div>
<div class="a" style="left:1369px;top:536px;width:523px;height:14px;background:#fff;"></div>
<div class="a" style="left:1517px;top:536px;width:1px;height:14px;background:#b0b0b0;"></div>
<div class="a" style="left:1649px;top:536px;width:1px;height:14px;background:#b0b0b0;"></div>
<div class="a" style="left:1725px;top:536px;width:1px;height:14px;background:#b0b0b0;"></div>
<div class="a" style="left:1892px;top:536px;width:1px;height:14px;background:#b0b0b0;"></div>
<div class="a" style="left:1451.0px;top:539px;width:12px;height:12px;background:#fafafa;border:1px solid #777;"></div>
<svg style="left:1452.0px;top:540px;" width="10" height="10" viewBox="0 0 10 10"><path d="M1.5 5L4 7.8L8.8 2" stroke="#000" stroke-width="1.8" fill="none"/></svg>
<div class="t" style="left:1469.5px;top:539.9px;font-size:12.3px;color:#1a1a1a;transform:scaleX(0.900);transform-origin:0 0;">Wall</div>
<div class="t" style="left:1525.7px;top:539.9px;font-size:12.3px;color:#1a1a1a;transform:scaleX(0.900);transform-origin:0 0;">Basiswand:GK 12.5:5...</div>
<div class="t" style="left:1734.0px;top:539.9px;font-size:12.3px;color:#1a1a1a;transform:scaleX(0.900);transform-origin:0 0;">0SQYYex0n4JA51YX9kJQCZ</div>
<div class="a" style="left:1391px;top:230px;width:1px;height:9px;background:#a0a0a0;"></div>
<div class="a" style="left:1404px;top:248px;width:1px;height:9px;background:#a0a0a0;"></div>
<div class="a" style="left:1417px;top:266px;width:1px;height:36px;background:#a0a0a0;"></div>
<div class="a" style="left:1430px;top:302px;width:1px;height:118px;background:#a0a0a0;"></div>
<div class="a" style="left:1443px;top:428px;width:1px;height:122px;background:#a0a0a0;"></div>
<div class="a" style="left:1456px;top:500px;width:1px;height:9px;background:#a0a0a0;"></div>
<div class="a" style="left:1443px;top:455px;width:8px;height:1px;background:#a0a0a0;"></div>
<div class="a" style="left:1443px;top:473px;width:8px;height:1px;background:#a0a0a0;"></div>
<div class="a" style="left:1443px;top:527px;width:8px;height:1px;background:#a0a0a0;"></div>
<div class="a" style="left:1443px;top:545px;width:8px;height:1px;background:#a0a0a0;"></div>
<div class="a" style="left:1456px;top:509px;width:8px;height:1px;background:#a0a0a0;"></div>
<div class="a" style="left:1914px;top:212px;width:13px;height:338px;background:#f0f0f0;"></div>
<div class="a" style="left:1914px;top:230px;width:13px;height:135px;background:#c8c8c8;"></div>
<svg style="left:1916px;top:217px;" width="9" height="6" viewBox="0 0 9 6"><path d="M0.5 5.5L4.5 1.5L8.5 5.5" stroke="#555" stroke-width="1.3" fill="none"/></svg>
<svg style="left:1916px;top:539px;" width="9" height="6" viewBox="0 0 9 6"><path d="M0.5 0.5L4.5 4.5L8.5 0.5" stroke="#555" stroke-width="1.3" fill="none"/></svg>
<div class="a" style="left:1369px;top:550px;width:558px;height:1px;background:#d0d0d0;"></div>
<div class="a" style="left:1369px;top:553px;width:558px;height:3px;background:#dcecfa;"></div>
<div class="a" style="left:1369px;top:556px;width:558px;height:434px;background:#fff;"></div>
<div class="a" style="left:1369px;top:556px;width:558px;height:20px;background:#fbfbfb;"></div>
<div class="a" style="left:1369px;top:576px;width:558px;height:1px;background:#dadada;"></div>
<div class="t" style="left:1372.3px;top:559.6px;font-size:12.3px;color:#1a1a1a;transform:scaleX(0.828);transform-origin:0 0;">DBD-BIM Manager</div>
<svg style="left:1881px;top:559px;" width="14" height="13" viewBox="0 0 14 13"><rect x="0.5" y="0.5" width="13" height="12" fill="#eef2f7" stroke="#4a5a70"/><rect x="3.5" y="4.5" width="7" height="4" fill="none" stroke="#4a5a70"/></svg>
<svg style="left:1897px;top:559px;" width="12" height="13" viewBox="0 0 12 13"><path d="M2 0.5H10M3 0.5V6H9V0.5M1 6.5H11M6 6.5V12.5" stroke="#777" fill="none"/></svg>
<div class="a" style="left:1914px;top:560px;width:12px;height:12px;background:#d9393a;"></div>
<svg style="left:1916px;top:562px;" width="8" height="8" viewBox="0 0 8 8"><path d="M1.5 1.5L6.5 6.5M6.5 1.5L1.5 6.5" stroke="#fff" stroke-width="1.6"/></svg>
<div class="a" style="left:1369px;top:581px;width:558px;height:30px;background:#e9e9e9;"></div>
<svg style="left:1393px;top:591px;" width="15" height="11" viewBox="0 0 15 11"><rect x="0" y="0" width="15" height="2.6" fill="#333"/><rect x="0" y="4.2" width="15" height="2.6" fill="#333"/><rect x="0" y="8.4" width="15" height="2.6" fill="#333"/></svg>
<svg style="left:1421px;top:588px;" width="15" height="15" viewBox="0 0 15 15"><circle cx="6" cy="6" r="4.6" fill="none" stroke="#333" stroke-width="1.6"/><path d="M9.5 9.5L14 14" stroke="#333" stroke-width="2.2"/></svg>
<div class="t" style="left:1743.4px;top:589.2px;font-size:12.8px;color:#222;transform:scaleX(0.907);transform-origin:0 0;">2022-10</div>
<div class="t" style="left:1817.0px;top:582.7px;font-size:24px;color:#f5bd15;font-weight:bold;transform:scaleX(0.981);transform-origin:0 0;">DBD</div>
<div class="t" style="left:1867.5px;top:582.7px;font-size:24px;color:#575757;font-weight:bold;transform:scaleX(1.046);transform-origin:0 0;">BIM</div>
<svg style="left:1386px;top:622px;" width="13" height="13" viewBox="0 0 13 13"><circle cx="6.5" cy="6.5" r="5.7" fill="none" stroke="#3a78d0" stroke-width="1.4"/><path d="M7 3.5L4 6.5L7 9.5M4 6.5H10" stroke="#3a78d0" stroke-width="1.5" fill="none"/></svg>
<div class="t" style="left:1401.7px;top:622.0px;font-size:13px;color:#333;transform:scaleX(0.961);transform-origin:0 0;">Außenwandkonstruktionen</div>
<div class="t" style="left:1881.3px;top:622.0px;font-size:13px;color:#aaaaaa;transform:scaleX(0.851);transform-origin:0 0;">V 20.0</div>
<div class="a" style="left:1369px;top:644px;width:558px;height:25px;background:#e9e9e9;"></div>
<div class="a" style="left:1387px;top:644px;width:86px;height:25px;background:#f5c518;"></div>
<div class="t" style="left:1397.3px;top:650.4px;font-size:12.5px;color:#222;font-weight:bold;transform:scaleX(0.846);transform-origin:0 0;">Konfigurator</div>
<div class="a" style="left:1474px;top:644px;width:139px;height:25px;background:#e2e2e2;"></div>
<div class="a" style="left:1615px;top:644px;width:117px;height:25px;background:#e2e2e2;"></div>
<div class="a" style="left:1734px;top:644px;width:90px;height:25px;background:#e2e2e2;"></div>
<div class="a" style="left:1473px;top:644px;width:1px;height:25px;background:#f8f8f8;"></div>
<div class="a" style="left:1613.5px;top:644px;width:1px;height:25px;background:#f8f8f8;"></div>
<div class="a" style="left:1732.5px;top:644px;width:1px;height:25px;background:#f8f8f8;"></div>
<div class="a" style="left:1824px;top:644px;width:1px;height:25px;background:#f8f8f8;"></div>
<div class="t" style="left:1484.7px;top:650.4px;font-size:12.5px;color:#333;font-weight:bold;transform:scaleX(0.842);transform-origin:0 0;">Leistungen + Baupreise</div>
<div class="t" style="left:1625.5px;top:650.4px;font-size:12.5px;color:#333;font-weight:bold;transform:scaleX(0.831);transform-origin:0 0;">Regeln der Technik</div>
<div class="t" style="left:1744.0px;top:650.4px;font-size:12.5px;color:#333;font-weight:bold;transform:scaleX(0.861);transform-origin:0 0;">Klassifikation</div>
<div class="a" style="left:1386px;top:677px;width:82px;height:23px;background:#fff;border:1px solid #cfcfcf;"></div>
<div class="a" style="left:1472px;top:677px;width:104px;height:23px;background:#fff;border:1px solid #cfcfcf;"></div>
<div class="a" style="left:1581.5px;top:677px;width:96.5px;height:23px;background:#fff;border:1px solid #cfcfcf;"></div>
<svg style="left:1396px;top:681px;" width="12" height="12" viewBox="0 0 12 12"><path d="M6 0L7.8 4.1L12 4.4L8.8 7.2L9.8 11.6L6 9.3L2.2 11.6L3.2 7.2L0 4.4L4.2 4.1Z" fill="#333"/></svg>
<div class="t" style="left:1414.3px;top:682.2px;font-size:12.8px;color:#333;transform:scaleX(0.910);transform-origin:0 0;">Vorlagen</div>
<svg style="left:1481.5px;top:681.3px;" width="12.4" height="12.4" viewBox="0 0 12.4 12.4"><circle cx="6.2" cy="6.2" r="6.2" fill="#444"/><path d="M3.7 3.7L8.7 8.7M8.7 3.7L3.7 8.7" stroke="#fff" stroke-width="1.5"/></svg>
<div class="t" style="left:1500.5px;top:682.2px;font-size:12.8px;color:#333;transform:scaleX(0.885);transform-origin:0 0;">Zurücksetzen</div>
<svg style="left:1590px;top:681px;" width="13" height="13" viewBox="0 0 13 13"><circle cx="6.5" cy="6.5" r="6" fill="#333"/><rect x="3" y="4" width="7" height="5" fill="none" stroke="#fff" stroke-width="1.1"/><path d="M3 4L6.5 7L10 4" stroke="#fff" fill="none"/></svg>
<div class="t" style="left:1610.0px;top:682.2px;font-size:12.8px;color:#333;transform:scaleX(0.860);transform-origin:0 0;">Anregungen</div>
<svg style="left:1897px;top:680px;" width="17" height="17" viewBox="0 0 17 17"><circle cx="8.5" cy="8.5" r="5.2" fill="none" stroke="#333" stroke-width="3.2"/><path d="M8.5 0.5V4M8.5 13V16.5M0.5 8.5H4M13 8.5H16.5M2.8 2.8L5.3 5.3M11.7 11.7L14.2 14.2M14.2 2.8L11.7 5.3M5.3 11.7L2.8 14.2" stroke="#333" stroke-width="2.6"/></svg>
<div class="a" style="left:1369px;top:707px;width:558px;height:23px;background:#e6e6e6;"></div>
<div class="t" style="left:1386.1px;top:712.2px;font-size:12.8px;color:#333;font-weight:bold;transform:scaleX(0.924);transform-origin:0 0;">Außenwandkonstruktion Mauerwerk tragend [m2]</div>
<svg style="left:1386px;top:747px;" width="11" height="14" viewBox="0 0 11 14"><circle cx="3" cy="3" r="2.4" fill="#f5c518"/><circle cx="8" cy="4" r="2.4" fill="#36a0d8"/><circle cx="5" cy="8" r="2.6" fill="#e04070"/><path d="M5 9V14" stroke="#e04070"/></svg>
<div class="t" style="left:1401.7px;top:744.3px;font-size:13px;color:#333;transform:scaleX(0.952);transform-origin:0 0;">Außenwandkonstruktionen</div>
<svg style="left:1555.7px;top:745px;" width="13" height="13" viewBox="0 0 13 13"><circle cx="6.5" cy="6.5" r="6.3" fill="#aaa"/><path d="M6.5 3V10M3 6.5H10" stroke="#fff" stroke-width="2"/></svg>
<svg style="left:1574px;top:744.5px;" width="12" height="12" viewBox="0 0 12 12"><path d="M6 0L7.8 4.1L12 4.4L8.8 7.2L9.8 11.6L6 9.3L2.2 11.6L3.2 7.2L0 4.4L4.2 4.1Z" fill="#f5b800"/></svg>
<svg style="left:1592px;top:745px;" width="13" height="13" viewBox="0 0 13 13"><path d="M3 3.5A5 5 0 1 1 2 8" stroke="#999" stroke-width="1.3" fill="none"/><path d="M1 1.5V5H4.5" stroke="#999" stroke-width="1.3" fill="none"/><path d="M6.5 4V7.5H9" stroke="#999" stroke-width="1.2" fill="none"/></svg>
<div class="a" style="left:1392px;top:762px;width:1px;height:11px;background:#aaa;"></div>
<div class="a" style="left:1392px;top:773px;width:8px;height:1px;background:#aaa;"></div>
<svg style="left:1402px;top:775px;" width="5" height="5" viewBox="0 0 5 5"><circle cx="2.5" cy="2.5" r="2.3" fill="#999"/></svg>
<div class="t" style="left:1414.3px;top:770.0px;font-size:13px;color:#333;transform:scaleX(0.952);transform-origin:0 0;">Wandkonstruktionen Mauerwerk</div>
<svg style="left:1599px;top:770px;" width="13" height="13" viewBox="0 0 13 13"><circle cx="6.5" cy="6.5" r="6.3" fill="#aaa"/><path d="M6.5 3V10M3 6.5H10" stroke="#fff" stroke-width="2"/></svg>
<svg style="left:1617px;top:770px;" width="13" height="13" viewBox="0 0 13 13"><path d="M3 3.5A5 5 0 1 1 2 8" stroke="#999" stroke-width="1.3" fill="none"/><path d="M1 1.5V5H4.5" stroke="#999" stroke-width="1.3" fill="none"/><path d="M6.5 4V7.5H9" stroke="#999" stroke-width="1.2" fill="none"/></svg>
<div class="a" style="left:1405px;top:782px;width:1px;height:15px;background:#aaa;"></div>
<div class="a" style="left:1405px;top:797px;width:8px;height:1px;background:#aaa;"></div>
<svg style="left:1415.5px;top:795.5px;" width="5" height="5" viewBox="0 0 5 5"><circle cx="2.5" cy="2.5" r="2.3" fill="#f5c518"/></svg>
<div class="t" style="left:1427.2px;top:791.0px;font-size:13px;color:#333;transform:scaleX(0.901);transform-origin:0 0;">Wände - U-Ziegel</div>
<svg style="left:1526.3px;top:791px;" width="13" height="13" viewBox="0 0 13 13"><path d="M3 3.5A5 5 0 1 1 2 8" stroke="#999" stroke-width="1.3" fill="none"/><path d="M1 1.5V5H4.5" stroke="#999" stroke-width="1.3" fill="none"/><path d="M6.5 4V7.5H9" stroke="#999" stroke-width="1.2" fill="none"/></svg>
<div class="a" style="left:1914px;top:731px;width:12px;height:83px;background:#f4f4f4;"></div>
<div class="a" style="left:1915px;top:747px;width:11px;height:45px;background:#c8c8c8;"></div>
<svg style="left:1917px;top:737px;" width="7" height="4" viewBox="0 0 7 4"><path d="M0 4H7L3.5 0Z" fill="#666"/></svg>
<svg style="left:1917px;top:801px;" width="7" height="4" viewBox="0 0 7 4"><path d="M0 0H7L3.5 4Z" fill="#666"/></svg>
<div class="a" style="left:1369px;top:814px;width:558px;height:1px;background:#a8a8a8;"></div>
<div class="a" style="left:1369px;top:815px;width:558px;height:21px;background:#e6e6e6;"></div>
<div class="t" style="left:1386.1px;top:819.2px;font-size:12.8px;color:#333;font-weight:bold;transform:scaleX(0.930);transform-origin:0 0;">Außenwandkonstruktionen</div>
<div class="a" style="left:1369px;top:836px;width:558px;height:24px;background:#fff;"></div>
<div class="t" style="left:1386.1px;top:841.0px;font-size:13px;color:#333;transform:scaleX(0.956);transform-origin:0 0;">Bauteil</div>
<div class="t" style="left:1623.7px;top:842.0px;font-size:13px;color:#2a4d9c;transform:scaleX(0.964);transform-origin:0 0;">Außenwandkonstruktion</div>
<svg style="left:1901px;top:841.5px;" width="12" height="12" viewBox="0 0 12 12"><circle cx="6" cy="6" r="6" fill="#444"/><path d="M3.5 3.5L8.5 8.5M8.5 3.5L3.5 8.5" stroke="#fff" stroke-width="1.5"/></svg>
<div class="a" style="left:1369px;top:860px;width:558px;height:24px;background:#f4f4f4;"></div>
<div class="t" style="left:1386.1px;top:865.0px;font-size:13px;color:#333;transform:scaleX(0.945);transform-origin:0 0;">Bauweise / Baustoff Konstruktion</div>
<div class="t" style="left:1623.7px;top:866.0px;font-size:13px;color:#2a4d9c;transform:scaleX(0.949);transform-origin:0 0;">Mauerwerk</div>
<svg style="left:1901px;top:865.5px;" width="12" height="12" viewBox="0 0 12 12"><circle cx="6" cy="6" r="6" fill="#444"/><path d="M3.5 3.5L8.5 8.5M8.5 3.5L3.5 8.5" stroke="#fff" stroke-width="1.5"/></svg>
<div class="a" style="left:1369px;top:884px;width:558px;height:24px;background:#fff;"></div>
<div class="t" style="left:1386.1px;top:889.0px;font-size:13px;color:#333;transform:scaleX(0.945);transform-origin:0 0;">Dicke Wandkonstruktion</div>
<div class="a" style="left:1369px;top:908px;width:558px;height:24px;background:#f4f4f4;"></div>
<div class="t" style="left:1386.1px;top:913.0px;font-size:13px;color:#333;transform:scaleX(0.929);transform-origin:0 0;">Tragverhalten Wand</div>
<div class="t" style="left:1623.7px;top:914.0px;font-size:13px;color:#2a4d9c;transform:scaleX(0.941);transform-origin:0 0;">tragend</div>
<svg style="left:1901px;top:913.5px;" width="12" height="12" viewBox="0 0 12 12"><circle cx="6" cy="6" r="6" fill="#444"/><path d="M3.5 3.5L8.5 8.5M8.5 3.5L3.5 8.5" stroke="#fff" stroke-width="1.5"/></svg>
<div class="a" style="left:1624px;top:885.5px;width:100px;height:21.5px;background:#fff;border:1px solid #cfcfcf;"></div>
<div class="t" style="left:1657.0px;top:890.2px;font-size:12.8px;color:#333;transform:scaleX(1.046);transform-origin:0 0;">0,000</div>
<svg style="left:1707px;top:890px;" width="12" height="12" viewBox="0 0 12 12"><path d="M10 4.5A4.5 4.5 0 0 0 2 4M2 7.5A4.5 4.5 0 0 0 10 8" stroke="#999" stroke-width="1.3" fill="none"/><path d="M10 1V5H6M2 11V7H6" stroke="#999" stroke-width="1.2" fill="none"/></svg>
<div class="t" style="left:1732.3px;top:890.0px;font-size:13px;color:#333;transform:scaleX(0.923);transform-origin:0 0;">m</div>
<div class="a" style="left:1369px;top:947px;width:558px;height:1px;background:#b0b0b0;"></div>
<div class="a" style="left:1386px;top:954px;width:148px;height:26px;background:#8ea60c;border-radius:2px;box-shadow:0 1px 1px rgba(0,0,0,.25)"></div>
<div class="t" style="left:1402.5px;top:960.6px;font-size:13.5px;color:#fff;font-weight:bold;transform:scaleX(0.941);transform-origin:0 0;">Daten übernehmen</div>
<div class="a" style="left:1369px;top:987px;width:558px;height:1px;background:#c8c8c8;"></div>
<div class="a" style="left:15px;top:990px;width:1912px;height:25px;background:#fcfcfc;"></div>
<div class="a" style="left:18px;top:993px;width:2px;height:20px;background:repeating-linear-gradient(to bottom,#c8c8c8 0 2px,transparent 2px 4px)"></div>
<div class="a" style="left:26px;top:996px;width:16px;height:16px;background:#fff;border:1px solid #5a86c0;"></div>
<div class="t" style="left:29.3px;top:997.6px;font-size:14px;color:#2f5f9e;">Y</div>
<div class="t" style="left:77.2px;top:998.5px;font-size:12.3px;color:#1a1a1a;transform:scaleX(1.036);transform-origin:0 0;">21.26.9</div>
<div class="a" style="left:126px;top:996px;width:16px;height:16px;background:#fff;border:1px solid #5a86c0;"></div>
<div class="t" style="left:129.7px;top:997.6px;font-size:14px;color:#2f5f9e;">Z</div>
<div class="t" style="left:198.0px;top:998.5px;font-size:12.3px;color:#1a1a1a;">-0.0</div>
<div class="a" style="left:226.5px;top:996px;width:16px;height:16px;background:#fff;border:1px solid #5a86c0;"></div>
<div class="t" style="left:227.9px;top:997.6px;font-size:14px;color:#2f5f9e;">W</div>
<div class="t" style="left:274.0px;top:998.5px;font-size:12.3px;color:#1a1a1a;transform:scaleX(1.012);transform-origin:0 0;">134.777</div>
<div class="a" style="left:326px;top:996px;width:16px;height:16px;background:#fff;border:1px solid #5a86c0;"></div>
<div class="t" style="left:328.9px;top:997.6px;font-size:14px;color:#2f5f9e;">D</div>
<div class="t" style="left:377.0px;top:998.5px;font-size:12.3px;color:#1a1a1a;transform:scaleX(1.036);transform-origin:0 0;">29.96.2</div>
<svg style="left:461px;top:995px;" width="8" height="6" viewBox="0 0 8 6"><path d="M0.5 0.5L3 3L0.5 5.5M4 0.5L6.5 3L4 5.5" stroke="#000" stroke-width="1.2" fill="none"/></svg>
<svg style="left:465px;top:1008px;" width="7" height="4" viewBox="0 0 7 4"><path d="M0 0 L7 0 L3.5 4Z" fill="#000"/></svg>
<div class="a" style="left:480px;top:993px;width:2px;height:20px;background:repeating-linear-gradient(to bottom,#cfcfcf 0 2px,transparent 2px 4px)"></div>
<div class="t" style="left:489.0px;top:998.5px;font-size:12.3px;color:#1a1a1a;transform:scaleX(0.975);transform-origin:0 0;">Liste der Pläne</div>
<div class="t" style="left:577.8px;top:998.5px;font-size:12.3px;color:#1a1a1a;transform:scaleX(0.987);transform-origin:0 0;">E-01-Werkplanung</div>
<div class="a" style="left:707px;top:995px;width:16px;height:18px;background:#e1e1e1;border:1px solid #adadad;"></div>
<svg style="left:707px;top:995px;" width="16" height="18" viewBox="0 0 16 18"><path d="M4.0 7.0 L8.0 11.0 L12.0 7.0" stroke="#555" stroke-width="1.1" fill="none"/></svg>
<svg style="left:729px;top:995px;" width="17" height="17" viewBox="0 0 17 17"><path d="M0.5 0.5H10L14.5 5V14.5H0.5Z" fill="#fff" stroke="#444"/><rect x="7.5" y="8.5" width="8" height="8" fill="#fff" stroke="#444"/><path d="M11.5 10V15M9 12.5H14" stroke="#444"/></svg>
<div class="a" style="left:751.5px;top:994px;width:1px;height:19px;background:#bdbdbd;"></div>
<div class="t" style="left:759.2px;top:998.5px;font-size:12.3px;color:#1a1a1a;">Architektur-Detaillierungen</div>
<div class="t" style="left:913.0px;top:998.5px;font-size:12.3px;color:#1a1a1a;transform:scaleX(0.976);transform-origin:0 0;">Werkplan</div>
<div class="a" style="left:992px;top:995px;width:16px;height:18px;background:#e1e1e1;border:1px solid #adadad;"></div>
<svg style="left:992px;top:995px;" width="16" height="18" viewBox="0 0 16 18"><path d="M4.0 7.0 L8.0 11.0 L12.0 7.0" stroke="#555" stroke-width="1.1" fill="none"/></svg>
<div class="a" style="left:1013px;top:994px;width:1px;height:19px;background:#bdbdbd;"></div>
<div class="t" style="left:1018.0px;top:998.5px;font-size:12.3px;color:#1a1a1a;">Layout</div>
<div class="a" style="left:1077px;top:995px;width:16px;height:18px;background:#e1e1e1;border:1px solid #adadad;"></div>
<svg style="left:1077px;top:995px;" width="16" height="18" viewBox="0 0 16 18"><path d="M4.0 7.0 L8.0 11.0 L12.0 7.0" stroke="#555" stroke-width="1.1" fill="none"/></svg>
<div class="a" style="left:1098px;top:994px;width:1px;height:19px;background:#bdbdbd;"></div>
<div class="t" style="left:1102.8px;top:998.5px;font-size:12.3px;color:#1a1a1a;">Werkplanung</div>
<div class="a" style="left:1222.5px;top:995px;width:16px;height:18px;background:#e1e1e1;border:1px solid #adadad;"></div>
<svg style="left:1222.5px;top:995px;" width="16" height="18" viewBox="0 0 16 18"><path d="M4.0 7.0 L8.0 11.0 L12.0 7.0" stroke="#555" stroke-width="1.1" fill="none"/></svg>
<div class="a" style="left:1243px;top:994px;width:1px;height:19px;background:#bdbdbd;"></div>
<div class="t" style="left:1250.3px;top:998.5px;font-size:12.3px;color:#1a1a1a;transform:scaleX(0.956);transform-origin:0 0;">Plotmaßstab</div>
<div class="t" style="left:1326.0px;top:998.5px;font-size:12.3px;color:#1a1a1a;transform:scaleX(1.028);transform-origin:0 0;">1:50</div>
<div class="a" style="left:1381px;top:995px;width:16px;height:18px;background:#e1e1e1;border:1px solid #adadad;"></div>
<svg style="left:1381px;top:995px;" width="16" height="18" viewBox="0 0 16 18"><path d="M4.0 7.0 L8.0 11.0 L12.0 7.0" stroke="#555" stroke-width="1.1" fill="none"/></svg>
<div class="a" style="left:1401px;top:994px;width:1px;height:19px;background:#bdbdbd;"></div>
<svg style="left:1407px;top:995px;" width="16" height="16" viewBox="0 0 16 16"><defs><linearGradient id="cw2" x1="0" y1="0" x2="1" y2="1"><stop offset="0" stop-color="#f1615d"/><stop offset=".35" stop-color="#f6c85a"/><stop offset=".65" stop-color="#7fc97f"/><stop offset="1" stop-color="#6a8ae0"/></linearGradient></defs><circle cx="8" cy="8" r="7.5" fill="url(#cw2)"/></svg>
<svg style="left:1431px;top:995px;" width="17" height="16" viewBox="0 0 17 16"><rect x="0.5" y="0.5" width="15" height="13" fill="#fff" stroke="#2a4a7a"/><path d="M0.5 5.5H15.5M8 0.5V13.5" stroke="#2a4a7a"/><circle cx="12" cy="12" r="3" fill="#aab8c8"/></svg>
<svg style="left:1455px;top:995px;" width="17" height="16" viewBox="0 0 17 16"><rect x="0.5" y="0.5" width="15" height="13" fill="#fff" stroke="#2a4a7a"/><path d="M0.5 5.5H15.5M8 0.5V13.5" stroke="#2a4a7a"/><circle cx="12" cy="12" r="3" fill="#aab8c8"/></svg>
<div class="a" style="left:1477.5px;top:994px;width:1px;height:19px;background:#bdbdbd;"></div>
<svg style="left:1484px;top:995px;" width="16" height="16" viewBox="0 0 16 16"><rect x="0.5" y="1.5" width="14" height="12" fill="#fff" stroke="#333" stroke-dasharray="2 1"/><rect x="7.5" y="7.5" width="7" height="6" fill="#fff" stroke="#333"/></svg>
<svg style="left:1506px;top:1008px;" width="7" height="4" viewBox="0 0 7 4"><path d="M0 0 L7 0 L3.5 4Z" fill="#000"/></svg>
<div class="a" style="left:1522px;top:993px;width:2px;height:20px;background:repeating-linear-gradient(to bottom,#cfcfcf 0 2px,transparent 2px 4px)"></div>
<div class="a" style="left:1526px;top:992px;width:95px;height:22px;background:#cce4f7;border:1px solid #a9d1f2;"></div>
<div class="a" style="left:1646px;top:992px;width:46px;height:22px;background:#cce4f7;border:1px solid #a9d1f2;"></div>
<div class="a" style="left:1699px;top:992px;width:47px;height:22px;background:#cce4f7;border:1px solid #a9d1f2;"></div>
<div class="a" style="left:1752px;top:992px;width:119px;height:22px;background:#cce4f7;border:1px solid #a9d1f2;"></div>
<div class="a" style="left:1896px;top:992px;width:24px;height:22px;background:#cce4f7;border:1px solid #a9d1f2;"></div>
<div class="a" style="left:1550px;top:993px;width:1px;height:20px;background:#a9d1f2;"></div>
<div class="a" style="left:1574px;top:993px;width:1px;height:20px;background:#a9d1f2;"></div>
<div class="a" style="left:1597px;top:993px;width:1px;height:20px;background:#a9d1f2;"></div>
<div class="a" style="left:1669px;top:993px;width:1px;height:20px;background:#a9d1f2;"></div>
<div class="a" style="left:1722px;top:993px;width:1px;height:20px;background:#a9d1f2;"></div>
<div class="a" style="left:1776px;top:993px;width:1px;height:20px;background:#a9d1f2;"></div>
<div class="a" style="left:1800px;top:993px;width:1px;height:20px;background:#a9d1f2;"></div>
<div class="a" style="left:1824px;top:993px;width:1px;height:20px;background:#a9d1f2;"></div>
<div class="a" style="left:1847px;top:993px;width:1px;height:20px;background:#a9d1f2;"></div>
<div class="a" style="left:1696px;top:994px;width:1px;height:19px;background:#bdbdbd;"></div>
<div class="a" style="left:1749px;top:994px;width:1px;height:19px;background:#bdbdbd;"></div>
<svg style="left:1531px;top:996px;" width="15" height="14" viewBox="0 0 15 14"><rect x="0.5" y="0.5" width="14" height="13" fill="#fff" stroke="#333"/><path d="M0.5 3H14.5" stroke="#333" stroke-width="1.5"/><path d="M3 6H12M3 9H12" stroke="#2a5e9e"/></svg>
<svg style="left:1555px;top:996px;" width="15" height="14" viewBox="0 0 15 14"><rect x="0.5" y="0.5" width="14" height="13" fill="#fff" stroke="#333"/><path d="M0.5 3H14.5" stroke="#333" stroke-width="1.5"/><path d="M3 6H12M3 9H12" stroke="#2a5e9e"/></svg>
<svg style="left:1579px;top:996px;" width="15" height="14" viewBox="0 0 15 14"><rect x="0.5" y="0.5" width="14" height="13" fill="#fff" stroke="#333"/><path d="M0.5 3H14.5" stroke="#333" stroke-width="1.5"/><path d="M3 6H12M3 9H12" stroke="#2a5e9e"/></svg>
<svg style="left:1602px;top:996px;" width="15" height="14" viewBox="0 0 15 14"><rect x="0.5" y="0.5" width="14" height="13" fill="#fff" stroke="#333"/><path d="M0.5 3H14.5" stroke="#333" stroke-width="1.5"/><path d="M3 6H12M3 9H12" stroke="#2a5e9e"/></svg>
<svg style="left:1625px;top:996px;" width="15" height="14" viewBox="0 0 15 14"><rect x="0.5" y="0.5" width="14" height="13" fill="#fff" stroke="#333"/><path d="M0.5 3H14.5" stroke="#333" stroke-width="1.5"/><path d="M3 6H12M3 9H12" stroke="#2a5e9e"/></svg>
<svg style="left:1650px;top:996px;" width="15" height="14" viewBox="0 0 15 14"><rect x="0.5" y="0.5" width="14" height="13" fill="#fff" stroke="#333"/><path d="M0.5 3H14.5" stroke="#333" stroke-width="1.5"/><path d="M3 6H12M3 9H12" stroke="#2a5e9e"/></svg>
<svg style="left:1674px;top:996px;" width="15" height="14" viewBox="0 0 15 14"><rect x="0.5" y="0.5" width="14" height="13" fill="#fff" stroke="#333"/><path d="M0.5 3H14.5" stroke="#333" stroke-width="1.5"/><path d="M3 6H12M3 9H12" stroke="#2a5e9e"/></svg>
<svg style="left:1703px;top:996px;" width="16" height="15" viewBox="0 0 16 15"><path d="M2 2H14M2 5H14M2 8H14M2 11H14M2 14H14" stroke="#333" stroke-dasharray="1 2"/></svg>
<svg style="left:1727px;top:996px;" width="16" height="16" viewBox="0 0 16 16"><path d="M1 1H15V15Z" fill="none" stroke="#333"/><path d="M1 1L15 15M4 1L15 12M7 1L15 9M1 4L12 15" stroke="#333"/></svg>
<svg style="left:1757px;top:994px;" width="16" height="18" viewBox="0 0 16 18"><path d="M4 16V2M4 16H15" stroke="#1a8a1a" stroke-width="1.5"/><path d="M4 2L2 5H6Z" fill="#1a8a1a"/><path d="M4 16L14 12" stroke="#d02020" stroke-width="1.5"/><circle cx="13" cy="14" r="2.5" fill="#aab8c8"/></svg>
<svg style="left:1781px;top:995px;" width="16" height="16" viewBox="0 0 16 16"><path d="M8 3V11L2 14M8 11L15 13" stroke="#3a5ad0" stroke-width="1.4" fill="none"/><path d="M8 11L2 14" stroke="#d02020" stroke-width="1.4"/></svg>
<svg style="left:1804px;top:995px;" width="17" height="17" viewBox="0 0 17 17"><rect x="2.5" y="2.5" width="12" height="11" fill="#ddd" stroke="#333"/><path d="M2.5 13.5L14.5 2.5M0 2.5H17M2.5 0V17" stroke="#333"/><circle cx="13" cy="13" r="3" fill="#aab8c8"/></svg>
<svg style="left:1828px;top:995px;" width="17" height="17" viewBox="0 0 17 17"><rect x="2.5" y="2.5" width="12" height="11" fill="none" stroke="#333"/><path d="M0 2.5H17M2.5 0V17M14.5 0V17" stroke="#333"/><circle cx="13" cy="13" r="3" fill="#aab8c8"/></svg>
<svg style="left:1852px;top:996px;" width="16" height="15" viewBox="0 0 16 15"><rect x="0.5" y="0.5" width="15" height="13" fill="#fff" stroke="#333"/><rect x="3" y="5" width="10" height="5" fill="#6a98d0"/><circle cx="12" cy="12" r="3" fill="#aab8c8"/></svg>
<svg style="left:1876px;top:995px;" width="17" height="17" viewBox="0 0 17 17"><rect x="1.5" y="1.5" width="13" height="12" fill="none" stroke="#2a5e9e" stroke-dasharray="2 1.5"/><circle cx="13" cy="13" r="3" fill="#aab8c8"/></svg>
<svg style="left:1900px;top:995px;" width="16" height="16" viewBox="0 0 16 16"><circle cx="8" cy="8" r="3.5" fill="none" stroke="#3a7ad0" stroke-width="1.4"/><path d="M8 0V3M8 13V16M0 8H3M13 8H16" stroke="#3a7ad0" stroke-width="1.4"/></svg>
<svg style="left:1921px;top:1009px;" width="7" height="4" viewBox="0 0 7 4"><path d="M0 0 L7 0 L3.5 4Z" fill="#000"/></svg>
</body></html>
